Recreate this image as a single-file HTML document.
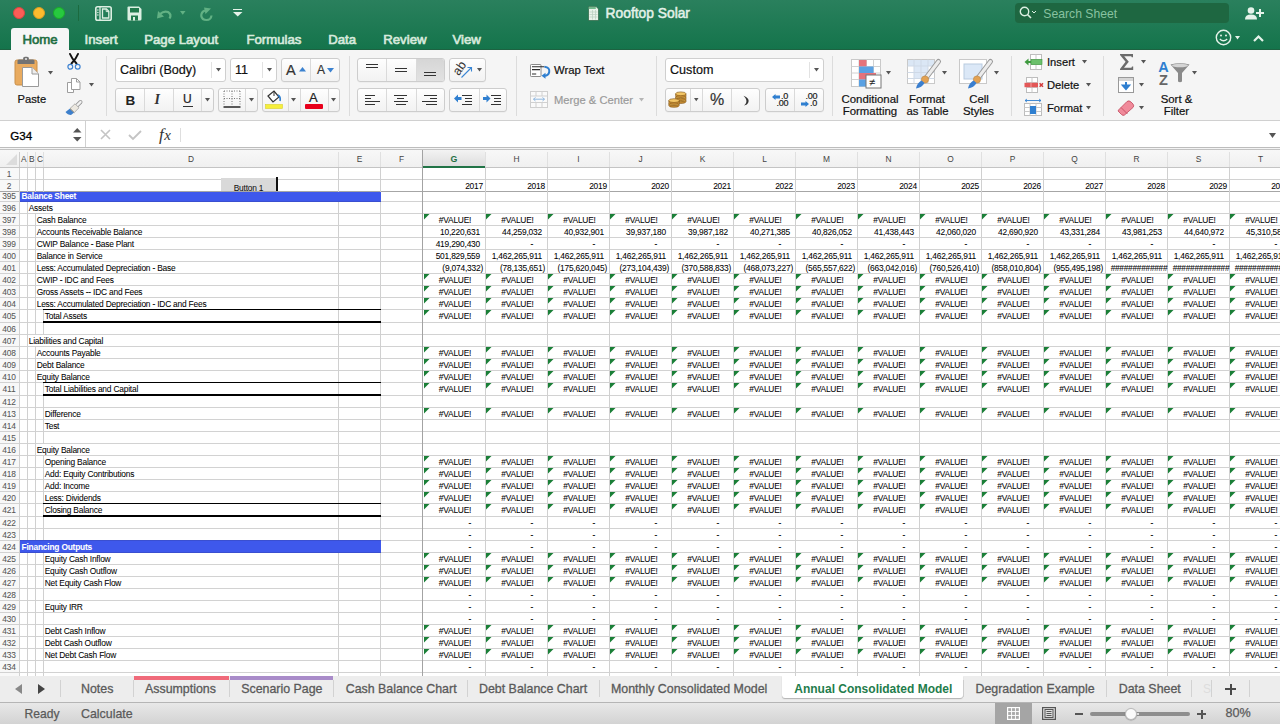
<!DOCTYPE html><html><head><meta charset="utf-8"><style>
html,body{margin:0;padding:0;}
body{width:1280px;height:724px;overflow:hidden;position:relative;font-family:'Liberation Sans', sans-serif;background:#fff;}
div{box-sizing:border-box;}
</style></head><body>
<div style="position:absolute;left:0px;top:0px;width:1280px;height:50px;background:linear-gradient(#2a805d,#14744b);"></div>
<div style="position:absolute;left:0px;top:49px;width:1280px;height:1px;background:#1d6241;"></div>
<div style="position:absolute;left:12.7px;top:6.7px;width:12px;height:12px;background:#fc5d57;border-radius:50%;border:0.5px solid #de4540;"></div>
<div style="position:absolute;left:32.8px;top:6.7px;width:12px;height:12px;background:#fdbb2e;border-radius:50%;border:0.5px solid #dd9d22;"></div>
<div style="position:absolute;left:52.8px;top:6.7px;width:12px;height:12px;background:#27c93f;border-radius:50%;border:0.5px solid #1aab29;"></div>
<div style="position:absolute;left:78px;top:5px;width:1px;height:16px;background:#1b6a3f;"></div>
<div style="position:absolute;left:605.6px;top:7.32px;font-size:13.8px;line-height:1;white-space:pre;color:#e3f1e8;font-weight:normal;-webkit-text-stroke:0.5px #e3f1e8;">Rooftop Solar</div>
<svg style="position:absolute;left:94.5px;top:5.5px;overflow:visible" width="17" height="15" viewBox="0 0 17 15"><rect x="0.8" y="0.8" width="15.4" height="13.4" rx="1.8" fill="none" stroke="#dcefe2" stroke-width="1.6"/><path d="M5 1 V14" stroke="#dcefe2" stroke-width="1.3"/><circle cx="2.9" cy="4" r="0.75" fill="#dcefe2"/><circle cx="2.9" cy="6.5" r="0.75" fill="#dcefe2"/><circle cx="2.9" cy="9" r="0.75" fill="#dcefe2"/><path d="M7.5 3 H11.5 L13.8 5.3 V12 H7.5 Z" fill="none" stroke="#dcefe2" stroke-width="1.3"/><path d="M11.2 3 V5.6 H13.8" fill="none" stroke="#dcefe2" stroke-width="1"/></svg>
<svg style="position:absolute;left:126.5px;top:5.5px;overflow:visible" width="15" height="15" viewBox="0 0 15 15"><path d="M1.5 0.5 H12 L14.5 3 V13 Q14.5 14.5 13 14.5 H1.5 Q0.5 14.5 0.5 13.5 V1.5 Q0.5 0.5 1.5 0.5 Z" fill="#dcefe2"/><rect x="3" y="2" width="9" height="4.5" fill="#227a4d"/><rect x="4" y="9.5" width="7" height="5" fill="#227a4d"/><rect x="6" y="11" width="2" height="3.5" fill="#dcefe2"/></svg>
<svg style="position:absolute;left:156.5px;top:8.5px;overflow:visible" width="16" height="11" viewBox="0 0 16 11"><path d="M3 5 Q7 1.5 11 3 Q15 5.5 12.5 9.5" fill="none" stroke="#62b184" stroke-width="2.2"/><path d="M0 9.5 L1 2 L7 7.5 Z" fill="#62b184"/></svg>
<svg style="position:absolute;left:179.95px;top:10.7px;overflow:visible" width="5.5" height="3.8" viewBox="0 0 5.5 3.8"><path d="M0 0 L5.5 0 L2.75 3.8 Z" fill="#62b184"/></svg>
<svg style="position:absolute;left:199.5px;top:6.5px;overflow:visible" width="14" height="14" viewBox="0 0 14 14"><path d="M5 3.5 Q1 5 1.3 9 Q2 13 6.5 13 Q11 13 11.5 8.5" fill="none" stroke="#62b184" stroke-width="2.2"/><path d="M4 0.5 L11 1.5 L5.5 7 Z" fill="#62b184"/></svg>
<div style="position:absolute;left:233px;top:9px;width:8.5px;height:1.4px;background:#e6f3ea;"></div>
<svg style="position:absolute;left:232.5px;top:11.5px;overflow:visible" width="9.5" height="5" viewBox="0 0 9.5 5"><path d="M0 0 H9.5 L4.75 4.6 Z" fill="#e6f3ea"/></svg>
<svg style="position:absolute;left:587.5px;top:5.5px;overflow:visible" width="11" height="15" viewBox="0 0 11 15"><path d="M0.5 0.5 H8 L10.5 3 V14.5 H0.5 Z" fill="#e9f3ea" stroke="#1a5533" stroke-width="0.6"/><rect x="0.8" y="0.8" width="7" height="2.2" fill="#74b98d"/><path d="M1.5 6 H9.5 M1.5 8.5 H9.5 M1.5 11 H9.5 M4.5 4 V13.5 M7.5 4 V13.5" stroke="#b9cfbf" stroke-width="0.7"/></svg>
<div style="position:absolute;left:1015px;top:3px;width:214px;height:20px;background:#1e6741;border-radius:4px;"></div>
<svg style="position:absolute;left:1019px;top:6px;overflow:visible" width="16" height="13" viewBox="0 0 16 13"><circle cx="5.5" cy="5.5" r="4.2" fill="none" stroke="#dcefe2" stroke-width="1.4"/><path d="M8.5 8.5 L12 12" stroke="#dcefe2" stroke-width="1.6"/><path d="M13 5 L15 7 L17 5" fill="none" stroke="#dcefe2" stroke-width="1"/></svg>
<div style="position:absolute;left:1043.3px;top:8.17px;font-size:12.2px;line-height:1;white-space:pre;color:#88c2a0;font-weight:normal;">Search Sheet</div>
<svg style="position:absolute;left:1244.5px;top:6.5px;overflow:visible" width="19" height="13" viewBox="0 0 19 13"><circle cx="6" cy="3.5" r="3.3" fill="#e6f3ea"/><path d="M0 12.5 Q0 7.5 6 7.5 Q12 7.5 12 12.5 Z" fill="#e6f3ea"/><path d="M15 2 V10 M11 6 H19" stroke="#e6f3ea" stroke-width="2"/></svg>
<svg style="position:absolute;left:1214.5px;top:29px;overflow:visible" width="17" height="17" viewBox="0 0 17 17"><circle cx="8.5" cy="8.5" r="7.2" fill="none" stroke="#e6f3ea" stroke-width="1.4"/><circle cx="6" cy="6.5" r="1" fill="#e6f3ea"/><circle cx="11" cy="6.5" r="1" fill="#e6f3ea"/><path d="M4.8 10 Q8.5 13.5 12.2 10" fill="none" stroke="#e6f3ea" stroke-width="1.3"/></svg>
<svg style="position:absolute;left:1235.0px;top:35.75px;overflow:visible" width="5" height="3.5" viewBox="0 0 5 3.5"><path d="M0 0 L5 0 L2.5 3.5 Z" fill="#e6f3ea"/></svg>
<svg style="position:absolute;left:1252.5px;top:34.5px;overflow:visible" width="11" height="7" viewBox="0 0 11 7"><path d="M1 6 L5.5 1.5 L10 6" fill="none" stroke="#e6f3ea" stroke-width="2.2"/></svg>
<div style="position:absolute;left:11px;top:28px;width:58px;height:22px;background:#f6f6f6;border-radius:3px 3px 0 0;"></div>
<div style="position:absolute;left:22.5px;top:32.83px;font-size:13.2px;line-height:1;white-space:pre;color:#1e6e42;font-weight:normal;-webkit-text-stroke:0.65px #1e6e42;">Home</div>
<div style="position:absolute;left:84.6px;top:32.83px;font-size:13.2px;line-height:1;white-space:pre;color:#d7eadd;font-weight:normal;-webkit-text-stroke:0.65px #d7eadd;">Insert</div>
<div style="position:absolute;left:144.2px;top:32.83px;font-size:13.2px;line-height:1;white-space:pre;color:#d7eadd;font-weight:normal;-webkit-text-stroke:0.65px #d7eadd;">Page Layout</div>
<div style="position:absolute;left:246.4px;top:32.83px;font-size:13.2px;line-height:1;white-space:pre;color:#d7eadd;font-weight:normal;-webkit-text-stroke:0.65px #d7eadd;">Formulas</div>
<div style="position:absolute;left:328.25px;top:32.83px;font-size:13.2px;line-height:1;white-space:pre;color:#d7eadd;font-weight:normal;-webkit-text-stroke:0.65px #d7eadd;">Data</div>
<div style="position:absolute;left:383.25px;top:32.83px;font-size:13.2px;line-height:1;white-space:pre;color:#d7eadd;font-weight:normal;-webkit-text-stroke:0.65px #d7eadd;">Review</div>
<div style="position:absolute;left:452.5px;top:32.83px;font-size:13.2px;line-height:1;white-space:pre;color:#d7eadd;font-weight:normal;-webkit-text-stroke:0.65px #d7eadd;">View</div>
<div style="position:absolute;left:0px;top:50px;width:1280px;height:71px;background:#f5f5f5;border-bottom:1px solid #d0d0d0;"></div>
<svg style="position:absolute;left:14px;top:56px;overflow:visible" width="28" height="32" viewBox="0 0 28 32"><rect x="1" y="4" width="22" height="25" rx="2" fill="#e9ab5f" stroke="#c98f48" stroke-width="1"/><path d="M5 3.5 h14 a1.5 1.5 0 0 1 1.5 1.5 v3 h-17 v-3 a1.5 1.5 0 0 1 1.5 -1.5 z" fill="#737373"/><rect x="9" y="0.8" width="6" height="4" rx="2" fill="#737373"/><circle cx="12" cy="3" r="1" fill="#e9e9e9"/><path d="M8.5 11.5 h9.5 l6.5 6.5 v12.5 h-16 z" fill="#fff" stroke="#9a9a9a" stroke-width="1"/><path d="M18 11.5 v6.5 h6.5" fill="#eee" stroke="#9a9a9a" stroke-width="1"/></svg><div style="position:absolute;left:17.5px;top:93.52px;font-size:11.2px;line-height:1;white-space:pre;color:#111;font-weight:normal;-webkit-text-stroke:0.2px #111;">Paste</div><svg style="position:absolute;left:48.0px;top:71.05px;overflow:visible" width="5" height="3.5" viewBox="0 0 5 3.5"><path d="M0 0 L5 0 L2.5 3.5 Z" fill="#555"/></svg><svg style="position:absolute;left:66px;top:53px;overflow:visible" width="16" height="18" viewBox="0 0 16 18"><path d="M4 1 Q6 6 10.5 10.5 M12 1 Q10 6 5.5 10.5" stroke="#111" stroke-width="2" fill="none" stroke-linecap="round"/><circle cx="4.3" cy="13.8" r="2.4" fill="none" stroke="#3d82d1" stroke-width="1.2"/><circle cx="11.7" cy="13.8" r="2.4" fill="none" stroke="#3d82d1" stroke-width="1.2"/></svg><svg style="position:absolute;left:66px;top:77px;overflow:visible" width="16" height="17" viewBox="0 0 16 17"><path d="M1.5 5.5 h6 l0 0 v10 h-6 z" fill="#fff" stroke="#9d9d9d"/><path d="M5.5 1.5 h5 l3.5 3.5 v7.5 h-8.5 z" fill="#fff" stroke="#9d9d9d"/><path d="M10.5 1.5 v3.5 h3.5" fill="none" stroke="#9d9d9d"/></svg><svg style="position:absolute;left:89.0px;top:83.05px;overflow:visible" width="5" height="3.5" viewBox="0 0 5 3.5"><path d="M0 0 L5 0 L2.5 3.5 Z" fill="#555"/></svg><svg style="position:absolute;left:65px;top:100px;overflow:visible" width="18" height="16" viewBox="0 0 18 16"><path d="M15.5 2 L11.5 6" stroke="#9a9a9a" stroke-width="4" stroke-linecap="round"/><path d="M15.5 2 L11.5 6" stroke="#f2f2f2" stroke-width="2.4" stroke-linecap="round"/><path d="M5 8.5 L10 3.8 L14 7.8 L9.2 12.6 Z" fill="#ece8e0" stroke="#9a9a9a" stroke-width="0.7"/><path d="M5 8.5 L7.2 10.6 L9.2 12.6 L6 15 Q2.5 15 0.5 12 Z" fill="#3d7fcb"/><path d="M5 8.5 L9.2 12.6" stroke="#b59e7a" stroke-width="1"/></svg><div style="position:absolute;left:106px;top:56px;width:1px;height:60px;background:#dcdcdc;"></div><div style="position:absolute;left:115px;top:58px;width:111px;height:24px;border:1px solid #cfcfcf;border-radius:3px;background:#fff;"></div><div style="position:absolute;left:211px;top:62px;width:1px;height:16px;background:#e2e2e2;"></div><div style="position:absolute;left:120px;top:64.33px;font-size:12.6px;line-height:1;white-space:pre;color:#111;font-weight:normal;-webkit-text-stroke:0.2px #111;">Calibri (Body)</div><svg style="position:absolute;left:216.0px;top:68.25px;overflow:visible" width="5" height="3.5" viewBox="0 0 5 3.5"><path d="M0 0 L5 0 L2.5 3.5 Z" fill="#555"/></svg><div style="position:absolute;left:230px;top:58px;width:47px;height:24px;border:1px solid #cfcfcf;border-radius:3px;background:#fff;"></div><div style="position:absolute;left:262px;top:62px;width:1px;height:16px;background:#e2e2e2;"></div><div style="position:absolute;left:235px;top:64.33px;font-size:12.6px;line-height:1;white-space:pre;color:#111;font-weight:normal;-webkit-text-stroke:0.2px #111;">11</div><svg style="position:absolute;left:267.0px;top:68.25px;overflow:visible" width="5" height="3.5" viewBox="0 0 5 3.5"><path d="M0 0 L5 0 L2.5 3.5 Z" fill="#555"/></svg><div style="position:absolute;left:281px;top:58px;width:59px;height:24px;border:1px solid #cdcdcd;border-radius:3px;background:linear-gradient(#fefefe,#f2f2f2);box-shadow:0 0.5px 0 rgba(0,0,0,0.06);"></div><div style="position:absolute;left:310px;top:59px;width:1px;height:22px;background:#dadada;"></div><div style="position:absolute;left:286px;top:62.53px;font-size:14.5px;line-height:1;white-space:pre;color:#333;font-weight:normal;-webkit-text-stroke:0.2px #333;">A</div><svg style="position:absolute;left:299px;top:67px;overflow:visible" width="8" height="5" viewBox="0 0 8 5"><path d="M0 4.5 L7 4.5 L3.5 0 Z" fill="#3b82d0"/></svg><div style="position:absolute;left:317px;top:63.84px;font-size:12px;line-height:1;white-space:pre;color:#333;font-weight:normal;-webkit-text-stroke:0.2px #333;">A</div><svg style="position:absolute;left:327px;top:68px;overflow:visible" width="8" height="5" viewBox="0 0 8 5"><path d="M0 0 L7 0 L3.5 4.5 Z" fill="#3b82d0"/></svg><div style="position:absolute;left:115px;top:88px;width:99px;height:24px;border:1px solid #cdcdcd;border-radius:3px;background:linear-gradient(#fefefe,#f2f2f2);box-shadow:0 0.5px 0 rgba(0,0,0,0.06);"></div><div style="position:absolute;left:144px;top:89px;width:1px;height:22px;background:#dadada;"></div><div style="position:absolute;left:173px;top:89px;width:1px;height:22px;background:#dadada;"></div><div style="position:absolute;left:201px;top:89px;width:1px;height:22px;background:#dadada;"></div><div style="position:absolute;left:125.5px;top:93.57px;font-size:13.5px;line-height:1;white-space:pre;color:#222;font-weight:bold;">B</div><div style="position:absolute;left:154.5px;top:92.5px;font-family:'Liberation Serif',serif;font-style:italic;font-weight:bold;font-size:14px;line-height:1;color:#333;">I</div><div style="position:absolute;left:183px;top:93.34px;font-size:12px;line-height:1;white-space:pre;color:#222;font-weight:normal;-webkit-text-stroke:0.2px #222;">U</div><div style="position:absolute;left:183px;top:106px;width:10px;height:1px;background:#333;"></div><svg style="position:absolute;left:205.0px;top:98.25px;overflow:visible" width="5" height="3.5" viewBox="0 0 5 3.5"><path d="M0 0 L5 0 L2.5 3.5 Z" fill="#555"/></svg><div style="position:absolute;left:218px;top:88px;width:40px;height:24px;border:1px solid #cdcdcd;border-radius:3px;background:linear-gradient(#fefefe,#f2f2f2);box-shadow:0 0.5px 0 rgba(0,0,0,0.06);"></div><div style="position:absolute;left:245px;top:89px;width:1px;height:22px;background:#dadada;"></div><svg style="position:absolute;left:223px;top:90px;overflow:visible" width="18" height="18" viewBox="0 0 18 18"><path d="M1 1 H17 M1 1 V16 M17 1 V16 M9 1 V16 M1 8.5 H17" stroke="#777" stroke-width="1" stroke-dasharray="1 1.5" fill="none"/><path d="M0.5 17 H17.5" stroke="#333" stroke-width="1.6"/></svg><svg style="position:absolute;left:249.0px;top:98.25px;overflow:visible" width="5" height="3.5" viewBox="0 0 5 3.5"><path d="M0 0 L5 0 L2.5 3.5 Z" fill="#555"/></svg><div style="position:absolute;left:262px;top:88px;width:78px;height:24px;border:1px solid #cdcdcd;border-radius:3px;background:linear-gradient(#fefefe,#f2f2f2);box-shadow:0 0.5px 0 rgba(0,0,0,0.06);"></div><div style="position:absolute;left:288px;top:89px;width:1px;height:22px;background:#dadada;"></div><div style="position:absolute;left:300px;top:89px;width:1px;height:22px;background:#dadada;"></div><div style="position:absolute;left:328px;top:89px;width:1px;height:22px;background:#dadada;"></div><svg style="position:absolute;left:265px;top:89px;overflow:visible" width="18" height="20" viewBox="0 0 18 20"><path d="M3 7 L9 2 L14 8 L8 13 Z" fill="#fff" stroke="#333" stroke-width="1.2"/><path d="M9 2 V7" stroke="#333" stroke-width="1"/><path d="M13 6 Q16 8 15 12" stroke="#2f7fd0" stroke-width="1.6" fill="none"/><rect x="0.5" y="15.5" width="17" height="4" fill="#f6ef3c" stroke="#d9d12a" stroke-width="0.6"/></svg><svg style="position:absolute;left:291.3px;top:98.25px;overflow:visible" width="5" height="3.5" viewBox="0 0 5 3.5"><path d="M0 0 L5 0 L2.5 3.5 Z" fill="#555"/></svg><div style="position:absolute;left:309px;top:90.80px;font-size:13px;line-height:1;white-space:pre;color:#222;font-weight:normal;-webkit-text-stroke:0.2px #222;">A</div><div style="position:absolute;left:305px;top:104px;width:18px;height:4.5px;background:#e8001c;border-radius:1px;"></div><svg style="position:absolute;left:331.0px;top:98.25px;overflow:visible" width="5" height="3.5" viewBox="0 0 5 3.5"><path d="M0 0 L5 0 L2.5 3.5 Z" fill="#555"/></svg><div style="position:absolute;left:349px;top:56px;width:1px;height:60px;background:#dcdcdc;"></div><div style="position:absolute;left:357px;top:58px;width:88px;height:24px;border:1px solid #cdcdcd;border-radius:3px;background:linear-gradient(#fefefe,#f2f2f2);box-shadow:0 0.5px 0 rgba(0,0,0,0.06);"></div><div style="position:absolute;left:416px;top:59px;width:28px;height:22px;background:linear-gradient(#d6d6d6,#e2e2e2);border-radius:0 2px 2px 0;"></div><div style="position:absolute;left:386px;top:59px;width:1px;height:22px;background:#dadada;"></div><div style="position:absolute;left:416px;top:59px;width:1px;height:22px;background:#dadada;"></div><div style="position:absolute;left:366px;top:64px;width:12px;height:1px;background:#333;"></div><div style="position:absolute;left:366px;top:67px;width:12px;height:1px;background:#333;"></div><div style="position:absolute;left:395px;top:68px;width:12px;height:1px;background:#333;"></div><div style="position:absolute;left:395px;top:71px;width:12px;height:1px;background:#333;"></div><div style="position:absolute;left:424px;top:72px;width:12px;height:1px;background:#333;"></div><div style="position:absolute;left:424px;top:75px;width:12px;height:1px;background:#333;"></div><div style="position:absolute;left:449px;top:58px;width:37px;height:24px;border:1px solid #cdcdcd;border-radius:3px;background:linear-gradient(#fefefe,#f2f2f2);box-shadow:0 0.5px 0 rgba(0,0,0,0.06);"></div><div style="position:absolute;left:453px;top:60.5px;width:16px;height:14px;font-size:12.5px;line-height:1;color:#333;transform:rotate(-55deg);transform-origin:50% 50%;">ab</div><svg style="position:absolute;left:459px;top:63px;overflow:visible" width="16" height="16" viewBox="0 0 16 16"><path d="M2.5 14.5 L12.5 4.5 M8.5 4.5 H12.5 V8.5" stroke="#3a86d4" stroke-width="1.1" fill="none"/></svg><svg style="position:absolute;left:477.0px;top:67.75px;overflow:visible" width="5" height="3.5" viewBox="0 0 5 3.5"><path d="M0 0 L5 0 L2.5 3.5 Z" fill="#555"/></svg><div style="position:absolute;left:357px;top:88px;width:88px;height:24px;border:1px solid #cdcdcd;border-radius:3px;background:linear-gradient(#fefefe,#f2f2f2);box-shadow:0 0.5px 0 rgba(0,0,0,0.06);"></div><div style="position:absolute;left:386px;top:89px;width:1px;height:22px;background:#dadada;"></div><div style="position:absolute;left:416px;top:89px;width:1px;height:22px;background:#dadada;"></div><div style="position:absolute;left:365px;top:95px;width:10px;height:1px;background:#333;"></div><div style="position:absolute;left:365px;top:98px;width:6px;height:1px;background:#333;"></div><div style="position:absolute;left:365px;top:101px;width:15px;height:1px;background:#333;"></div><div style="position:absolute;left:365px;top:104px;width:10px;height:1px;background:#333;"></div><div style="position:absolute;left:394px;top:95px;width:13px;height:1px;background:#333;"></div><div style="position:absolute;left:397px;top:98px;width:7px;height:1px;background:#333;"></div><div style="position:absolute;left:394px;top:101px;width:14px;height:1px;background:#333;"></div><div style="position:absolute;left:396px;top:104px;width:10px;height:1px;background:#333;"></div><div style="position:absolute;left:424px;top:95px;width:13px;height:1px;background:#333;"></div><div style="position:absolute;left:430px;top:98px;width:7px;height:1px;background:#333;"></div><div style="position:absolute;left:422px;top:101px;width:15px;height:1px;background:#333;"></div><div style="position:absolute;left:426px;top:104px;width:11px;height:1px;background:#333;"></div><div style="position:absolute;left:449px;top:88px;width:58px;height:24px;border:1px solid #cdcdcd;border-radius:3px;background:linear-gradient(#fefefe,#f2f2f2);box-shadow:0 0.5px 0 rgba(0,0,0,0.06);"></div><div style="position:absolute;left:479px;top:89px;width:1px;height:22px;background:#dadada;"></div><div style="position:absolute;left:462px;top:95px;width:10px;height:1px;background:#333;"></div><div style="position:absolute;left:465px;top:98px;width:7px;height:1px;background:#333;"></div><div style="position:absolute;left:465px;top:101px;width:7px;height:1px;background:#333;"></div><div style="position:absolute;left:462px;top:104px;width:10px;height:1px;background:#333;"></div><svg style="position:absolute;left:454px;top:94px;overflow:visible" width="8" height="9" viewBox="0 0 8 9"><path d="M0 4.5 L4 0.5 V3 H7.5 V6 H4 V8.5 Z" fill="#2f7fd0"/></svg><div style="position:absolute;left:491px;top:95px;width:10px;height:1px;background:#333;"></div><div style="position:absolute;left:494px;top:98px;width:7px;height:1px;background:#333;"></div><div style="position:absolute;left:494px;top:101px;width:7px;height:1px;background:#333;"></div><div style="position:absolute;left:491px;top:104px;width:10px;height:1px;background:#333;"></div><svg style="position:absolute;left:483px;top:94px;overflow:visible" width="8" height="9" viewBox="0 0 8 9"><path d="M7.5 4.5 L3.5 0.5 V3 H0 V6 H3.5 V8.5 Z" fill="#2f7fd0"/></svg><div style="position:absolute;left:516px;top:56px;width:1px;height:60px;background:#dcdcdc;"></div><svg style="position:absolute;left:529px;top:62px;overflow:visible" width="23" height="17" viewBox="0 0 23 17"><rect x="1.5" y="2.5" width="10.5" height="12" rx="0.8" fill="#fff" stroke="#8a8a8a" stroke-width="1"/><path d="M3 4.8 H15.5 M3 7.6 H11 M3 12 H7.2" stroke="#2b2b2b" stroke-width="1.1"/><path d="M15.5 4.8 Q21 5.5 20.2 10 Q19.5 13.6 15.5 13.8" stroke="#2f7fd0" stroke-width="2" fill="none"/><path d="M12.5 13.8 L16.5 10.8 V16.8 Z" fill="#2f7fd0"/></svg><div style="position:absolute;left:554px;top:64.93px;font-size:11.3px;line-height:1;white-space:pre;color:#111;font-weight:normal;-webkit-text-stroke:0.2px #111;">Wrap Text</div><svg style="position:absolute;left:530px;top:91px;overflow:visible" width="18" height="17" viewBox="0 0 18 17"><rect x="0.5" y="0.5" width="17" height="16" fill="#fafafa" stroke="#cfcfcf"/><path d="M0.5 5 H17.5 M0.5 11.5 H17.5 M6 0.5 V5 M12 0.5 V5 M6 11.5 V16.5 M12 11.5 V16.5" stroke="#d0d0d0"/><path d="M3.5 8.2 H14.5 M3.5 8.2 L5.5 6.5 M3.5 8.2 L5.5 10 M14.5 8.2 L12.5 6.5 M14.5 8.2 L12.5 10" stroke="#8fb7e0" stroke-width="1"/></svg><div style="position:absolute;left:554px;top:94.52px;font-size:11.2px;line-height:1;white-space:pre;color:#9a9a9a;font-weight:normal;-webkit-text-stroke:0.2px #9a9a9a;">Merge &amp; Center</div><svg style="position:absolute;left:639.0px;top:98.05px;overflow:visible" width="5" height="3.5" viewBox="0 0 5 3.5"><path d="M0 0 L5 0 L2.5 3.5 Z" fill="#b5b5b5"/></svg><div style="position:absolute;left:656px;top:56px;width:1px;height:60px;background:#dcdcdc;"></div><div style="position:absolute;left:665px;top:58px;width:159px;height:24px;border:1px solid #cfcfcf;border-radius:3px;background:#fff;"></div><div style="position:absolute;left:809px;top:62px;width:1px;height:16px;background:#e2e2e2;"></div><div style="position:absolute;left:670px;top:64.33px;font-size:12.6px;line-height:1;white-space:pre;color:#111;font-weight:normal;-webkit-text-stroke:0.2px #111;">Custom</div><svg style="position:absolute;left:814.0px;top:68.25px;overflow:visible" width="5" height="3.5" viewBox="0 0 5 3.5"><path d="M0 0 L5 0 L2.5 3.5 Z" fill="#555"/></svg><div style="position:absolute;left:665px;top:88px;width:95px;height:24px;border:1px solid #cdcdcd;border-radius:3px;background:linear-gradient(#fefefe,#f2f2f2);box-shadow:0 0.5px 0 rgba(0,0,0,0.06);"></div><div style="position:absolute;left:690px;top:89px;width:1px;height:22px;background:#dadada;"></div><div style="position:absolute;left:702px;top:89px;width:1px;height:22px;background:#dadada;"></div><div style="position:absolute;left:731px;top:89px;width:1px;height:22px;background:#dadada;"></div><svg style="position:absolute;left:668px;top:91px;overflow:visible" width="20" height="17" viewBox="0 0 20 17"><path d="M7.6000000000000005 8.8 v1.8 a5.2 1.9 0 0 0 10.4 0 v-1.8" fill="#c98f35" stroke="#7a4e10" stroke-width="0.6"/><ellipse cx="12.8" cy="8.8" rx="5.2" ry="1.9" fill="#f2c565" stroke="#7a4e10" stroke-width="0.6"/><path d="M7.6000000000000005 5.8 v1.8 a5.2 1.9 0 0 0 10.4 0 v-1.8" fill="#c98f35" stroke="#7a4e10" stroke-width="0.6"/><ellipse cx="12.8" cy="5.8" rx="5.2" ry="1.9" fill="#f2c565" stroke="#7a4e10" stroke-width="0.6"/><path d="M7.6000000000000005 2.8 v1.8 a5.2 1.9 0 0 0 10.4 0 v-1.8" fill="#c98f35" stroke="#7a4e10" stroke-width="0.6"/><ellipse cx="12.8" cy="2.8" rx="5.2" ry="1.9" fill="#f2c565" stroke="#7a4e10" stroke-width="0.6"/><path d="M0.7999999999999998 12.6 v1.8 a5.2 1.9 0 0 0 10.4 0 v-1.8" fill="#c98f35" stroke="#7a4e10" stroke-width="0.6"/><ellipse cx="6.0" cy="12.6" rx="5.2" ry="1.9" fill="#f2c565" stroke="#7a4e10" stroke-width="0.6"/><path d="M0.7999999999999998 9.6 v1.8 a5.2 1.9 0 0 0 10.4 0 v-1.8" fill="#c98f35" stroke="#7a4e10" stroke-width="0.6"/><ellipse cx="6.0" cy="9.6" rx="5.2" ry="1.9" fill="#f2c565" stroke="#7a4e10" stroke-width="0.6"/></svg><svg style="position:absolute;left:693.75px;top:98.4px;overflow:visible" width="4.5" height="3.2" viewBox="0 0 4.5 3.2"><path d="M0 0 L4.5 0 L2.25 3.2 Z" fill="#555"/></svg><div style="position:absolute;left:710px;top:91.96px;font-size:16px;line-height:1;white-space:pre;color:#333;font-weight:normal;-webkit-text-stroke:0.2px #333;font-weight:300;">%</div><svg style="position:absolute;left:742px;top:95px;overflow:visible" width="8" height="11" viewBox="0 0 8 11"><path d="M1.5 0.8 Q7.5 3 6.5 7 Q5.5 10 2 10.5 Q5 8 4.3 5 Q3.8 3 1.5 0.8 Z" fill="#333"/></svg><div style="position:absolute;left:765px;top:88px;width:59px;height:24px;border:1px solid #cdcdcd;border-radius:3px;background:linear-gradient(#fefefe,#f2f2f2);box-shadow:0 0.5px 0 rgba(0,0,0,0.06);"></div><div style="position:absolute;left:794px;top:89px;width:1px;height:22px;background:#dadada;"></div><svg style="position:absolute;left:772px;top:93.5px;overflow:visible" width="9" height="6" viewBox="0 0 9 6"><path d="M0 3 L3.5 0 V1.6 H8 V4.4 H3.5 V6 Z" fill="#2f7fd0"/></svg><div style="position:absolute;left:781px;top:91.98px;font-size:9px;line-height:1;white-space:pre;color:#222;font-weight:normal;-webkit-text-stroke:0.2px #222;letter-spacing:-0.2px;">.0</div><div style="position:absolute;left:776.5px;top:99.38px;font-size:9px;line-height:1;white-space:pre;color:#222;font-weight:normal;-webkit-text-stroke:0.2px #222;letter-spacing:-0.2px;">.00</div><div style="position:absolute;left:805.5px;top:91.98px;font-size:9px;line-height:1;white-space:pre;color:#222;font-weight:normal;-webkit-text-stroke:0.2px #222;letter-spacing:-0.2px;">.00</div><svg style="position:absolute;left:800.5px;top:101px;overflow:visible" width="9" height="6" viewBox="0 0 9 6"><path d="M8 3 L4.5 0 V1.6 H0 V4.4 H4.5 V6 Z" fill="#2f7fd0"/></svg><div style="position:absolute;left:810px;top:99.38px;font-size:9px;line-height:1;white-space:pre;color:#222;font-weight:normal;-webkit-text-stroke:0.2px #222;letter-spacing:-0.2px;">.0</div><div style="position:absolute;left:832px;top:56px;width:1px;height:60px;background:#dcdcdc;"></div><svg style="position:absolute;left:851px;top:59px;overflow:visible" width="32" height="30" viewBox="0 0 32 30"><rect x="0.5" y="0.5" width="29" height="27" fill="#fff" stroke="#c9c9c9"/><path d="M0.5 7.5 H29.5 M0.5 14 H29.5 M0.5 20.5 H29.5 M8 0.5 V27.5 M15.5 0.5 V27.5 M22.5 0.5 V27.5" stroke="#d2d2d2"/><rect x="8" y="1" width="7.5" height="6.5" fill="#e5737b"/><rect x="8" y="7.5" width="14.5" height="6.5" fill="#5aa1e3"/><rect x="8" y="14" width="17" height="6.5" fill="#e5737b"/><rect x="8" y="20.5" width="7.5" height="7" fill="#5aa1e3"/><rect x="15" y="16" width="15" height="13" fill="#fff" stroke="#777" stroke-width="1"/><text x="18" y="27" font-family="Liberation Sans" font-size="11" fill="#222">≠</text></svg><svg style="position:absolute;left:885.5px;top:70.75px;overflow:visible" width="5" height="3.5" viewBox="0 0 5 3.5"><path d="M0 0 L5 0 L2.5 3.5 Z" fill="#555"/></svg><div style="position:absolute;left:770px;width:200px;text-align:center;top:94.35px;font-size:11.4px;line-height:1;white-space:pre;color:#111;font-weight:normal;-webkit-text-stroke:0.2px #111;">Conditional</div><div style="position:absolute;left:770px;width:200px;text-align:center;top:105.65px;font-size:11.4px;line-height:1;white-space:pre;color:#111;font-weight:normal;-webkit-text-stroke:0.2px #111;">Formatting</div><svg style="position:absolute;left:907px;top:59px;overflow:visible" width="34" height="30" viewBox="0 0 34 30"><rect x="0.5" y="0.5" width="27" height="24" fill="#fff" stroke="#c9c9c9"/><rect x="1" y="1" width="26" height="6" fill="#dbe7f5"/><rect x="7" y="7" width="14" height="13" fill="#dde8f6"/><path d="M0.5 7 H27.5 M0.5 13.5 H27.5 M0.5 19.5 H27.5 M7 0.5 V24.5 M14 0.5 V24.5 M21 0.5 V24.5" stroke="#cfd9e6"/><path d="M31.5 2.5 L19 19" stroke="#9a9a9a" stroke-width="5" stroke-linecap="round"/><path d="M31.5 2.5 L19 19" stroke="#ececec" stroke-width="3" stroke-linecap="round"/><circle cx="18" cy="20.5" r="3.6" fill="#e3a253" stroke="#b9833f" stroke-width="0.6"/><path d="M9 29.5 Q10 24 14.5 21.5 L17.5 24 Q15 28.5 9 29.5 Z" fill="#3b7fcf"/></svg><svg style="position:absolute;left:941.5px;top:70.75px;overflow:visible" width="5" height="3.5" viewBox="0 0 5 3.5"><path d="M0 0 L5 0 L2.5 3.5 Z" fill="#555"/></svg><div style="position:absolute;left:827px;width:200px;text-align:center;top:94.35px;font-size:11.4px;line-height:1;white-space:pre;color:#111;font-weight:normal;-webkit-text-stroke:0.2px #111;">Format</div><div style="position:absolute;left:827.5px;width:200px;text-align:center;top:105.65px;font-size:11.4px;line-height:1;white-space:pre;color:#111;font-weight:normal;-webkit-text-stroke:0.2px #111;">as Table</div><svg style="position:absolute;left:959px;top:59px;overflow:visible" width="34" height="30" viewBox="0 0 34 30"><rect x="0.5" y="0.5" width="27" height="24" fill="#fff" stroke="#c9c9c9"/><rect x="5" y="5" width="18" height="15" fill="#dbe8f7" stroke="#b9cbe0"/><path d="M31.5 2.5 L19 19" stroke="#9a9a9a" stroke-width="5" stroke-linecap="round"/><path d="M31.5 2.5 L19 19" stroke="#ececec" stroke-width="3" stroke-linecap="round"/><circle cx="18" cy="20.5" r="3.6" fill="#e3a253" stroke="#b9833f" stroke-width="0.6"/><path d="M9 29.5 Q10 24 14.5 21.5 L17.5 24 Q15 28.5 9 29.5 Z" fill="#3b7fcf"/></svg><svg style="position:absolute;left:993.5px;top:70.75px;overflow:visible" width="5" height="3.5" viewBox="0 0 5 3.5"><path d="M0 0 L5 0 L2.5 3.5 Z" fill="#555"/></svg><div style="position:absolute;left:879px;width:200px;text-align:center;top:94.35px;font-size:11.4px;line-height:1;white-space:pre;color:#111;font-weight:normal;-webkit-text-stroke:0.2px #111;">Cell</div><div style="position:absolute;left:878.5px;width:200px;text-align:center;top:105.65px;font-size:11.4px;line-height:1;white-space:pre;color:#111;font-weight:normal;-webkit-text-stroke:0.2px #111;">Styles</div><div style="position:absolute;left:1011px;top:56px;width:1px;height:60px;background:#dcdcdc;"></div><svg style="position:absolute;left:1024px;top:54px;overflow:visible" width="20" height="17" viewBox="0 0 20 17"><rect x="6.5" y="0.5" width="11" height="15" fill="#fff" stroke="#bdbdbd"/><path d="M6.5 5.5 H17.5 M6.5 10.5 H17.5 M12 0.5 V15.5" stroke="#c9c9c9"/><rect x="7" y="5.5" width="11" height="5" fill="#6cc06c" stroke="#3f9a3f" stroke-width="0.6"/><path d="M0.5 8 L4.5 4.5 V11.5 Z" fill="#3f9a3f"/><path d="M4 8 H7" stroke="#3f9a3f" stroke-width="2"/></svg><div style="position:absolute;left:1047px;top:56.82px;font-size:11.2px;line-height:1;white-space:pre;color:#111;font-weight:normal;-webkit-text-stroke:0.2px #111;">Insert</div><svg style="position:absolute;left:1082.0px;top:60.25px;overflow:visible" width="5" height="3.5" viewBox="0 0 5 3.5"><path d="M0 0 L5 0 L2.5 3.5 Z" fill="#555"/></svg><svg style="position:absolute;left:1024px;top:77px;overflow:visible" width="22" height="17" viewBox="0 0 22 17"><rect x="2.5" y="0.5" width="11" height="15" fill="#fff" stroke="#bdbdbd"/><path d="M2.5 5.5 H13.5 M2.5 10.5 H13.5 M8 0.5 V15.5" stroke="#c9c9c9"/><rect x="0.5" y="5.8" width="13.5" height="4.4" fill="#e35757"/><path d="M7 5.8 V10.2" stroke="#f7b0b0" stroke-width="0.8"/><path d="M15.6 6.2 L19 9.8 M19 6.2 L15.6 9.8" stroke="#d23a3a" stroke-width="1.5"/></svg><div style="position:absolute;left:1047px;top:79.82px;font-size:11.2px;line-height:1;white-space:pre;color:#111;font-weight:normal;-webkit-text-stroke:0.2px #111;">Delete</div><svg style="position:absolute;left:1086.0px;top:83.25px;overflow:visible" width="5" height="3.5" viewBox="0 0 5 3.5"><path d="M0 0 L5 0 L2.5 3.5 Z" fill="#555"/></svg><svg style="position:absolute;left:1024px;top:99px;overflow:visible" width="20" height="17" viewBox="0 0 20 17"><path d="M1 1.5 H17" stroke="#2f7fd0" stroke-width="0.9"/><path d="M1 1.5 L3 0 M1 1.5 L3 3 M17 1.5 L15 0 M17 1.5 L15 3" stroke="#2f7fd0" stroke-width="0.8"/><rect x="0.5" y="4.5" width="17" height="12" fill="#fff" stroke="#bdbdbd"/><path d="M0.5 8.5 H17.5 M0.5 12.5 H17.5 M6 4.5 V16.5 M12 4.5 V16.5" stroke="#c9c9c9"/><rect x="6" y="7" width="6" height="8" fill="#2f7fd0"/></svg><div style="position:absolute;left:1047px;top:102.82px;font-size:11.2px;line-height:1;white-space:pre;color:#111;font-weight:normal;-webkit-text-stroke:0.2px #111;">Format</div><svg style="position:absolute;left:1086.0px;top:106.25px;overflow:visible" width="5" height="3.5" viewBox="0 0 5 3.5"><path d="M0 0 L5 0 L2.5 3.5 Z" fill="#555"/></svg><div style="position:absolute;left:1103px;top:56px;width:1px;height:60px;background:#dcdcdc;"></div><svg style="position:absolute;left:1119px;top:53px;overflow:visible" width="16" height="18" viewBox="0 0 16 18"><path d="M1 1 H14 V4.2 H12.8 L12.2 3.2 H5.2 L9.8 8.8 L5 14.8 H12.4 L13 13.6 H14.2 V17 H1 V16 L6.6 8.8 L1 2 Z" fill="#6b6b6b"/></svg><svg style="position:absolute;left:1141.0px;top:59.75px;overflow:visible" width="5" height="3.5" viewBox="0 0 5 3.5"><path d="M0 0 L5 0 L2.5 3.5 Z" fill="#555"/></svg><svg style="position:absolute;left:1118px;top:77px;overflow:visible" width="16" height="17" viewBox="0 0 16 17"><rect x="0.5" y="0.5" width="15" height="15" fill="#fff" stroke="#999"/><rect x="1" y="1" width="14" height="3" fill="#d6d6d6"/><path d="M8 5 V11 M5 8.5 L8 12 L11 8.5 Z" stroke="#2f7fd0" stroke-width="2" fill="#2f7fd0"/></svg><svg style="position:absolute;left:1138.5px;top:83.45px;overflow:visible" width="5" height="3.5" viewBox="0 0 5 3.5"><path d="M0 0 L5 0 L2.5 3.5 Z" fill="#555"/></svg><svg style="position:absolute;left:1117px;top:99px;overflow:visible" width="18" height="17" viewBox="0 0 18 17"><path d="M1.5 11 L10 2.5 Q12 1 14 3 L16 5 Q17.5 7 16 8.5 L7.5 16 Q6 17 4.5 15.5 L2 13 Q0.5 12 1.5 11 Z" fill="#f08a9a" stroke="#c2485c" stroke-width="0.8"/><path d="M4 8.5 L10.5 15" stroke="#c2485c" stroke-width="0.8"/></svg><svg style="position:absolute;left:1138.5px;top:106.25px;overflow:visible" width="5" height="3.5" viewBox="0 0 5 3.5"><path d="M0 0 L5 0 L2.5 3.5 Z" fill="#555"/></svg><div style="position:absolute;left:1158.3px;top:59.73px;font-size:14.5px;line-height:1;white-space:pre;color:#2f7fd0;font-weight:bold;">A</div><div style="position:absolute;left:1159px;top:72.93px;font-size:14.5px;line-height:1;white-space:pre;color:#666;font-weight:bold;">Z</div><svg style="position:absolute;left:1170px;top:63px;overflow:visible" width="20" height="20" viewBox="0 0 20 20"><path d="M0.5 1.5 Q10 -1 19.5 1.5 L12 10 V18.5 Q10 20 8 18.5 V10 Z" fill="#8a8a8a"/><ellipse cx="10" cy="2.5" rx="8" ry="1.8" fill="#d5d5d5"/></svg><svg style="position:absolute;left:1192.2px;top:71.25px;overflow:visible" width="5" height="3.5" viewBox="0 0 5 3.5"><path d="M0 0 L5 0 L2.5 3.5 Z" fill="#555"/></svg><div style="position:absolute;left:1076.5px;width:200px;text-align:center;top:94.35px;font-size:11.4px;line-height:1;white-space:pre;color:#111;font-weight:normal;-webkit-text-stroke:0.2px #111;">Sort &amp;</div><div style="position:absolute;left:1076.5px;width:200px;text-align:center;top:105.65px;font-size:11.4px;line-height:1;white-space:pre;color:#111;font-weight:normal;-webkit-text-stroke:0.2px #111;">Filter</div>
<div style="position:absolute;left:0px;top:121px;width:1280px;height:26px;background:#fff;"></div>
<div style="position:absolute;left:0px;top:147px;width:1280px;height:1px;background:#bdbdbd;"></div>
<div style="position:absolute;left:0px;top:148px;width:1280px;height:1px;background:#f4f4f4;"></div>
<div style="position:absolute;left:0px;top:149px;width:1280px;height:1px;background:#c2c2c2;"></div>
<div style="position:absolute;left:85px;top:121px;width:1px;height:26px;background:#d0d0d0;"></div>
<div style="position:absolute;left:10.2px;top:129.78px;font-size:11.6px;line-height:1;white-space:pre;color:#000;font-weight:normal;-webkit-text-stroke:0.3px #000;">G34</div>
<svg style="position:absolute;left:72.5px;top:127.5px;overflow:visible" width="9" height="5" viewBox="0 0 9 5"><path d="M0 4.5 H8.5 L4.25 0 Z" fill="#555"/></svg>
<svg style="position:absolute;left:72.5px;top:137px;overflow:visible" width="9" height="5" viewBox="0 0 9 5"><path d="M0 0 H8.5 L4.25 4.5 Z" fill="#555"/></svg>
<svg style="position:absolute;left:100px;top:129px;overflow:visible" width="11" height="11" viewBox="0 0 11 11"><path d="M1 1 L10 10 M10 1 L1 10" stroke="#c4c4c4" stroke-width="1.6"/></svg>
<svg style="position:absolute;left:128px;top:130px;overflow:visible" width="14" height="10" viewBox="0 0 14 10"><path d="M1 5 L5 9 L13 1" fill="none" stroke="#c4c4c4" stroke-width="1.8"/></svg>
<div style="position:absolute;left:159px;top:126px;font-family:'Liberation Serif',serif;font-style:italic;font-size:17px;line-height:1;color:#333;letter-spacing:0.5px;">f<span style="font-size:15px">x</span></div>
<div style="position:absolute;left:180px;top:128px;width:1px;height:14px;background:#dedede;"></div>
<svg style="position:absolute;left:1269.0px;top:132.5px;overflow:visible" width="7" height="5" viewBox="0 0 7 5"><path d="M0 0 L7 0 L3.5 5 Z" fill="#555"/></svg>
<div style="position:absolute;left:0px;top:150px;width:1280px;height:17px;background:linear-gradient(#f8f8f8,#f0f0f0);"></div>
<div style="position:absolute;left:0px;top:168px;width:19px;height:508px;background:#f8f8f8;"></div>
<div style="position:absolute;left:423px;top:150px;width:62px;height:17px;background:linear-gradient(#f3f3f3,#dcdcdc);"></div>
<div style="position:absolute;left:0px;top:167px;width:1280px;height:1px;background:#c4c4c4;"></div>
<div style="position:absolute;left:0px;top:179px;width:1280px;height:1px;background:#d2d2d2;"></div>
<div style="position:absolute;left:0px;top:191px;width:1280px;height:1px;background:#d2d2d2;"></div>
<div style="position:absolute;left:0px;top:201px;width:1280px;height:1px;background:#d2d2d2;"></div>
<div style="position:absolute;left:0px;top:213px;width:1280px;height:1px;background:#d2d2d2;"></div>
<div style="position:absolute;left:0px;top:225px;width:1280px;height:1px;background:#d2d2d2;"></div>
<div style="position:absolute;left:0px;top:237px;width:1280px;height:1px;background:#d2d2d2;"></div>
<div style="position:absolute;left:0px;top:249px;width:1280px;height:1px;background:#d2d2d2;"></div>
<div style="position:absolute;left:0px;top:261px;width:1280px;height:1px;background:#d2d2d2;"></div>
<div style="position:absolute;left:0px;top:273px;width:1280px;height:1px;background:#d2d2d2;"></div>
<div style="position:absolute;left:0px;top:285px;width:1280px;height:1px;background:#d2d2d2;"></div>
<div style="position:absolute;left:0px;top:297px;width:1280px;height:1px;background:#d2d2d2;"></div>
<div style="position:absolute;left:0px;top:309px;width:1280px;height:1px;background:#d2d2d2;"></div>
<div style="position:absolute;left:0px;top:322px;width:1280px;height:1px;background:#d2d2d2;"></div>
<div style="position:absolute;left:0px;top:334px;width:1280px;height:1px;background:#d2d2d2;"></div>
<div style="position:absolute;left:0px;top:346px;width:1280px;height:1px;background:#d2d2d2;"></div>
<div style="position:absolute;left:0px;top:358px;width:1280px;height:1px;background:#d2d2d2;"></div>
<div style="position:absolute;left:0px;top:370px;width:1280px;height:1px;background:#d2d2d2;"></div>
<div style="position:absolute;left:0px;top:382px;width:1280px;height:1px;background:#d2d2d2;"></div>
<div style="position:absolute;left:0px;top:395px;width:1280px;height:1px;background:#d2d2d2;"></div>
<div style="position:absolute;left:0px;top:407px;width:1280px;height:1px;background:#d2d2d2;"></div>
<div style="position:absolute;left:0px;top:419px;width:1280px;height:1px;background:#d2d2d2;"></div>
<div style="position:absolute;left:0px;top:431px;width:1280px;height:1px;background:#d2d2d2;"></div>
<div style="position:absolute;left:0px;top:443px;width:1280px;height:1px;background:#d2d2d2;"></div>
<div style="position:absolute;left:0px;top:455px;width:1280px;height:1px;background:#d2d2d2;"></div>
<div style="position:absolute;left:0px;top:467px;width:1280px;height:1px;background:#d2d2d2;"></div>
<div style="position:absolute;left:0px;top:479px;width:1280px;height:1px;background:#d2d2d2;"></div>
<div style="position:absolute;left:0px;top:491px;width:1280px;height:1px;background:#d2d2d2;"></div>
<div style="position:absolute;left:0px;top:503px;width:1280px;height:1px;background:#d2d2d2;"></div>
<div style="position:absolute;left:0px;top:516px;width:1280px;height:1px;background:#d2d2d2;"></div>
<div style="position:absolute;left:0px;top:528px;width:1280px;height:1px;background:#d2d2d2;"></div>
<div style="position:absolute;left:0px;top:540px;width:1280px;height:1px;background:#d2d2d2;"></div>
<div style="position:absolute;left:0px;top:552px;width:1280px;height:1px;background:#d2d2d2;"></div>
<div style="position:absolute;left:0px;top:564px;width:1280px;height:1px;background:#d2d2d2;"></div>
<div style="position:absolute;left:0px;top:576px;width:1280px;height:1px;background:#d2d2d2;"></div>
<div style="position:absolute;left:0px;top:588px;width:1280px;height:1px;background:#d2d2d2;"></div>
<div style="position:absolute;left:0px;top:600px;width:1280px;height:1px;background:#d2d2d2;"></div>
<div style="position:absolute;left:0px;top:612px;width:1280px;height:1px;background:#d2d2d2;"></div>
<div style="position:absolute;left:0px;top:624px;width:1280px;height:1px;background:#d2d2d2;"></div>
<div style="position:absolute;left:0px;top:636px;width:1280px;height:1px;background:#d2d2d2;"></div>
<div style="position:absolute;left:0px;top:648px;width:1280px;height:1px;background:#d2d2d2;"></div>
<div style="position:absolute;left:0px;top:660px;width:1280px;height:1px;background:#d2d2d2;"></div>
<div style="position:absolute;left:0px;top:672px;width:1280px;height:1px;background:#d2d2d2;"></div>
<div style="position:absolute;left:0px;top:191px;width:1280px;height:1px;background:#a6a6a6;"></div>
<div style="position:absolute;left:19px;top:168px;width:1px;height:508px;background:#d0d0d0;"></div>
<div style="position:absolute;left:19px;top:152px;width:1px;height:15px;background:#cdcdcd;"></div>
<div style="position:absolute;left:27px;top:168px;width:1px;height:508px;background:#d0d0d0;"></div>
<div style="position:absolute;left:27px;top:152px;width:1px;height:15px;background:#e0e0e0;"></div>
<div style="position:absolute;left:35px;top:168px;width:1px;height:508px;background:#d0d0d0;"></div>
<div style="position:absolute;left:35px;top:152px;width:1px;height:15px;background:#e0e0e0;"></div>
<div style="position:absolute;left:43px;top:168px;width:1px;height:508px;background:#d0d0d0;"></div>
<div style="position:absolute;left:43px;top:152px;width:1px;height:15px;background:#e0e0e0;"></div>
<div style="position:absolute;left:338px;top:168px;width:1px;height:508px;background:#d0d0d0;"></div>
<div style="position:absolute;left:338px;top:152px;width:1px;height:15px;background:#e0e0e0;"></div>
<div style="position:absolute;left:380px;top:168px;width:1px;height:508px;background:#d0d0d0;"></div>
<div style="position:absolute;left:380px;top:152px;width:1px;height:15px;background:#e0e0e0;"></div>
<div style="position:absolute;left:422px;top:168px;width:1px;height:508px;background:#d0d0d0;"></div>
<div style="position:absolute;left:422px;top:152px;width:1px;height:15px;background:#e0e0e0;"></div>
<div style="position:absolute;left:485px;top:168px;width:1px;height:508px;background:#d0d0d0;"></div>
<div style="position:absolute;left:485px;top:152px;width:1px;height:15px;background:#e0e0e0;"></div>
<div style="position:absolute;left:547px;top:168px;width:1px;height:508px;background:#d0d0d0;"></div>
<div style="position:absolute;left:547px;top:152px;width:1px;height:15px;background:#e0e0e0;"></div>
<div style="position:absolute;left:609px;top:168px;width:1px;height:508px;background:#d0d0d0;"></div>
<div style="position:absolute;left:609px;top:152px;width:1px;height:15px;background:#e0e0e0;"></div>
<div style="position:absolute;left:671px;top:168px;width:1px;height:508px;background:#d0d0d0;"></div>
<div style="position:absolute;left:671px;top:152px;width:1px;height:15px;background:#e0e0e0;"></div>
<div style="position:absolute;left:733px;top:168px;width:1px;height:508px;background:#d0d0d0;"></div>
<div style="position:absolute;left:733px;top:152px;width:1px;height:15px;background:#e0e0e0;"></div>
<div style="position:absolute;left:795px;top:168px;width:1px;height:508px;background:#d0d0d0;"></div>
<div style="position:absolute;left:795px;top:152px;width:1px;height:15px;background:#e0e0e0;"></div>
<div style="position:absolute;left:857px;top:168px;width:1px;height:508px;background:#d0d0d0;"></div>
<div style="position:absolute;left:857px;top:152px;width:1px;height:15px;background:#e0e0e0;"></div>
<div style="position:absolute;left:919px;top:168px;width:1px;height:508px;background:#d0d0d0;"></div>
<div style="position:absolute;left:919px;top:152px;width:1px;height:15px;background:#e0e0e0;"></div>
<div style="position:absolute;left:981px;top:168px;width:1px;height:508px;background:#d0d0d0;"></div>
<div style="position:absolute;left:981px;top:152px;width:1px;height:15px;background:#e0e0e0;"></div>
<div style="position:absolute;left:1043px;top:168px;width:1px;height:508px;background:#d0d0d0;"></div>
<div style="position:absolute;left:1043px;top:152px;width:1px;height:15px;background:#e0e0e0;"></div>
<div style="position:absolute;left:1105px;top:168px;width:1px;height:508px;background:#d0d0d0;"></div>
<div style="position:absolute;left:1105px;top:152px;width:1px;height:15px;background:#e0e0e0;"></div>
<div style="position:absolute;left:1167px;top:168px;width:1px;height:508px;background:#d0d0d0;"></div>
<div style="position:absolute;left:1167px;top:152px;width:1px;height:15px;background:#e0e0e0;"></div>
<div style="position:absolute;left:1229px;top:168px;width:1px;height:508px;background:#d0d0d0;"></div>
<div style="position:absolute;left:1229px;top:152px;width:1px;height:15px;background:#e0e0e0;"></div>
<div style="position:absolute;left:422px;top:150px;width:1px;height:526px;background:#a3a3a3;"></div>
<div style="position:absolute;left:423px;top:166px;width:62px;height:2px;background:#217346;"></div>
<svg style="position:absolute;left:5px;top:153px" width="13" height="13"><path d="M12 1 L12 12 L1 12 Z" fill="#dcdcdc"/></svg>
<div style="position:absolute;left:21px;top:154.89px;font-size:8.4px;line-height:1;white-space:pre;color:#444;font-weight:normal;letter-spacing:-0.2px;">A</div>
<div style="position:absolute;left:29px;top:154.89px;font-size:8.4px;line-height:1;white-space:pre;color:#444;font-weight:normal;letter-spacing:-0.2px;">B</div>
<div style="position:absolute;left:37px;top:154.89px;font-size:8.4px;line-height:1;white-space:pre;color:#444;font-weight:normal;letter-spacing:-0.2px;">C</div>
<div style="position:absolute;left:-9.0px;width:400px;top:154.89px;font-size:8.4px;line-height:1;white-space:pre;color:#444;font-weight:normal;text-align:center;">D</div>
<div style="position:absolute;left:159.5px;width:400px;top:154.89px;font-size:8.4px;line-height:1;white-space:pre;color:#444;font-weight:normal;text-align:center;">E</div>
<div style="position:absolute;left:201.5px;width:400px;top:154.89px;font-size:8.4px;line-height:1;white-space:pre;color:#444;font-weight:normal;text-align:center;">F</div>
<div style="position:absolute;left:254.0px;width:400px;top:154.55px;font-size:8.8px;line-height:1;white-space:pre;color:#1e6e42;font-weight:bold;text-align:center;">G</div>
<div style="position:absolute;left:316.5px;width:400px;top:154.89px;font-size:8.4px;line-height:1;white-space:pre;color:#444;font-weight:normal;text-align:center;">H</div>
<div style="position:absolute;left:378.5px;width:400px;top:154.89px;font-size:8.4px;line-height:1;white-space:pre;color:#444;font-weight:normal;text-align:center;">I</div>
<div style="position:absolute;left:440.5px;width:400px;top:154.89px;font-size:8.4px;line-height:1;white-space:pre;color:#444;font-weight:normal;text-align:center;">J</div>
<div style="position:absolute;left:502.5px;width:400px;top:154.89px;font-size:8.4px;line-height:1;white-space:pre;color:#444;font-weight:normal;text-align:center;">K</div>
<div style="position:absolute;left:564.5px;width:400px;top:154.89px;font-size:8.4px;line-height:1;white-space:pre;color:#444;font-weight:normal;text-align:center;">L</div>
<div style="position:absolute;left:626.5px;width:400px;top:154.89px;font-size:8.4px;line-height:1;white-space:pre;color:#444;font-weight:normal;text-align:center;">M</div>
<div style="position:absolute;left:688.5px;width:400px;top:154.89px;font-size:8.4px;line-height:1;white-space:pre;color:#444;font-weight:normal;text-align:center;">N</div>
<div style="position:absolute;left:750.5px;width:400px;top:154.89px;font-size:8.4px;line-height:1;white-space:pre;color:#444;font-weight:normal;text-align:center;">O</div>
<div style="position:absolute;left:812.5px;width:400px;top:154.89px;font-size:8.4px;line-height:1;white-space:pre;color:#444;font-weight:normal;text-align:center;">P</div>
<div style="position:absolute;left:874.5px;width:400px;top:154.89px;font-size:8.4px;line-height:1;white-space:pre;color:#444;font-weight:normal;text-align:center;">Q</div>
<div style="position:absolute;left:936.5px;width:400px;top:154.89px;font-size:8.4px;line-height:1;white-space:pre;color:#444;font-weight:normal;text-align:center;">R</div>
<div style="position:absolute;left:998.5px;width:400px;top:154.89px;font-size:8.4px;line-height:1;white-space:pre;color:#444;font-weight:normal;text-align:center;">S</div>
<div style="position:absolute;left:1060.5px;width:400px;top:154.89px;font-size:8.4px;line-height:1;white-space:pre;color:#444;font-weight:normal;text-align:center;">T</div>
<div style="position:absolute;left:-191px;width:400px;top:169.69px;font-size:8.4px;line-height:1;white-space:pre;color:#555;font-weight:normal;text-align:center;letter-spacing:-0.2px;-webkit-text-stroke:0.05px #555;">1</div>
<div style="position:absolute;left:-191px;width:400px;top:181.69px;font-size:8.4px;line-height:1;white-space:pre;color:#555;font-weight:normal;text-align:center;letter-spacing:-0.2px;-webkit-text-stroke:0.05px #555;">2</div>
<div style="position:absolute;left:-191px;width:400px;top:191.69px;font-size:8.4px;line-height:1;white-space:pre;color:#555;font-weight:normal;text-align:center;letter-spacing:-0.2px;-webkit-text-stroke:0.05px #555;">395</div>
<div style="position:absolute;left:-191px;width:400px;top:203.69px;font-size:8.4px;line-height:1;white-space:pre;color:#555;font-weight:normal;text-align:center;letter-spacing:-0.2px;-webkit-text-stroke:0.05px #555;">396</div>
<div style="position:absolute;left:-191px;width:400px;top:215.69px;font-size:8.4px;line-height:1;white-space:pre;color:#555;font-weight:normal;text-align:center;letter-spacing:-0.2px;-webkit-text-stroke:0.05px #555;">397</div>
<div style="position:absolute;left:-191px;width:400px;top:227.69px;font-size:8.4px;line-height:1;white-space:pre;color:#555;font-weight:normal;text-align:center;letter-spacing:-0.2px;-webkit-text-stroke:0.05px #555;">398</div>
<div style="position:absolute;left:-191px;width:400px;top:239.69px;font-size:8.4px;line-height:1;white-space:pre;color:#555;font-weight:normal;text-align:center;letter-spacing:-0.2px;-webkit-text-stroke:0.05px #555;">399</div>
<div style="position:absolute;left:-191px;width:400px;top:251.69px;font-size:8.4px;line-height:1;white-space:pre;color:#555;font-weight:normal;text-align:center;letter-spacing:-0.2px;-webkit-text-stroke:0.05px #555;">400</div>
<div style="position:absolute;left:-191px;width:400px;top:263.69px;font-size:8.4px;line-height:1;white-space:pre;color:#555;font-weight:normal;text-align:center;letter-spacing:-0.2px;-webkit-text-stroke:0.05px #555;">401</div>
<div style="position:absolute;left:-191px;width:400px;top:275.69px;font-size:8.4px;line-height:1;white-space:pre;color:#555;font-weight:normal;text-align:center;letter-spacing:-0.2px;-webkit-text-stroke:0.05px #555;">402</div>
<div style="position:absolute;left:-191px;width:400px;top:287.69px;font-size:8.4px;line-height:1;white-space:pre;color:#555;font-weight:normal;text-align:center;letter-spacing:-0.2px;-webkit-text-stroke:0.05px #555;">403</div>
<div style="position:absolute;left:-191px;width:400px;top:299.69px;font-size:8.4px;line-height:1;white-space:pre;color:#555;font-weight:normal;text-align:center;letter-spacing:-0.2px;-webkit-text-stroke:0.05px #555;">404</div>
<div style="position:absolute;left:-191px;width:400px;top:311.69px;font-size:8.4px;line-height:1;white-space:pre;color:#555;font-weight:normal;text-align:center;letter-spacing:-0.2px;-webkit-text-stroke:0.05px #555;">405</div>
<div style="position:absolute;left:-191px;width:400px;top:324.69px;font-size:8.4px;line-height:1;white-space:pre;color:#555;font-weight:normal;text-align:center;letter-spacing:-0.2px;-webkit-text-stroke:0.05px #555;">406</div>
<div style="position:absolute;left:-191px;width:400px;top:336.69px;font-size:8.4px;line-height:1;white-space:pre;color:#555;font-weight:normal;text-align:center;letter-spacing:-0.2px;-webkit-text-stroke:0.05px #555;">407</div>
<div style="position:absolute;left:-191px;width:400px;top:348.69px;font-size:8.4px;line-height:1;white-space:pre;color:#555;font-weight:normal;text-align:center;letter-spacing:-0.2px;-webkit-text-stroke:0.05px #555;">408</div>
<div style="position:absolute;left:-191px;width:400px;top:360.69px;font-size:8.4px;line-height:1;white-space:pre;color:#555;font-weight:normal;text-align:center;letter-spacing:-0.2px;-webkit-text-stroke:0.05px #555;">409</div>
<div style="position:absolute;left:-191px;width:400px;top:372.69px;font-size:8.4px;line-height:1;white-space:pre;color:#555;font-weight:normal;text-align:center;letter-spacing:-0.2px;-webkit-text-stroke:0.05px #555;">410</div>
<div style="position:absolute;left:-191px;width:400px;top:384.69px;font-size:8.4px;line-height:1;white-space:pre;color:#555;font-weight:normal;text-align:center;letter-spacing:-0.2px;-webkit-text-stroke:0.05px #555;">411</div>
<div style="position:absolute;left:-191px;width:400px;top:397.69px;font-size:8.4px;line-height:1;white-space:pre;color:#555;font-weight:normal;text-align:center;letter-spacing:-0.2px;-webkit-text-stroke:0.05px #555;">412</div>
<div style="position:absolute;left:-191px;width:400px;top:409.69px;font-size:8.4px;line-height:1;white-space:pre;color:#555;font-weight:normal;text-align:center;letter-spacing:-0.2px;-webkit-text-stroke:0.05px #555;">413</div>
<div style="position:absolute;left:-191px;width:400px;top:421.69px;font-size:8.4px;line-height:1;white-space:pre;color:#555;font-weight:normal;text-align:center;letter-spacing:-0.2px;-webkit-text-stroke:0.05px #555;">414</div>
<div style="position:absolute;left:-191px;width:400px;top:433.69px;font-size:8.4px;line-height:1;white-space:pre;color:#555;font-weight:normal;text-align:center;letter-spacing:-0.2px;-webkit-text-stroke:0.05px #555;">415</div>
<div style="position:absolute;left:-191px;width:400px;top:445.69px;font-size:8.4px;line-height:1;white-space:pre;color:#555;font-weight:normal;text-align:center;letter-spacing:-0.2px;-webkit-text-stroke:0.05px #555;">416</div>
<div style="position:absolute;left:-191px;width:400px;top:457.69px;font-size:8.4px;line-height:1;white-space:pre;color:#555;font-weight:normal;text-align:center;letter-spacing:-0.2px;-webkit-text-stroke:0.05px #555;">417</div>
<div style="position:absolute;left:-191px;width:400px;top:469.69px;font-size:8.4px;line-height:1;white-space:pre;color:#555;font-weight:normal;text-align:center;letter-spacing:-0.2px;-webkit-text-stroke:0.05px #555;">418</div>
<div style="position:absolute;left:-191px;width:400px;top:481.69px;font-size:8.4px;line-height:1;white-space:pre;color:#555;font-weight:normal;text-align:center;letter-spacing:-0.2px;-webkit-text-stroke:0.05px #555;">419</div>
<div style="position:absolute;left:-191px;width:400px;top:493.69px;font-size:8.4px;line-height:1;white-space:pre;color:#555;font-weight:normal;text-align:center;letter-spacing:-0.2px;-webkit-text-stroke:0.05px #555;">420</div>
<div style="position:absolute;left:-191px;width:400px;top:505.69px;font-size:8.4px;line-height:1;white-space:pre;color:#555;font-weight:normal;text-align:center;letter-spacing:-0.2px;-webkit-text-stroke:0.05px #555;">421</div>
<div style="position:absolute;left:-191px;width:400px;top:518.69px;font-size:8.4px;line-height:1;white-space:pre;color:#555;font-weight:normal;text-align:center;letter-spacing:-0.2px;-webkit-text-stroke:0.05px #555;">422</div>
<div style="position:absolute;left:-191px;width:400px;top:530.69px;font-size:8.4px;line-height:1;white-space:pre;color:#555;font-weight:normal;text-align:center;letter-spacing:-0.2px;-webkit-text-stroke:0.05px #555;">423</div>
<div style="position:absolute;left:-191px;width:400px;top:542.69px;font-size:8.4px;line-height:1;white-space:pre;color:#555;font-weight:normal;text-align:center;letter-spacing:-0.2px;-webkit-text-stroke:0.05px #555;">424</div>
<div style="position:absolute;left:-191px;width:400px;top:554.69px;font-size:8.4px;line-height:1;white-space:pre;color:#555;font-weight:normal;text-align:center;letter-spacing:-0.2px;-webkit-text-stroke:0.05px #555;">425</div>
<div style="position:absolute;left:-191px;width:400px;top:566.69px;font-size:8.4px;line-height:1;white-space:pre;color:#555;font-weight:normal;text-align:center;letter-spacing:-0.2px;-webkit-text-stroke:0.05px #555;">426</div>
<div style="position:absolute;left:-191px;width:400px;top:578.69px;font-size:8.4px;line-height:1;white-space:pre;color:#555;font-weight:normal;text-align:center;letter-spacing:-0.2px;-webkit-text-stroke:0.05px #555;">427</div>
<div style="position:absolute;left:-191px;width:400px;top:590.69px;font-size:8.4px;line-height:1;white-space:pre;color:#555;font-weight:normal;text-align:center;letter-spacing:-0.2px;-webkit-text-stroke:0.05px #555;">428</div>
<div style="position:absolute;left:-191px;width:400px;top:602.69px;font-size:8.4px;line-height:1;white-space:pre;color:#555;font-weight:normal;text-align:center;letter-spacing:-0.2px;-webkit-text-stroke:0.05px #555;">429</div>
<div style="position:absolute;left:-191px;width:400px;top:614.69px;font-size:8.4px;line-height:1;white-space:pre;color:#555;font-weight:normal;text-align:center;letter-spacing:-0.2px;-webkit-text-stroke:0.05px #555;">430</div>
<div style="position:absolute;left:-191px;width:400px;top:626.69px;font-size:8.4px;line-height:1;white-space:pre;color:#555;font-weight:normal;text-align:center;letter-spacing:-0.2px;-webkit-text-stroke:0.05px #555;">431</div>
<div style="position:absolute;left:-191px;width:400px;top:638.69px;font-size:8.4px;line-height:1;white-space:pre;color:#555;font-weight:normal;text-align:center;letter-spacing:-0.2px;-webkit-text-stroke:0.05px #555;">432</div>
<div style="position:absolute;left:-191px;width:400px;top:650.69px;font-size:8.4px;line-height:1;white-space:pre;color:#555;font-weight:normal;text-align:center;letter-spacing:-0.2px;-webkit-text-stroke:0.05px #555;">433</div>
<div style="position:absolute;left:-191px;width:400px;top:662.69px;font-size:8.4px;line-height:1;white-space:pre;color:#555;font-weight:normal;text-align:center;letter-spacing:-0.2px;-webkit-text-stroke:0.05px #555;">434</div>
<div style="position:absolute;left:20px;top:192px;width:361px;height:10px;background:#3e58ec;"></div>
<div style="position:absolute;left:20px;top:201px;width:361px;height:1px;background:#3a4fd0;"></div>
<div style="position:absolute;left:21.5px;top:191.69px;font-size:8.4px;line-height:1;white-space:pre;color:#fff;font-weight:bold;letter-spacing:-0.2px;-webkit-text-stroke:0.05px #fff;">Balance Sheet</div>
<div style="position:absolute;left:20px;top:540px;width:361px;height:13px;background:#3e58ec;"></div>
<div style="position:absolute;left:20px;top:552px;width:361px;height:1px;background:#3a4fd0;"></div>
<div style="position:absolute;left:20px;top:540px;width:361px;height:1px;background:#3a4fd0;"></div>
<div style="position:absolute;left:21.5px;top:542.69px;font-size:8.4px;line-height:1;white-space:pre;color:#fff;font-weight:bold;letter-spacing:-0.2px;-webkit-text-stroke:0.05px #fff;">Financing Outputs</div>
<div style="position:absolute;left:28px;top:202px;width:310px;height:11px;background:#fff;"></div>
<div style="position:absolute;left:28.7px;top:203.69px;font-size:8.4px;line-height:1;white-space:pre;color:#000;font-weight:normal;letter-spacing:-0.2px;-webkit-text-stroke:0.05px #000;">Assets</div>
<div style="position:absolute;left:36px;top:214px;width:302px;height:11px;background:#fff;"></div>
<div style="position:absolute;left:36.7px;top:215.69px;font-size:8.4px;line-height:1;white-space:pre;color:#000;font-weight:normal;letter-spacing:-0.2px;-webkit-text-stroke:0.05px #000;">Cash Balance</div>
<div style="position:absolute;left:36px;top:226px;width:302px;height:11px;background:#fff;"></div>
<div style="position:absolute;left:36.7px;top:227.69px;font-size:8.4px;line-height:1;white-space:pre;color:#000;font-weight:normal;letter-spacing:-0.2px;-webkit-text-stroke:0.05px #000;">Accounts Receivable Balance</div>
<div style="position:absolute;left:36px;top:238px;width:302px;height:11px;background:#fff;"></div>
<div style="position:absolute;left:36.7px;top:239.69px;font-size:8.4px;line-height:1;white-space:pre;color:#000;font-weight:normal;letter-spacing:-0.2px;-webkit-text-stroke:0.05px #000;">CWIP Balance - Base Plant</div>
<div style="position:absolute;left:36px;top:250px;width:302px;height:11px;background:#fff;"></div>
<div style="position:absolute;left:36.7px;top:251.69px;font-size:8.4px;line-height:1;white-space:pre;color:#000;font-weight:normal;letter-spacing:-0.2px;-webkit-text-stroke:0.05px #000;">Balance in Service</div>
<div style="position:absolute;left:36px;top:262px;width:302px;height:11px;background:#fff;"></div>
<div style="position:absolute;left:36.7px;top:263.69px;font-size:8.4px;line-height:1;white-space:pre;color:#000;font-weight:normal;letter-spacing:-0.2px;-webkit-text-stroke:0.05px #000;">Less: Accumulated Depreciation - Base</div>
<div style="position:absolute;left:36px;top:274px;width:302px;height:11px;background:#fff;"></div>
<div style="position:absolute;left:36.7px;top:275.69px;font-size:8.4px;line-height:1;white-space:pre;color:#000;font-weight:normal;letter-spacing:-0.2px;-webkit-text-stroke:0.05px #000;">CWIP - IDC and Fees</div>
<div style="position:absolute;left:36px;top:286px;width:302px;height:11px;background:#fff;"></div>
<div style="position:absolute;left:36.7px;top:287.69px;font-size:8.4px;line-height:1;white-space:pre;color:#000;font-weight:normal;letter-spacing:-0.2px;-webkit-text-stroke:0.05px #000;">Gross Assets -- IDC and Fees</div>
<div style="position:absolute;left:36px;top:298px;width:302px;height:11px;background:#fff;"></div>
<div style="position:absolute;left:36.7px;top:299.69px;font-size:8.4px;line-height:1;white-space:pre;color:#000;font-weight:normal;letter-spacing:-0.2px;-webkit-text-stroke:0.05px #000;">Less: Accumulated Depreciation - IDC and Fees</div>
<div style="position:absolute;left:44px;top:310px;width:294px;height:12px;background:#fff;"></div>
<div style="position:absolute;left:44.7px;top:311.69px;font-size:8.4px;line-height:1;white-space:pre;color:#000;font-weight:normal;letter-spacing:-0.2px;-webkit-text-stroke:0.05px #000;">Total Assets</div>
<div style="position:absolute;left:28px;top:335px;width:310px;height:11px;background:#fff;"></div>
<div style="position:absolute;left:28.7px;top:336.69px;font-size:8.4px;line-height:1;white-space:pre;color:#000;font-weight:normal;letter-spacing:-0.2px;-webkit-text-stroke:0.05px #000;">Liabilities and Capital</div>
<div style="position:absolute;left:36px;top:347px;width:302px;height:11px;background:#fff;"></div>
<div style="position:absolute;left:36.7px;top:348.69px;font-size:8.4px;line-height:1;white-space:pre;color:#000;font-weight:normal;letter-spacing:-0.2px;-webkit-text-stroke:0.05px #000;">Accounts Payable</div>
<div style="position:absolute;left:36px;top:359px;width:302px;height:11px;background:#fff;"></div>
<div style="position:absolute;left:36.7px;top:360.69px;font-size:8.4px;line-height:1;white-space:pre;color:#000;font-weight:normal;letter-spacing:-0.2px;-webkit-text-stroke:0.05px #000;">Debt Balance</div>
<div style="position:absolute;left:36px;top:371px;width:302px;height:11px;background:#fff;"></div>
<div style="position:absolute;left:36.7px;top:372.69px;font-size:8.4px;line-height:1;white-space:pre;color:#000;font-weight:normal;letter-spacing:-0.2px;-webkit-text-stroke:0.05px #000;">Equity Balance</div>
<div style="position:absolute;left:44px;top:383px;width:294px;height:12px;background:#fff;"></div>
<div style="position:absolute;left:44.7px;top:384.69px;font-size:8.4px;line-height:1;white-space:pre;color:#000;font-weight:normal;letter-spacing:-0.2px;-webkit-text-stroke:0.05px #000;">Total Liabilities and Capital</div>
<div style="position:absolute;left:44px;top:408px;width:294px;height:11px;background:#fff;"></div>
<div style="position:absolute;left:44.7px;top:409.69px;font-size:8.4px;line-height:1;white-space:pre;color:#000;font-weight:normal;letter-spacing:-0.2px;-webkit-text-stroke:0.05px #000;">Difference</div>
<div style="position:absolute;left:44px;top:420px;width:294px;height:11px;background:#fff;"></div>
<div style="position:absolute;left:44.7px;top:421.69px;font-size:8.4px;line-height:1;white-space:pre;color:#000;font-weight:normal;letter-spacing:-0.2px;-webkit-text-stroke:0.05px #000;">Test</div>
<div style="position:absolute;left:36px;top:444px;width:302px;height:11px;background:#fff;"></div>
<div style="position:absolute;left:36.7px;top:445.69px;font-size:8.4px;line-height:1;white-space:pre;color:#000;font-weight:normal;letter-spacing:-0.2px;-webkit-text-stroke:0.05px #000;">Equity Balance</div>
<div style="position:absolute;left:44px;top:456px;width:294px;height:11px;background:#fff;"></div>
<div style="position:absolute;left:44.7px;top:457.69px;font-size:8.4px;line-height:1;white-space:pre;color:#000;font-weight:normal;letter-spacing:-0.2px;-webkit-text-stroke:0.05px #000;">Opening Balance</div>
<div style="position:absolute;left:44px;top:468px;width:294px;height:11px;background:#fff;"></div>
<div style="position:absolute;left:44.7px;top:469.69px;font-size:8.4px;line-height:1;white-space:pre;color:#000;font-weight:normal;letter-spacing:-0.2px;-webkit-text-stroke:0.05px #000;">Add: Equity Contributions</div>
<div style="position:absolute;left:44px;top:480px;width:294px;height:11px;background:#fff;"></div>
<div style="position:absolute;left:44.7px;top:481.69px;font-size:8.4px;line-height:1;white-space:pre;color:#000;font-weight:normal;letter-spacing:-0.2px;-webkit-text-stroke:0.05px #000;">Add: Income</div>
<div style="position:absolute;left:44px;top:492px;width:294px;height:11px;background:#fff;"></div>
<div style="position:absolute;left:44.7px;top:493.69px;font-size:8.4px;line-height:1;white-space:pre;color:#000;font-weight:normal;letter-spacing:-0.2px;-webkit-text-stroke:0.05px #000;">Less: Dividends</div>
<div style="position:absolute;left:44px;top:504px;width:294px;height:12px;background:#fff;"></div>
<div style="position:absolute;left:44.7px;top:505.69px;font-size:8.4px;line-height:1;white-space:pre;color:#000;font-weight:normal;letter-spacing:-0.2px;-webkit-text-stroke:0.05px #000;">Closing Balance</div>
<div style="position:absolute;left:44px;top:553px;width:294px;height:11px;background:#fff;"></div>
<div style="position:absolute;left:44.7px;top:554.69px;font-size:8.4px;line-height:1;white-space:pre;color:#000;font-weight:normal;letter-spacing:-0.2px;-webkit-text-stroke:0.05px #000;">Equity Cash Inflow</div>
<div style="position:absolute;left:44px;top:565px;width:294px;height:11px;background:#fff;"></div>
<div style="position:absolute;left:44.7px;top:566.69px;font-size:8.4px;line-height:1;white-space:pre;color:#000;font-weight:normal;letter-spacing:-0.2px;-webkit-text-stroke:0.05px #000;">Equity Cash Outflow</div>
<div style="position:absolute;left:44px;top:577px;width:294px;height:11px;background:#fff;"></div>
<div style="position:absolute;left:44.7px;top:578.69px;font-size:8.4px;line-height:1;white-space:pre;color:#000;font-weight:normal;letter-spacing:-0.2px;-webkit-text-stroke:0.05px #000;">Net Equity Cash Flow</div>
<div style="position:absolute;left:44px;top:601px;width:294px;height:11px;background:#fff;"></div>
<div style="position:absolute;left:44.7px;top:602.69px;font-size:8.4px;line-height:1;white-space:pre;color:#000;font-weight:normal;letter-spacing:-0.2px;-webkit-text-stroke:0.05px #000;">Equity IRR</div>
<div style="position:absolute;left:44px;top:625px;width:294px;height:11px;background:#fff;"></div>
<div style="position:absolute;left:44.7px;top:626.69px;font-size:8.4px;line-height:1;white-space:pre;color:#000;font-weight:normal;letter-spacing:-0.2px;-webkit-text-stroke:0.05px #000;">Debt Cash Inflow</div>
<div style="position:absolute;left:44px;top:637px;width:294px;height:11px;background:#fff;"></div>
<div style="position:absolute;left:44.7px;top:638.69px;font-size:8.4px;line-height:1;white-space:pre;color:#000;font-weight:normal;letter-spacing:-0.2px;-webkit-text-stroke:0.05px #000;">Debt Cash Outflow</div>
<div style="position:absolute;left:44px;top:649px;width:294px;height:11px;background:#fff;"></div>
<div style="position:absolute;left:44.7px;top:650.69px;font-size:8.4px;line-height:1;white-space:pre;color:#000;font-weight:normal;letter-spacing:-0.2px;-webkit-text-stroke:0.05px #000;">Net Debt Cash Flow</div>
<div style="position:absolute;left:43px;top:309px;width:338px;height:1px;background:#000;"></div>
<div style="position:absolute;left:43px;top:321px;width:338px;height:2px;background:#000;"></div>
<div style="position:absolute;left:43px;top:382px;width:338px;height:1px;background:#000;"></div>
<div style="position:absolute;left:43px;top:394px;width:338px;height:2px;background:#000;"></div>
<div style="position:absolute;left:43px;top:503px;width:338px;height:1px;background:#000;"></div>
<div style="position:absolute;left:43px;top:515px;width:338px;height:2px;background:#000;"></div>
<div style="position:absolute;left:221px;top:178px;width:55px;height:13px;background:#d9d9d9;"></div>
<div style="position:absolute;left:48.5px;width:400px;top:184.19px;font-size:8.4px;line-height:1;white-space:pre;color:#111;font-weight:normal;text-align:center;letter-spacing:-0.2px;-webkit-text-stroke:0.05px #111;">Button 1</div>
<div style="position:absolute;left:276px;top:177px;width:2px;height:14px;background:#111;"></div>
<div style="position:absolute;right:797px;top:181.89px;font-size:8.4px;line-height:1;white-space:pre;color:#000;font-weight:normal;text-align:right;letter-spacing:-0.2px;-webkit-text-stroke:0.05px #000;">2017</div>
<div style="position:absolute;right:735px;top:181.89px;font-size:8.4px;line-height:1;white-space:pre;color:#000;font-weight:normal;text-align:right;letter-spacing:-0.2px;-webkit-text-stroke:0.05px #000;">2018</div>
<div style="position:absolute;right:673px;top:181.89px;font-size:8.4px;line-height:1;white-space:pre;color:#000;font-weight:normal;text-align:right;letter-spacing:-0.2px;-webkit-text-stroke:0.05px #000;">2019</div>
<div style="position:absolute;right:611px;top:181.89px;font-size:8.4px;line-height:1;white-space:pre;color:#000;font-weight:normal;text-align:right;letter-spacing:-0.2px;-webkit-text-stroke:0.05px #000;">2020</div>
<div style="position:absolute;right:549px;top:181.89px;font-size:8.4px;line-height:1;white-space:pre;color:#000;font-weight:normal;text-align:right;letter-spacing:-0.2px;-webkit-text-stroke:0.05px #000;">2021</div>
<div style="position:absolute;right:487px;top:181.89px;font-size:8.4px;line-height:1;white-space:pre;color:#000;font-weight:normal;text-align:right;letter-spacing:-0.2px;-webkit-text-stroke:0.05px #000;">2022</div>
<div style="position:absolute;right:425px;top:181.89px;font-size:8.4px;line-height:1;white-space:pre;color:#000;font-weight:normal;text-align:right;letter-spacing:-0.2px;-webkit-text-stroke:0.05px #000;">2023</div>
<div style="position:absolute;right:363px;top:181.89px;font-size:8.4px;line-height:1;white-space:pre;color:#000;font-weight:normal;text-align:right;letter-spacing:-0.2px;-webkit-text-stroke:0.05px #000;">2024</div>
<div style="position:absolute;right:301px;top:181.89px;font-size:8.4px;line-height:1;white-space:pre;color:#000;font-weight:normal;text-align:right;letter-spacing:-0.2px;-webkit-text-stroke:0.05px #000;">2025</div>
<div style="position:absolute;right:239px;top:181.89px;font-size:8.4px;line-height:1;white-space:pre;color:#000;font-weight:normal;text-align:right;letter-spacing:-0.2px;-webkit-text-stroke:0.05px #000;">2026</div>
<div style="position:absolute;right:177px;top:181.89px;font-size:8.4px;line-height:1;white-space:pre;color:#000;font-weight:normal;text-align:right;letter-spacing:-0.2px;-webkit-text-stroke:0.05px #000;">2027</div>
<div style="position:absolute;right:115px;top:181.89px;font-size:8.4px;line-height:1;white-space:pre;color:#000;font-weight:normal;text-align:right;letter-spacing:-0.2px;-webkit-text-stroke:0.05px #000;">2028</div>
<div style="position:absolute;right:53px;top:181.89px;font-size:8.4px;line-height:1;white-space:pre;color:#000;font-weight:normal;text-align:right;letter-spacing:-0.2px;-webkit-text-stroke:0.05px #000;">2029</div>
<div style="position:absolute;right:-9px;top:181.89px;font-size:8.4px;line-height:1;white-space:pre;color:#000;font-weight:normal;text-align:right;letter-spacing:-0.2px;-webkit-text-stroke:0.05px #000;">2030</div>
<svg style="position:absolute;left:424px;top:214px" width="6" height="6"><path d="M0 0 L5.5 0 L0 5.5 Z" fill="#1a7f37"/></svg>
<div style="position:absolute;left:255.0px;width:400px;top:215.69px;font-size:8.4px;line-height:1;white-space:pre;color:#000;font-weight:normal;text-align:center;letter-spacing:-0.2px;-webkit-text-stroke:0.05px #000;">#VALUE!</div>
<div style="position:absolute;right:800px;top:227.69px;font-size:8.4px;line-height:1;white-space:pre;color:#000;font-weight:normal;text-align:right;letter-spacing:-0.2px;-webkit-text-stroke:0.05px #000;">10,220,631</div>
<div style="position:absolute;right:800px;top:239.69px;font-size:8.4px;line-height:1;white-space:pre;color:#000;font-weight:normal;text-align:right;letter-spacing:-0.2px;-webkit-text-stroke:0.05px #000;">419,290,430</div>
<div style="position:absolute;right:800px;top:251.69px;font-size:8.4px;line-height:1;white-space:pre;color:#000;font-weight:normal;text-align:right;letter-spacing:-0.2px;-webkit-text-stroke:0.05px #000;">501,829,559</div>
<div style="position:absolute;right:797px;top:263.69px;font-size:8.4px;line-height:1;white-space:pre;color:#000;font-weight:normal;text-align:right;letter-spacing:-0.2px;-webkit-text-stroke:0.05px #000;">(9,074,332)</div>
<svg style="position:absolute;left:424px;top:274px" width="6" height="6"><path d="M0 0 L5.5 0 L0 5.5 Z" fill="#1a7f37"/></svg>
<div style="position:absolute;left:255.0px;width:400px;top:275.69px;font-size:8.4px;line-height:1;white-space:pre;color:#000;font-weight:normal;text-align:center;letter-spacing:-0.2px;-webkit-text-stroke:0.05px #000;">#VALUE!</div>
<svg style="position:absolute;left:424px;top:286px" width="6" height="6"><path d="M0 0 L5.5 0 L0 5.5 Z" fill="#1a7f37"/></svg>
<div style="position:absolute;left:255.0px;width:400px;top:287.69px;font-size:8.4px;line-height:1;white-space:pre;color:#000;font-weight:normal;text-align:center;letter-spacing:-0.2px;-webkit-text-stroke:0.05px #000;">#VALUE!</div>
<svg style="position:absolute;left:424px;top:298px" width="6" height="6"><path d="M0 0 L5.5 0 L0 5.5 Z" fill="#1a7f37"/></svg>
<div style="position:absolute;left:255.0px;width:400px;top:299.69px;font-size:8.4px;line-height:1;white-space:pre;color:#000;font-weight:normal;text-align:center;letter-spacing:-0.2px;-webkit-text-stroke:0.05px #000;">#VALUE!</div>
<svg style="position:absolute;left:424px;top:310px" width="6" height="6"><path d="M0 0 L5.5 0 L0 5.5 Z" fill="#1a7f37"/></svg>
<div style="position:absolute;left:255.0px;width:400px;top:311.69px;font-size:8.4px;line-height:1;white-space:pre;color:#000;font-weight:normal;text-align:center;letter-spacing:-0.2px;-webkit-text-stroke:0.05px #000;">#VALUE!</div>
<svg style="position:absolute;left:424px;top:347px" width="6" height="6"><path d="M0 0 L5.5 0 L0 5.5 Z" fill="#1a7f37"/></svg>
<div style="position:absolute;left:255.0px;width:400px;top:348.69px;font-size:8.4px;line-height:1;white-space:pre;color:#000;font-weight:normal;text-align:center;letter-spacing:-0.2px;-webkit-text-stroke:0.05px #000;">#VALUE!</div>
<svg style="position:absolute;left:424px;top:359px" width="6" height="6"><path d="M0 0 L5.5 0 L0 5.5 Z" fill="#1a7f37"/></svg>
<div style="position:absolute;left:255.0px;width:400px;top:360.69px;font-size:8.4px;line-height:1;white-space:pre;color:#000;font-weight:normal;text-align:center;letter-spacing:-0.2px;-webkit-text-stroke:0.05px #000;">#VALUE!</div>
<svg style="position:absolute;left:424px;top:371px" width="6" height="6"><path d="M0 0 L5.5 0 L0 5.5 Z" fill="#1a7f37"/></svg>
<div style="position:absolute;left:255.0px;width:400px;top:372.69px;font-size:8.4px;line-height:1;white-space:pre;color:#000;font-weight:normal;text-align:center;letter-spacing:-0.2px;-webkit-text-stroke:0.05px #000;">#VALUE!</div>
<svg style="position:absolute;left:424px;top:383px" width="6" height="6"><path d="M0 0 L5.5 0 L0 5.5 Z" fill="#1a7f37"/></svg>
<div style="position:absolute;left:255.0px;width:400px;top:384.69px;font-size:8.4px;line-height:1;white-space:pre;color:#000;font-weight:normal;text-align:center;letter-spacing:-0.2px;-webkit-text-stroke:0.05px #000;">#VALUE!</div>
<svg style="position:absolute;left:424px;top:408px" width="6" height="6"><path d="M0 0 L5.5 0 L0 5.5 Z" fill="#1a7f37"/></svg>
<div style="position:absolute;left:255.0px;width:400px;top:409.69px;font-size:8.4px;line-height:1;white-space:pre;color:#000;font-weight:normal;text-align:center;letter-spacing:-0.2px;-webkit-text-stroke:0.05px #000;">#VALUE!</div>
<svg style="position:absolute;left:424px;top:456px" width="6" height="6"><path d="M0 0 L5.5 0 L0 5.5 Z" fill="#1a7f37"/></svg>
<div style="position:absolute;left:255.0px;width:400px;top:457.69px;font-size:8.4px;line-height:1;white-space:pre;color:#000;font-weight:normal;text-align:center;letter-spacing:-0.2px;-webkit-text-stroke:0.05px #000;">#VALUE!</div>
<svg style="position:absolute;left:424px;top:468px" width="6" height="6"><path d="M0 0 L5.5 0 L0 5.5 Z" fill="#1a7f37"/></svg>
<div style="position:absolute;left:255.0px;width:400px;top:469.69px;font-size:8.4px;line-height:1;white-space:pre;color:#000;font-weight:normal;text-align:center;letter-spacing:-0.2px;-webkit-text-stroke:0.05px #000;">#VALUE!</div>
<svg style="position:absolute;left:424px;top:480px" width="6" height="6"><path d="M0 0 L5.5 0 L0 5.5 Z" fill="#1a7f37"/></svg>
<div style="position:absolute;left:255.0px;width:400px;top:481.69px;font-size:8.4px;line-height:1;white-space:pre;color:#000;font-weight:normal;text-align:center;letter-spacing:-0.2px;-webkit-text-stroke:0.05px #000;">#VALUE!</div>
<svg style="position:absolute;left:424px;top:492px" width="6" height="6"><path d="M0 0 L5.5 0 L0 5.5 Z" fill="#1a7f37"/></svg>
<div style="position:absolute;left:255.0px;width:400px;top:493.69px;font-size:8.4px;line-height:1;white-space:pre;color:#000;font-weight:normal;text-align:center;letter-spacing:-0.2px;-webkit-text-stroke:0.05px #000;">#VALUE!</div>
<svg style="position:absolute;left:424px;top:504px" width="6" height="6"><path d="M0 0 L5.5 0 L0 5.5 Z" fill="#1a7f37"/></svg>
<div style="position:absolute;left:255.0px;width:400px;top:505.69px;font-size:8.4px;line-height:1;white-space:pre;color:#000;font-weight:normal;text-align:center;letter-spacing:-0.2px;-webkit-text-stroke:0.05px #000;">#VALUE!</div>
<div style="position:absolute;right:809px;top:518.69px;font-size:8.4px;line-height:1;white-space:pre;color:#000;font-weight:normal;text-align:right;letter-spacing:-0.2px;-webkit-text-stroke:0.05px #000;">-</div>
<div style="position:absolute;right:809px;top:530.69px;font-size:8.4px;line-height:1;white-space:pre;color:#000;font-weight:normal;text-align:right;letter-spacing:-0.2px;-webkit-text-stroke:0.05px #000;">-</div>
<div style="position:absolute;right:809px;top:542.69px;font-size:8.4px;line-height:1;white-space:pre;color:#000;font-weight:normal;text-align:right;letter-spacing:-0.2px;-webkit-text-stroke:0.05px #000;">-</div>
<svg style="position:absolute;left:424px;top:553px" width="6" height="6"><path d="M0 0 L5.5 0 L0 5.5 Z" fill="#1a7f37"/></svg>
<div style="position:absolute;left:255.0px;width:400px;top:554.69px;font-size:8.4px;line-height:1;white-space:pre;color:#000;font-weight:normal;text-align:center;letter-spacing:-0.2px;-webkit-text-stroke:0.05px #000;">#VALUE!</div>
<svg style="position:absolute;left:424px;top:565px" width="6" height="6"><path d="M0 0 L5.5 0 L0 5.5 Z" fill="#1a7f37"/></svg>
<div style="position:absolute;left:255.0px;width:400px;top:566.69px;font-size:8.4px;line-height:1;white-space:pre;color:#000;font-weight:normal;text-align:center;letter-spacing:-0.2px;-webkit-text-stroke:0.05px #000;">#VALUE!</div>
<svg style="position:absolute;left:424px;top:577px" width="6" height="6"><path d="M0 0 L5.5 0 L0 5.5 Z" fill="#1a7f37"/></svg>
<div style="position:absolute;left:255.0px;width:400px;top:578.69px;font-size:8.4px;line-height:1;white-space:pre;color:#000;font-weight:normal;text-align:center;letter-spacing:-0.2px;-webkit-text-stroke:0.05px #000;">#VALUE!</div>
<div style="position:absolute;right:809px;top:590.69px;font-size:8.4px;line-height:1;white-space:pre;color:#000;font-weight:normal;text-align:right;letter-spacing:-0.2px;-webkit-text-stroke:0.05px #000;">-</div>
<div style="position:absolute;right:809px;top:602.69px;font-size:8.4px;line-height:1;white-space:pre;color:#000;font-weight:normal;text-align:right;letter-spacing:-0.2px;-webkit-text-stroke:0.05px #000;">-</div>
<div style="position:absolute;right:809px;top:614.69px;font-size:8.4px;line-height:1;white-space:pre;color:#000;font-weight:normal;text-align:right;letter-spacing:-0.2px;-webkit-text-stroke:0.05px #000;">-</div>
<svg style="position:absolute;left:424px;top:625px" width="6" height="6"><path d="M0 0 L5.5 0 L0 5.5 Z" fill="#1a7f37"/></svg>
<div style="position:absolute;left:255.0px;width:400px;top:626.69px;font-size:8.4px;line-height:1;white-space:pre;color:#000;font-weight:normal;text-align:center;letter-spacing:-0.2px;-webkit-text-stroke:0.05px #000;">#VALUE!</div>
<svg style="position:absolute;left:424px;top:637px" width="6" height="6"><path d="M0 0 L5.5 0 L0 5.5 Z" fill="#1a7f37"/></svg>
<div style="position:absolute;left:255.0px;width:400px;top:638.69px;font-size:8.4px;line-height:1;white-space:pre;color:#000;font-weight:normal;text-align:center;letter-spacing:-0.2px;-webkit-text-stroke:0.05px #000;">#VALUE!</div>
<svg style="position:absolute;left:424px;top:649px" width="6" height="6"><path d="M0 0 L5.5 0 L0 5.5 Z" fill="#1a7f37"/></svg>
<div style="position:absolute;left:255.0px;width:400px;top:650.69px;font-size:8.4px;line-height:1;white-space:pre;color:#000;font-weight:normal;text-align:center;letter-spacing:-0.2px;-webkit-text-stroke:0.05px #000;">#VALUE!</div>
<div style="position:absolute;right:809px;top:662.69px;font-size:8.4px;line-height:1;white-space:pre;color:#000;font-weight:normal;text-align:right;letter-spacing:-0.2px;-webkit-text-stroke:0.05px #000;">-</div>
<svg style="position:absolute;left:486px;top:214px" width="6" height="6"><path d="M0 0 L5.5 0 L0 5.5 Z" fill="#1a7f37"/></svg>
<div style="position:absolute;left:317.5px;width:400px;top:215.69px;font-size:8.4px;line-height:1;white-space:pre;color:#000;font-weight:normal;text-align:center;letter-spacing:-0.2px;-webkit-text-stroke:0.05px #000;">#VALUE!</div>
<div style="position:absolute;right:738px;top:227.69px;font-size:8.4px;line-height:1;white-space:pre;color:#000;font-weight:normal;text-align:right;letter-spacing:-0.2px;-webkit-text-stroke:0.05px #000;">44,259,032</div>
<div style="position:absolute;right:747px;top:239.69px;font-size:8.4px;line-height:1;white-space:pre;color:#000;font-weight:normal;text-align:right;letter-spacing:-0.2px;-webkit-text-stroke:0.05px #000;">-</div>
<div style="position:absolute;right:738px;top:251.69px;font-size:8.4px;line-height:1;white-space:pre;color:#000;font-weight:normal;text-align:right;letter-spacing:-0.2px;-webkit-text-stroke:0.05px #000;">1,462,265,911</div>
<div style="position:absolute;right:735px;top:263.69px;font-size:8.4px;line-height:1;white-space:pre;color:#000;font-weight:normal;text-align:right;letter-spacing:-0.2px;-webkit-text-stroke:0.05px #000;">(78,135,651)</div>
<svg style="position:absolute;left:486px;top:274px" width="6" height="6"><path d="M0 0 L5.5 0 L0 5.5 Z" fill="#1a7f37"/></svg>
<div style="position:absolute;left:317.5px;width:400px;top:275.69px;font-size:8.4px;line-height:1;white-space:pre;color:#000;font-weight:normal;text-align:center;letter-spacing:-0.2px;-webkit-text-stroke:0.05px #000;">#VALUE!</div>
<svg style="position:absolute;left:486px;top:286px" width="6" height="6"><path d="M0 0 L5.5 0 L0 5.5 Z" fill="#1a7f37"/></svg>
<div style="position:absolute;left:317.5px;width:400px;top:287.69px;font-size:8.4px;line-height:1;white-space:pre;color:#000;font-weight:normal;text-align:center;letter-spacing:-0.2px;-webkit-text-stroke:0.05px #000;">#VALUE!</div>
<svg style="position:absolute;left:486px;top:298px" width="6" height="6"><path d="M0 0 L5.5 0 L0 5.5 Z" fill="#1a7f37"/></svg>
<div style="position:absolute;left:317.5px;width:400px;top:299.69px;font-size:8.4px;line-height:1;white-space:pre;color:#000;font-weight:normal;text-align:center;letter-spacing:-0.2px;-webkit-text-stroke:0.05px #000;">#VALUE!</div>
<svg style="position:absolute;left:486px;top:310px" width="6" height="6"><path d="M0 0 L5.5 0 L0 5.5 Z" fill="#1a7f37"/></svg>
<div style="position:absolute;left:317.5px;width:400px;top:311.69px;font-size:8.4px;line-height:1;white-space:pre;color:#000;font-weight:normal;text-align:center;letter-spacing:-0.2px;-webkit-text-stroke:0.05px #000;">#VALUE!</div>
<svg style="position:absolute;left:486px;top:347px" width="6" height="6"><path d="M0 0 L5.5 0 L0 5.5 Z" fill="#1a7f37"/></svg>
<div style="position:absolute;left:317.5px;width:400px;top:348.69px;font-size:8.4px;line-height:1;white-space:pre;color:#000;font-weight:normal;text-align:center;letter-spacing:-0.2px;-webkit-text-stroke:0.05px #000;">#VALUE!</div>
<svg style="position:absolute;left:486px;top:359px" width="6" height="6"><path d="M0 0 L5.5 0 L0 5.5 Z" fill="#1a7f37"/></svg>
<div style="position:absolute;left:317.5px;width:400px;top:360.69px;font-size:8.4px;line-height:1;white-space:pre;color:#000;font-weight:normal;text-align:center;letter-spacing:-0.2px;-webkit-text-stroke:0.05px #000;">#VALUE!</div>
<svg style="position:absolute;left:486px;top:371px" width="6" height="6"><path d="M0 0 L5.5 0 L0 5.5 Z" fill="#1a7f37"/></svg>
<div style="position:absolute;left:317.5px;width:400px;top:372.69px;font-size:8.4px;line-height:1;white-space:pre;color:#000;font-weight:normal;text-align:center;letter-spacing:-0.2px;-webkit-text-stroke:0.05px #000;">#VALUE!</div>
<svg style="position:absolute;left:486px;top:383px" width="6" height="6"><path d="M0 0 L5.5 0 L0 5.5 Z" fill="#1a7f37"/></svg>
<div style="position:absolute;left:317.5px;width:400px;top:384.69px;font-size:8.4px;line-height:1;white-space:pre;color:#000;font-weight:normal;text-align:center;letter-spacing:-0.2px;-webkit-text-stroke:0.05px #000;">#VALUE!</div>
<svg style="position:absolute;left:486px;top:408px" width="6" height="6"><path d="M0 0 L5.5 0 L0 5.5 Z" fill="#1a7f37"/></svg>
<div style="position:absolute;left:317.5px;width:400px;top:409.69px;font-size:8.4px;line-height:1;white-space:pre;color:#000;font-weight:normal;text-align:center;letter-spacing:-0.2px;-webkit-text-stroke:0.05px #000;">#VALUE!</div>
<svg style="position:absolute;left:486px;top:456px" width="6" height="6"><path d="M0 0 L5.5 0 L0 5.5 Z" fill="#1a7f37"/></svg>
<div style="position:absolute;left:317.5px;width:400px;top:457.69px;font-size:8.4px;line-height:1;white-space:pre;color:#000;font-weight:normal;text-align:center;letter-spacing:-0.2px;-webkit-text-stroke:0.05px #000;">#VALUE!</div>
<svg style="position:absolute;left:486px;top:468px" width="6" height="6"><path d="M0 0 L5.5 0 L0 5.5 Z" fill="#1a7f37"/></svg>
<div style="position:absolute;left:317.5px;width:400px;top:469.69px;font-size:8.4px;line-height:1;white-space:pre;color:#000;font-weight:normal;text-align:center;letter-spacing:-0.2px;-webkit-text-stroke:0.05px #000;">#VALUE!</div>
<svg style="position:absolute;left:486px;top:480px" width="6" height="6"><path d="M0 0 L5.5 0 L0 5.5 Z" fill="#1a7f37"/></svg>
<div style="position:absolute;left:317.5px;width:400px;top:481.69px;font-size:8.4px;line-height:1;white-space:pre;color:#000;font-weight:normal;text-align:center;letter-spacing:-0.2px;-webkit-text-stroke:0.05px #000;">#VALUE!</div>
<svg style="position:absolute;left:486px;top:492px" width="6" height="6"><path d="M0 0 L5.5 0 L0 5.5 Z" fill="#1a7f37"/></svg>
<div style="position:absolute;left:317.5px;width:400px;top:493.69px;font-size:8.4px;line-height:1;white-space:pre;color:#000;font-weight:normal;text-align:center;letter-spacing:-0.2px;-webkit-text-stroke:0.05px #000;">#VALUE!</div>
<svg style="position:absolute;left:486px;top:504px" width="6" height="6"><path d="M0 0 L5.5 0 L0 5.5 Z" fill="#1a7f37"/></svg>
<div style="position:absolute;left:317.5px;width:400px;top:505.69px;font-size:8.4px;line-height:1;white-space:pre;color:#000;font-weight:normal;text-align:center;letter-spacing:-0.2px;-webkit-text-stroke:0.05px #000;">#VALUE!</div>
<div style="position:absolute;right:747px;top:518.69px;font-size:8.4px;line-height:1;white-space:pre;color:#000;font-weight:normal;text-align:right;letter-spacing:-0.2px;-webkit-text-stroke:0.05px #000;">-</div>
<div style="position:absolute;right:747px;top:530.69px;font-size:8.4px;line-height:1;white-space:pre;color:#000;font-weight:normal;text-align:right;letter-spacing:-0.2px;-webkit-text-stroke:0.05px #000;">-</div>
<div style="position:absolute;right:747px;top:542.69px;font-size:8.4px;line-height:1;white-space:pre;color:#000;font-weight:normal;text-align:right;letter-spacing:-0.2px;-webkit-text-stroke:0.05px #000;">-</div>
<svg style="position:absolute;left:486px;top:553px" width="6" height="6"><path d="M0 0 L5.5 0 L0 5.5 Z" fill="#1a7f37"/></svg>
<div style="position:absolute;left:317.5px;width:400px;top:554.69px;font-size:8.4px;line-height:1;white-space:pre;color:#000;font-weight:normal;text-align:center;letter-spacing:-0.2px;-webkit-text-stroke:0.05px #000;">#VALUE!</div>
<svg style="position:absolute;left:486px;top:565px" width="6" height="6"><path d="M0 0 L5.5 0 L0 5.5 Z" fill="#1a7f37"/></svg>
<div style="position:absolute;left:317.5px;width:400px;top:566.69px;font-size:8.4px;line-height:1;white-space:pre;color:#000;font-weight:normal;text-align:center;letter-spacing:-0.2px;-webkit-text-stroke:0.05px #000;">#VALUE!</div>
<svg style="position:absolute;left:486px;top:577px" width="6" height="6"><path d="M0 0 L5.5 0 L0 5.5 Z" fill="#1a7f37"/></svg>
<div style="position:absolute;left:317.5px;width:400px;top:578.69px;font-size:8.4px;line-height:1;white-space:pre;color:#000;font-weight:normal;text-align:center;letter-spacing:-0.2px;-webkit-text-stroke:0.05px #000;">#VALUE!</div>
<div style="position:absolute;right:747px;top:590.69px;font-size:8.4px;line-height:1;white-space:pre;color:#000;font-weight:normal;text-align:right;letter-spacing:-0.2px;-webkit-text-stroke:0.05px #000;">-</div>
<div style="position:absolute;right:747px;top:602.69px;font-size:8.4px;line-height:1;white-space:pre;color:#000;font-weight:normal;text-align:right;letter-spacing:-0.2px;-webkit-text-stroke:0.05px #000;">-</div>
<div style="position:absolute;right:747px;top:614.69px;font-size:8.4px;line-height:1;white-space:pre;color:#000;font-weight:normal;text-align:right;letter-spacing:-0.2px;-webkit-text-stroke:0.05px #000;">-</div>
<svg style="position:absolute;left:486px;top:625px" width="6" height="6"><path d="M0 0 L5.5 0 L0 5.5 Z" fill="#1a7f37"/></svg>
<div style="position:absolute;left:317.5px;width:400px;top:626.69px;font-size:8.4px;line-height:1;white-space:pre;color:#000;font-weight:normal;text-align:center;letter-spacing:-0.2px;-webkit-text-stroke:0.05px #000;">#VALUE!</div>
<svg style="position:absolute;left:486px;top:637px" width="6" height="6"><path d="M0 0 L5.5 0 L0 5.5 Z" fill="#1a7f37"/></svg>
<div style="position:absolute;left:317.5px;width:400px;top:638.69px;font-size:8.4px;line-height:1;white-space:pre;color:#000;font-weight:normal;text-align:center;letter-spacing:-0.2px;-webkit-text-stroke:0.05px #000;">#VALUE!</div>
<svg style="position:absolute;left:486px;top:649px" width="6" height="6"><path d="M0 0 L5.5 0 L0 5.5 Z" fill="#1a7f37"/></svg>
<div style="position:absolute;left:317.5px;width:400px;top:650.69px;font-size:8.4px;line-height:1;white-space:pre;color:#000;font-weight:normal;text-align:center;letter-spacing:-0.2px;-webkit-text-stroke:0.05px #000;">#VALUE!</div>
<div style="position:absolute;right:747px;top:662.69px;font-size:8.4px;line-height:1;white-space:pre;color:#000;font-weight:normal;text-align:right;letter-spacing:-0.2px;-webkit-text-stroke:0.05px #000;">-</div>
<svg style="position:absolute;left:548px;top:214px" width="6" height="6"><path d="M0 0 L5.5 0 L0 5.5 Z" fill="#1a7f37"/></svg>
<div style="position:absolute;left:379.5px;width:400px;top:215.69px;font-size:8.4px;line-height:1;white-space:pre;color:#000;font-weight:normal;text-align:center;letter-spacing:-0.2px;-webkit-text-stroke:0.05px #000;">#VALUE!</div>
<div style="position:absolute;right:676px;top:227.69px;font-size:8.4px;line-height:1;white-space:pre;color:#000;font-weight:normal;text-align:right;letter-spacing:-0.2px;-webkit-text-stroke:0.05px #000;">40,932,901</div>
<div style="position:absolute;right:685px;top:239.69px;font-size:8.4px;line-height:1;white-space:pre;color:#000;font-weight:normal;text-align:right;letter-spacing:-0.2px;-webkit-text-stroke:0.05px #000;">-</div>
<div style="position:absolute;right:676px;top:251.69px;font-size:8.4px;line-height:1;white-space:pre;color:#000;font-weight:normal;text-align:right;letter-spacing:-0.2px;-webkit-text-stroke:0.05px #000;">1,462,265,911</div>
<div style="position:absolute;right:673px;top:263.69px;font-size:8.4px;line-height:1;white-space:pre;color:#000;font-weight:normal;text-align:right;letter-spacing:-0.2px;-webkit-text-stroke:0.05px #000;">(175,620,045)</div>
<svg style="position:absolute;left:548px;top:274px" width="6" height="6"><path d="M0 0 L5.5 0 L0 5.5 Z" fill="#1a7f37"/></svg>
<div style="position:absolute;left:379.5px;width:400px;top:275.69px;font-size:8.4px;line-height:1;white-space:pre;color:#000;font-weight:normal;text-align:center;letter-spacing:-0.2px;-webkit-text-stroke:0.05px #000;">#VALUE!</div>
<svg style="position:absolute;left:548px;top:286px" width="6" height="6"><path d="M0 0 L5.5 0 L0 5.5 Z" fill="#1a7f37"/></svg>
<div style="position:absolute;left:379.5px;width:400px;top:287.69px;font-size:8.4px;line-height:1;white-space:pre;color:#000;font-weight:normal;text-align:center;letter-spacing:-0.2px;-webkit-text-stroke:0.05px #000;">#VALUE!</div>
<svg style="position:absolute;left:548px;top:298px" width="6" height="6"><path d="M0 0 L5.5 0 L0 5.5 Z" fill="#1a7f37"/></svg>
<div style="position:absolute;left:379.5px;width:400px;top:299.69px;font-size:8.4px;line-height:1;white-space:pre;color:#000;font-weight:normal;text-align:center;letter-spacing:-0.2px;-webkit-text-stroke:0.05px #000;">#VALUE!</div>
<svg style="position:absolute;left:548px;top:310px" width="6" height="6"><path d="M0 0 L5.5 0 L0 5.5 Z" fill="#1a7f37"/></svg>
<div style="position:absolute;left:379.5px;width:400px;top:311.69px;font-size:8.4px;line-height:1;white-space:pre;color:#000;font-weight:normal;text-align:center;letter-spacing:-0.2px;-webkit-text-stroke:0.05px #000;">#VALUE!</div>
<svg style="position:absolute;left:548px;top:347px" width="6" height="6"><path d="M0 0 L5.5 0 L0 5.5 Z" fill="#1a7f37"/></svg>
<div style="position:absolute;left:379.5px;width:400px;top:348.69px;font-size:8.4px;line-height:1;white-space:pre;color:#000;font-weight:normal;text-align:center;letter-spacing:-0.2px;-webkit-text-stroke:0.05px #000;">#VALUE!</div>
<svg style="position:absolute;left:548px;top:359px" width="6" height="6"><path d="M0 0 L5.5 0 L0 5.5 Z" fill="#1a7f37"/></svg>
<div style="position:absolute;left:379.5px;width:400px;top:360.69px;font-size:8.4px;line-height:1;white-space:pre;color:#000;font-weight:normal;text-align:center;letter-spacing:-0.2px;-webkit-text-stroke:0.05px #000;">#VALUE!</div>
<svg style="position:absolute;left:548px;top:371px" width="6" height="6"><path d="M0 0 L5.5 0 L0 5.5 Z" fill="#1a7f37"/></svg>
<div style="position:absolute;left:379.5px;width:400px;top:372.69px;font-size:8.4px;line-height:1;white-space:pre;color:#000;font-weight:normal;text-align:center;letter-spacing:-0.2px;-webkit-text-stroke:0.05px #000;">#VALUE!</div>
<svg style="position:absolute;left:548px;top:383px" width="6" height="6"><path d="M0 0 L5.5 0 L0 5.5 Z" fill="#1a7f37"/></svg>
<div style="position:absolute;left:379.5px;width:400px;top:384.69px;font-size:8.4px;line-height:1;white-space:pre;color:#000;font-weight:normal;text-align:center;letter-spacing:-0.2px;-webkit-text-stroke:0.05px #000;">#VALUE!</div>
<svg style="position:absolute;left:548px;top:408px" width="6" height="6"><path d="M0 0 L5.5 0 L0 5.5 Z" fill="#1a7f37"/></svg>
<div style="position:absolute;left:379.5px;width:400px;top:409.69px;font-size:8.4px;line-height:1;white-space:pre;color:#000;font-weight:normal;text-align:center;letter-spacing:-0.2px;-webkit-text-stroke:0.05px #000;">#VALUE!</div>
<svg style="position:absolute;left:548px;top:456px" width="6" height="6"><path d="M0 0 L5.5 0 L0 5.5 Z" fill="#1a7f37"/></svg>
<div style="position:absolute;left:379.5px;width:400px;top:457.69px;font-size:8.4px;line-height:1;white-space:pre;color:#000;font-weight:normal;text-align:center;letter-spacing:-0.2px;-webkit-text-stroke:0.05px #000;">#VALUE!</div>
<svg style="position:absolute;left:548px;top:468px" width="6" height="6"><path d="M0 0 L5.5 0 L0 5.5 Z" fill="#1a7f37"/></svg>
<div style="position:absolute;left:379.5px;width:400px;top:469.69px;font-size:8.4px;line-height:1;white-space:pre;color:#000;font-weight:normal;text-align:center;letter-spacing:-0.2px;-webkit-text-stroke:0.05px #000;">#VALUE!</div>
<svg style="position:absolute;left:548px;top:480px" width="6" height="6"><path d="M0 0 L5.5 0 L0 5.5 Z" fill="#1a7f37"/></svg>
<div style="position:absolute;left:379.5px;width:400px;top:481.69px;font-size:8.4px;line-height:1;white-space:pre;color:#000;font-weight:normal;text-align:center;letter-spacing:-0.2px;-webkit-text-stroke:0.05px #000;">#VALUE!</div>
<svg style="position:absolute;left:548px;top:492px" width="6" height="6"><path d="M0 0 L5.5 0 L0 5.5 Z" fill="#1a7f37"/></svg>
<div style="position:absolute;left:379.5px;width:400px;top:493.69px;font-size:8.4px;line-height:1;white-space:pre;color:#000;font-weight:normal;text-align:center;letter-spacing:-0.2px;-webkit-text-stroke:0.05px #000;">#VALUE!</div>
<svg style="position:absolute;left:548px;top:504px" width="6" height="6"><path d="M0 0 L5.5 0 L0 5.5 Z" fill="#1a7f37"/></svg>
<div style="position:absolute;left:379.5px;width:400px;top:505.69px;font-size:8.4px;line-height:1;white-space:pre;color:#000;font-weight:normal;text-align:center;letter-spacing:-0.2px;-webkit-text-stroke:0.05px #000;">#VALUE!</div>
<div style="position:absolute;right:685px;top:518.69px;font-size:8.4px;line-height:1;white-space:pre;color:#000;font-weight:normal;text-align:right;letter-spacing:-0.2px;-webkit-text-stroke:0.05px #000;">-</div>
<div style="position:absolute;right:685px;top:530.69px;font-size:8.4px;line-height:1;white-space:pre;color:#000;font-weight:normal;text-align:right;letter-spacing:-0.2px;-webkit-text-stroke:0.05px #000;">-</div>
<div style="position:absolute;right:685px;top:542.69px;font-size:8.4px;line-height:1;white-space:pre;color:#000;font-weight:normal;text-align:right;letter-spacing:-0.2px;-webkit-text-stroke:0.05px #000;">-</div>
<svg style="position:absolute;left:548px;top:553px" width="6" height="6"><path d="M0 0 L5.5 0 L0 5.5 Z" fill="#1a7f37"/></svg>
<div style="position:absolute;left:379.5px;width:400px;top:554.69px;font-size:8.4px;line-height:1;white-space:pre;color:#000;font-weight:normal;text-align:center;letter-spacing:-0.2px;-webkit-text-stroke:0.05px #000;">#VALUE!</div>
<svg style="position:absolute;left:548px;top:565px" width="6" height="6"><path d="M0 0 L5.5 0 L0 5.5 Z" fill="#1a7f37"/></svg>
<div style="position:absolute;left:379.5px;width:400px;top:566.69px;font-size:8.4px;line-height:1;white-space:pre;color:#000;font-weight:normal;text-align:center;letter-spacing:-0.2px;-webkit-text-stroke:0.05px #000;">#VALUE!</div>
<svg style="position:absolute;left:548px;top:577px" width="6" height="6"><path d="M0 0 L5.5 0 L0 5.5 Z" fill="#1a7f37"/></svg>
<div style="position:absolute;left:379.5px;width:400px;top:578.69px;font-size:8.4px;line-height:1;white-space:pre;color:#000;font-weight:normal;text-align:center;letter-spacing:-0.2px;-webkit-text-stroke:0.05px #000;">#VALUE!</div>
<div style="position:absolute;right:685px;top:590.69px;font-size:8.4px;line-height:1;white-space:pre;color:#000;font-weight:normal;text-align:right;letter-spacing:-0.2px;-webkit-text-stroke:0.05px #000;">-</div>
<div style="position:absolute;right:685px;top:602.69px;font-size:8.4px;line-height:1;white-space:pre;color:#000;font-weight:normal;text-align:right;letter-spacing:-0.2px;-webkit-text-stroke:0.05px #000;">-</div>
<div style="position:absolute;right:685px;top:614.69px;font-size:8.4px;line-height:1;white-space:pre;color:#000;font-weight:normal;text-align:right;letter-spacing:-0.2px;-webkit-text-stroke:0.05px #000;">-</div>
<svg style="position:absolute;left:548px;top:625px" width="6" height="6"><path d="M0 0 L5.5 0 L0 5.5 Z" fill="#1a7f37"/></svg>
<div style="position:absolute;left:379.5px;width:400px;top:626.69px;font-size:8.4px;line-height:1;white-space:pre;color:#000;font-weight:normal;text-align:center;letter-spacing:-0.2px;-webkit-text-stroke:0.05px #000;">#VALUE!</div>
<svg style="position:absolute;left:548px;top:637px" width="6" height="6"><path d="M0 0 L5.5 0 L0 5.5 Z" fill="#1a7f37"/></svg>
<div style="position:absolute;left:379.5px;width:400px;top:638.69px;font-size:8.4px;line-height:1;white-space:pre;color:#000;font-weight:normal;text-align:center;letter-spacing:-0.2px;-webkit-text-stroke:0.05px #000;">#VALUE!</div>
<svg style="position:absolute;left:548px;top:649px" width="6" height="6"><path d="M0 0 L5.5 0 L0 5.5 Z" fill="#1a7f37"/></svg>
<div style="position:absolute;left:379.5px;width:400px;top:650.69px;font-size:8.4px;line-height:1;white-space:pre;color:#000;font-weight:normal;text-align:center;letter-spacing:-0.2px;-webkit-text-stroke:0.05px #000;">#VALUE!</div>
<div style="position:absolute;right:685px;top:662.69px;font-size:8.4px;line-height:1;white-space:pre;color:#000;font-weight:normal;text-align:right;letter-spacing:-0.2px;-webkit-text-stroke:0.05px #000;">-</div>
<svg style="position:absolute;left:610px;top:214px" width="6" height="6"><path d="M0 0 L5.5 0 L0 5.5 Z" fill="#1a7f37"/></svg>
<div style="position:absolute;left:441.5px;width:400px;top:215.69px;font-size:8.4px;line-height:1;white-space:pre;color:#000;font-weight:normal;text-align:center;letter-spacing:-0.2px;-webkit-text-stroke:0.05px #000;">#VALUE!</div>
<div style="position:absolute;right:614px;top:227.69px;font-size:8.4px;line-height:1;white-space:pre;color:#000;font-weight:normal;text-align:right;letter-spacing:-0.2px;-webkit-text-stroke:0.05px #000;">39,937,180</div>
<div style="position:absolute;right:623px;top:239.69px;font-size:8.4px;line-height:1;white-space:pre;color:#000;font-weight:normal;text-align:right;letter-spacing:-0.2px;-webkit-text-stroke:0.05px #000;">-</div>
<div style="position:absolute;right:614px;top:251.69px;font-size:8.4px;line-height:1;white-space:pre;color:#000;font-weight:normal;text-align:right;letter-spacing:-0.2px;-webkit-text-stroke:0.05px #000;">1,462,265,911</div>
<div style="position:absolute;right:611px;top:263.69px;font-size:8.4px;line-height:1;white-space:pre;color:#000;font-weight:normal;text-align:right;letter-spacing:-0.2px;-webkit-text-stroke:0.05px #000;">(273,104,439)</div>
<svg style="position:absolute;left:610px;top:274px" width="6" height="6"><path d="M0 0 L5.5 0 L0 5.5 Z" fill="#1a7f37"/></svg>
<div style="position:absolute;left:441.5px;width:400px;top:275.69px;font-size:8.4px;line-height:1;white-space:pre;color:#000;font-weight:normal;text-align:center;letter-spacing:-0.2px;-webkit-text-stroke:0.05px #000;">#VALUE!</div>
<svg style="position:absolute;left:610px;top:286px" width="6" height="6"><path d="M0 0 L5.5 0 L0 5.5 Z" fill="#1a7f37"/></svg>
<div style="position:absolute;left:441.5px;width:400px;top:287.69px;font-size:8.4px;line-height:1;white-space:pre;color:#000;font-weight:normal;text-align:center;letter-spacing:-0.2px;-webkit-text-stroke:0.05px #000;">#VALUE!</div>
<svg style="position:absolute;left:610px;top:298px" width="6" height="6"><path d="M0 0 L5.5 0 L0 5.5 Z" fill="#1a7f37"/></svg>
<div style="position:absolute;left:441.5px;width:400px;top:299.69px;font-size:8.4px;line-height:1;white-space:pre;color:#000;font-weight:normal;text-align:center;letter-spacing:-0.2px;-webkit-text-stroke:0.05px #000;">#VALUE!</div>
<svg style="position:absolute;left:610px;top:310px" width="6" height="6"><path d="M0 0 L5.5 0 L0 5.5 Z" fill="#1a7f37"/></svg>
<div style="position:absolute;left:441.5px;width:400px;top:311.69px;font-size:8.4px;line-height:1;white-space:pre;color:#000;font-weight:normal;text-align:center;letter-spacing:-0.2px;-webkit-text-stroke:0.05px #000;">#VALUE!</div>
<svg style="position:absolute;left:610px;top:347px" width="6" height="6"><path d="M0 0 L5.5 0 L0 5.5 Z" fill="#1a7f37"/></svg>
<div style="position:absolute;left:441.5px;width:400px;top:348.69px;font-size:8.4px;line-height:1;white-space:pre;color:#000;font-weight:normal;text-align:center;letter-spacing:-0.2px;-webkit-text-stroke:0.05px #000;">#VALUE!</div>
<svg style="position:absolute;left:610px;top:359px" width="6" height="6"><path d="M0 0 L5.5 0 L0 5.5 Z" fill="#1a7f37"/></svg>
<div style="position:absolute;left:441.5px;width:400px;top:360.69px;font-size:8.4px;line-height:1;white-space:pre;color:#000;font-weight:normal;text-align:center;letter-spacing:-0.2px;-webkit-text-stroke:0.05px #000;">#VALUE!</div>
<svg style="position:absolute;left:610px;top:371px" width="6" height="6"><path d="M0 0 L5.5 0 L0 5.5 Z" fill="#1a7f37"/></svg>
<div style="position:absolute;left:441.5px;width:400px;top:372.69px;font-size:8.4px;line-height:1;white-space:pre;color:#000;font-weight:normal;text-align:center;letter-spacing:-0.2px;-webkit-text-stroke:0.05px #000;">#VALUE!</div>
<svg style="position:absolute;left:610px;top:383px" width="6" height="6"><path d="M0 0 L5.5 0 L0 5.5 Z" fill="#1a7f37"/></svg>
<div style="position:absolute;left:441.5px;width:400px;top:384.69px;font-size:8.4px;line-height:1;white-space:pre;color:#000;font-weight:normal;text-align:center;letter-spacing:-0.2px;-webkit-text-stroke:0.05px #000;">#VALUE!</div>
<svg style="position:absolute;left:610px;top:408px" width="6" height="6"><path d="M0 0 L5.5 0 L0 5.5 Z" fill="#1a7f37"/></svg>
<div style="position:absolute;left:441.5px;width:400px;top:409.69px;font-size:8.4px;line-height:1;white-space:pre;color:#000;font-weight:normal;text-align:center;letter-spacing:-0.2px;-webkit-text-stroke:0.05px #000;">#VALUE!</div>
<svg style="position:absolute;left:610px;top:456px" width="6" height="6"><path d="M0 0 L5.5 0 L0 5.5 Z" fill="#1a7f37"/></svg>
<div style="position:absolute;left:441.5px;width:400px;top:457.69px;font-size:8.4px;line-height:1;white-space:pre;color:#000;font-weight:normal;text-align:center;letter-spacing:-0.2px;-webkit-text-stroke:0.05px #000;">#VALUE!</div>
<svg style="position:absolute;left:610px;top:468px" width="6" height="6"><path d="M0 0 L5.5 0 L0 5.5 Z" fill="#1a7f37"/></svg>
<div style="position:absolute;left:441.5px;width:400px;top:469.69px;font-size:8.4px;line-height:1;white-space:pre;color:#000;font-weight:normal;text-align:center;letter-spacing:-0.2px;-webkit-text-stroke:0.05px #000;">#VALUE!</div>
<svg style="position:absolute;left:610px;top:480px" width="6" height="6"><path d="M0 0 L5.5 0 L0 5.5 Z" fill="#1a7f37"/></svg>
<div style="position:absolute;left:441.5px;width:400px;top:481.69px;font-size:8.4px;line-height:1;white-space:pre;color:#000;font-weight:normal;text-align:center;letter-spacing:-0.2px;-webkit-text-stroke:0.05px #000;">#VALUE!</div>
<svg style="position:absolute;left:610px;top:492px" width="6" height="6"><path d="M0 0 L5.5 0 L0 5.5 Z" fill="#1a7f37"/></svg>
<div style="position:absolute;left:441.5px;width:400px;top:493.69px;font-size:8.4px;line-height:1;white-space:pre;color:#000;font-weight:normal;text-align:center;letter-spacing:-0.2px;-webkit-text-stroke:0.05px #000;">#VALUE!</div>
<svg style="position:absolute;left:610px;top:504px" width="6" height="6"><path d="M0 0 L5.5 0 L0 5.5 Z" fill="#1a7f37"/></svg>
<div style="position:absolute;left:441.5px;width:400px;top:505.69px;font-size:8.4px;line-height:1;white-space:pre;color:#000;font-weight:normal;text-align:center;letter-spacing:-0.2px;-webkit-text-stroke:0.05px #000;">#VALUE!</div>
<div style="position:absolute;right:623px;top:518.69px;font-size:8.4px;line-height:1;white-space:pre;color:#000;font-weight:normal;text-align:right;letter-spacing:-0.2px;-webkit-text-stroke:0.05px #000;">-</div>
<div style="position:absolute;right:623px;top:530.69px;font-size:8.4px;line-height:1;white-space:pre;color:#000;font-weight:normal;text-align:right;letter-spacing:-0.2px;-webkit-text-stroke:0.05px #000;">-</div>
<div style="position:absolute;right:623px;top:542.69px;font-size:8.4px;line-height:1;white-space:pre;color:#000;font-weight:normal;text-align:right;letter-spacing:-0.2px;-webkit-text-stroke:0.05px #000;">-</div>
<svg style="position:absolute;left:610px;top:553px" width="6" height="6"><path d="M0 0 L5.5 0 L0 5.5 Z" fill="#1a7f37"/></svg>
<div style="position:absolute;left:441.5px;width:400px;top:554.69px;font-size:8.4px;line-height:1;white-space:pre;color:#000;font-weight:normal;text-align:center;letter-spacing:-0.2px;-webkit-text-stroke:0.05px #000;">#VALUE!</div>
<svg style="position:absolute;left:610px;top:565px" width="6" height="6"><path d="M0 0 L5.5 0 L0 5.5 Z" fill="#1a7f37"/></svg>
<div style="position:absolute;left:441.5px;width:400px;top:566.69px;font-size:8.4px;line-height:1;white-space:pre;color:#000;font-weight:normal;text-align:center;letter-spacing:-0.2px;-webkit-text-stroke:0.05px #000;">#VALUE!</div>
<svg style="position:absolute;left:610px;top:577px" width="6" height="6"><path d="M0 0 L5.5 0 L0 5.5 Z" fill="#1a7f37"/></svg>
<div style="position:absolute;left:441.5px;width:400px;top:578.69px;font-size:8.4px;line-height:1;white-space:pre;color:#000;font-weight:normal;text-align:center;letter-spacing:-0.2px;-webkit-text-stroke:0.05px #000;">#VALUE!</div>
<div style="position:absolute;right:623px;top:590.69px;font-size:8.4px;line-height:1;white-space:pre;color:#000;font-weight:normal;text-align:right;letter-spacing:-0.2px;-webkit-text-stroke:0.05px #000;">-</div>
<div style="position:absolute;right:623px;top:602.69px;font-size:8.4px;line-height:1;white-space:pre;color:#000;font-weight:normal;text-align:right;letter-spacing:-0.2px;-webkit-text-stroke:0.05px #000;">-</div>
<div style="position:absolute;right:623px;top:614.69px;font-size:8.4px;line-height:1;white-space:pre;color:#000;font-weight:normal;text-align:right;letter-spacing:-0.2px;-webkit-text-stroke:0.05px #000;">-</div>
<svg style="position:absolute;left:610px;top:625px" width="6" height="6"><path d="M0 0 L5.5 0 L0 5.5 Z" fill="#1a7f37"/></svg>
<div style="position:absolute;left:441.5px;width:400px;top:626.69px;font-size:8.4px;line-height:1;white-space:pre;color:#000;font-weight:normal;text-align:center;letter-spacing:-0.2px;-webkit-text-stroke:0.05px #000;">#VALUE!</div>
<svg style="position:absolute;left:610px;top:637px" width="6" height="6"><path d="M0 0 L5.5 0 L0 5.5 Z" fill="#1a7f37"/></svg>
<div style="position:absolute;left:441.5px;width:400px;top:638.69px;font-size:8.4px;line-height:1;white-space:pre;color:#000;font-weight:normal;text-align:center;letter-spacing:-0.2px;-webkit-text-stroke:0.05px #000;">#VALUE!</div>
<svg style="position:absolute;left:610px;top:649px" width="6" height="6"><path d="M0 0 L5.5 0 L0 5.5 Z" fill="#1a7f37"/></svg>
<div style="position:absolute;left:441.5px;width:400px;top:650.69px;font-size:8.4px;line-height:1;white-space:pre;color:#000;font-weight:normal;text-align:center;letter-spacing:-0.2px;-webkit-text-stroke:0.05px #000;">#VALUE!</div>
<div style="position:absolute;right:623px;top:662.69px;font-size:8.4px;line-height:1;white-space:pre;color:#000;font-weight:normal;text-align:right;letter-spacing:-0.2px;-webkit-text-stroke:0.05px #000;">-</div>
<svg style="position:absolute;left:672px;top:214px" width="6" height="6"><path d="M0 0 L5.5 0 L0 5.5 Z" fill="#1a7f37"/></svg>
<div style="position:absolute;left:503.5px;width:400px;top:215.69px;font-size:8.4px;line-height:1;white-space:pre;color:#000;font-weight:normal;text-align:center;letter-spacing:-0.2px;-webkit-text-stroke:0.05px #000;">#VALUE!</div>
<div style="position:absolute;right:552px;top:227.69px;font-size:8.4px;line-height:1;white-space:pre;color:#000;font-weight:normal;text-align:right;letter-spacing:-0.2px;-webkit-text-stroke:0.05px #000;">39,987,182</div>
<div style="position:absolute;right:561px;top:239.69px;font-size:8.4px;line-height:1;white-space:pre;color:#000;font-weight:normal;text-align:right;letter-spacing:-0.2px;-webkit-text-stroke:0.05px #000;">-</div>
<div style="position:absolute;right:552px;top:251.69px;font-size:8.4px;line-height:1;white-space:pre;color:#000;font-weight:normal;text-align:right;letter-spacing:-0.2px;-webkit-text-stroke:0.05px #000;">1,462,265,911</div>
<div style="position:absolute;right:549px;top:263.69px;font-size:8.4px;line-height:1;white-space:pre;color:#000;font-weight:normal;text-align:right;letter-spacing:-0.2px;-webkit-text-stroke:0.05px #000;">(370,588,833)</div>
<svg style="position:absolute;left:672px;top:274px" width="6" height="6"><path d="M0 0 L5.5 0 L0 5.5 Z" fill="#1a7f37"/></svg>
<div style="position:absolute;left:503.5px;width:400px;top:275.69px;font-size:8.4px;line-height:1;white-space:pre;color:#000;font-weight:normal;text-align:center;letter-spacing:-0.2px;-webkit-text-stroke:0.05px #000;">#VALUE!</div>
<svg style="position:absolute;left:672px;top:286px" width="6" height="6"><path d="M0 0 L5.5 0 L0 5.5 Z" fill="#1a7f37"/></svg>
<div style="position:absolute;left:503.5px;width:400px;top:287.69px;font-size:8.4px;line-height:1;white-space:pre;color:#000;font-weight:normal;text-align:center;letter-spacing:-0.2px;-webkit-text-stroke:0.05px #000;">#VALUE!</div>
<svg style="position:absolute;left:672px;top:298px" width="6" height="6"><path d="M0 0 L5.5 0 L0 5.5 Z" fill="#1a7f37"/></svg>
<div style="position:absolute;left:503.5px;width:400px;top:299.69px;font-size:8.4px;line-height:1;white-space:pre;color:#000;font-weight:normal;text-align:center;letter-spacing:-0.2px;-webkit-text-stroke:0.05px #000;">#VALUE!</div>
<svg style="position:absolute;left:672px;top:310px" width="6" height="6"><path d="M0 0 L5.5 0 L0 5.5 Z" fill="#1a7f37"/></svg>
<div style="position:absolute;left:503.5px;width:400px;top:311.69px;font-size:8.4px;line-height:1;white-space:pre;color:#000;font-weight:normal;text-align:center;letter-spacing:-0.2px;-webkit-text-stroke:0.05px #000;">#VALUE!</div>
<svg style="position:absolute;left:672px;top:347px" width="6" height="6"><path d="M0 0 L5.5 0 L0 5.5 Z" fill="#1a7f37"/></svg>
<div style="position:absolute;left:503.5px;width:400px;top:348.69px;font-size:8.4px;line-height:1;white-space:pre;color:#000;font-weight:normal;text-align:center;letter-spacing:-0.2px;-webkit-text-stroke:0.05px #000;">#VALUE!</div>
<svg style="position:absolute;left:672px;top:359px" width="6" height="6"><path d="M0 0 L5.5 0 L0 5.5 Z" fill="#1a7f37"/></svg>
<div style="position:absolute;left:503.5px;width:400px;top:360.69px;font-size:8.4px;line-height:1;white-space:pre;color:#000;font-weight:normal;text-align:center;letter-spacing:-0.2px;-webkit-text-stroke:0.05px #000;">#VALUE!</div>
<svg style="position:absolute;left:672px;top:371px" width="6" height="6"><path d="M0 0 L5.5 0 L0 5.5 Z" fill="#1a7f37"/></svg>
<div style="position:absolute;left:503.5px;width:400px;top:372.69px;font-size:8.4px;line-height:1;white-space:pre;color:#000;font-weight:normal;text-align:center;letter-spacing:-0.2px;-webkit-text-stroke:0.05px #000;">#VALUE!</div>
<svg style="position:absolute;left:672px;top:383px" width="6" height="6"><path d="M0 0 L5.5 0 L0 5.5 Z" fill="#1a7f37"/></svg>
<div style="position:absolute;left:503.5px;width:400px;top:384.69px;font-size:8.4px;line-height:1;white-space:pre;color:#000;font-weight:normal;text-align:center;letter-spacing:-0.2px;-webkit-text-stroke:0.05px #000;">#VALUE!</div>
<svg style="position:absolute;left:672px;top:408px" width="6" height="6"><path d="M0 0 L5.5 0 L0 5.5 Z" fill="#1a7f37"/></svg>
<div style="position:absolute;left:503.5px;width:400px;top:409.69px;font-size:8.4px;line-height:1;white-space:pre;color:#000;font-weight:normal;text-align:center;letter-spacing:-0.2px;-webkit-text-stroke:0.05px #000;">#VALUE!</div>
<svg style="position:absolute;left:672px;top:456px" width="6" height="6"><path d="M0 0 L5.5 0 L0 5.5 Z" fill="#1a7f37"/></svg>
<div style="position:absolute;left:503.5px;width:400px;top:457.69px;font-size:8.4px;line-height:1;white-space:pre;color:#000;font-weight:normal;text-align:center;letter-spacing:-0.2px;-webkit-text-stroke:0.05px #000;">#VALUE!</div>
<svg style="position:absolute;left:672px;top:468px" width="6" height="6"><path d="M0 0 L5.5 0 L0 5.5 Z" fill="#1a7f37"/></svg>
<div style="position:absolute;left:503.5px;width:400px;top:469.69px;font-size:8.4px;line-height:1;white-space:pre;color:#000;font-weight:normal;text-align:center;letter-spacing:-0.2px;-webkit-text-stroke:0.05px #000;">#VALUE!</div>
<svg style="position:absolute;left:672px;top:480px" width="6" height="6"><path d="M0 0 L5.5 0 L0 5.5 Z" fill="#1a7f37"/></svg>
<div style="position:absolute;left:503.5px;width:400px;top:481.69px;font-size:8.4px;line-height:1;white-space:pre;color:#000;font-weight:normal;text-align:center;letter-spacing:-0.2px;-webkit-text-stroke:0.05px #000;">#VALUE!</div>
<svg style="position:absolute;left:672px;top:492px" width="6" height="6"><path d="M0 0 L5.5 0 L0 5.5 Z" fill="#1a7f37"/></svg>
<div style="position:absolute;left:503.5px;width:400px;top:493.69px;font-size:8.4px;line-height:1;white-space:pre;color:#000;font-weight:normal;text-align:center;letter-spacing:-0.2px;-webkit-text-stroke:0.05px #000;">#VALUE!</div>
<svg style="position:absolute;left:672px;top:504px" width="6" height="6"><path d="M0 0 L5.5 0 L0 5.5 Z" fill="#1a7f37"/></svg>
<div style="position:absolute;left:503.5px;width:400px;top:505.69px;font-size:8.4px;line-height:1;white-space:pre;color:#000;font-weight:normal;text-align:center;letter-spacing:-0.2px;-webkit-text-stroke:0.05px #000;">#VALUE!</div>
<div style="position:absolute;right:561px;top:518.69px;font-size:8.4px;line-height:1;white-space:pre;color:#000;font-weight:normal;text-align:right;letter-spacing:-0.2px;-webkit-text-stroke:0.05px #000;">-</div>
<div style="position:absolute;right:561px;top:530.69px;font-size:8.4px;line-height:1;white-space:pre;color:#000;font-weight:normal;text-align:right;letter-spacing:-0.2px;-webkit-text-stroke:0.05px #000;">-</div>
<div style="position:absolute;right:561px;top:542.69px;font-size:8.4px;line-height:1;white-space:pre;color:#000;font-weight:normal;text-align:right;letter-spacing:-0.2px;-webkit-text-stroke:0.05px #000;">-</div>
<svg style="position:absolute;left:672px;top:553px" width="6" height="6"><path d="M0 0 L5.5 0 L0 5.5 Z" fill="#1a7f37"/></svg>
<div style="position:absolute;left:503.5px;width:400px;top:554.69px;font-size:8.4px;line-height:1;white-space:pre;color:#000;font-weight:normal;text-align:center;letter-spacing:-0.2px;-webkit-text-stroke:0.05px #000;">#VALUE!</div>
<svg style="position:absolute;left:672px;top:565px" width="6" height="6"><path d="M0 0 L5.5 0 L0 5.5 Z" fill="#1a7f37"/></svg>
<div style="position:absolute;left:503.5px;width:400px;top:566.69px;font-size:8.4px;line-height:1;white-space:pre;color:#000;font-weight:normal;text-align:center;letter-spacing:-0.2px;-webkit-text-stroke:0.05px #000;">#VALUE!</div>
<svg style="position:absolute;left:672px;top:577px" width="6" height="6"><path d="M0 0 L5.5 0 L0 5.5 Z" fill="#1a7f37"/></svg>
<div style="position:absolute;left:503.5px;width:400px;top:578.69px;font-size:8.4px;line-height:1;white-space:pre;color:#000;font-weight:normal;text-align:center;letter-spacing:-0.2px;-webkit-text-stroke:0.05px #000;">#VALUE!</div>
<div style="position:absolute;right:561px;top:590.69px;font-size:8.4px;line-height:1;white-space:pre;color:#000;font-weight:normal;text-align:right;letter-spacing:-0.2px;-webkit-text-stroke:0.05px #000;">-</div>
<div style="position:absolute;right:561px;top:602.69px;font-size:8.4px;line-height:1;white-space:pre;color:#000;font-weight:normal;text-align:right;letter-spacing:-0.2px;-webkit-text-stroke:0.05px #000;">-</div>
<div style="position:absolute;right:561px;top:614.69px;font-size:8.4px;line-height:1;white-space:pre;color:#000;font-weight:normal;text-align:right;letter-spacing:-0.2px;-webkit-text-stroke:0.05px #000;">-</div>
<svg style="position:absolute;left:672px;top:625px" width="6" height="6"><path d="M0 0 L5.5 0 L0 5.5 Z" fill="#1a7f37"/></svg>
<div style="position:absolute;left:503.5px;width:400px;top:626.69px;font-size:8.4px;line-height:1;white-space:pre;color:#000;font-weight:normal;text-align:center;letter-spacing:-0.2px;-webkit-text-stroke:0.05px #000;">#VALUE!</div>
<svg style="position:absolute;left:672px;top:637px" width="6" height="6"><path d="M0 0 L5.5 0 L0 5.5 Z" fill="#1a7f37"/></svg>
<div style="position:absolute;left:503.5px;width:400px;top:638.69px;font-size:8.4px;line-height:1;white-space:pre;color:#000;font-weight:normal;text-align:center;letter-spacing:-0.2px;-webkit-text-stroke:0.05px #000;">#VALUE!</div>
<svg style="position:absolute;left:672px;top:649px" width="6" height="6"><path d="M0 0 L5.5 0 L0 5.5 Z" fill="#1a7f37"/></svg>
<div style="position:absolute;left:503.5px;width:400px;top:650.69px;font-size:8.4px;line-height:1;white-space:pre;color:#000;font-weight:normal;text-align:center;letter-spacing:-0.2px;-webkit-text-stroke:0.05px #000;">#VALUE!</div>
<div style="position:absolute;right:561px;top:662.69px;font-size:8.4px;line-height:1;white-space:pre;color:#000;font-weight:normal;text-align:right;letter-spacing:-0.2px;-webkit-text-stroke:0.05px #000;">-</div>
<svg style="position:absolute;left:734px;top:214px" width="6" height="6"><path d="M0 0 L5.5 0 L0 5.5 Z" fill="#1a7f37"/></svg>
<div style="position:absolute;left:565.5px;width:400px;top:215.69px;font-size:8.4px;line-height:1;white-space:pre;color:#000;font-weight:normal;text-align:center;letter-spacing:-0.2px;-webkit-text-stroke:0.05px #000;">#VALUE!</div>
<div style="position:absolute;right:490px;top:227.69px;font-size:8.4px;line-height:1;white-space:pre;color:#000;font-weight:normal;text-align:right;letter-spacing:-0.2px;-webkit-text-stroke:0.05px #000;">40,271,385</div>
<div style="position:absolute;right:499px;top:239.69px;font-size:8.4px;line-height:1;white-space:pre;color:#000;font-weight:normal;text-align:right;letter-spacing:-0.2px;-webkit-text-stroke:0.05px #000;">-</div>
<div style="position:absolute;right:490px;top:251.69px;font-size:8.4px;line-height:1;white-space:pre;color:#000;font-weight:normal;text-align:right;letter-spacing:-0.2px;-webkit-text-stroke:0.05px #000;">1,462,265,911</div>
<div style="position:absolute;right:487px;top:263.69px;font-size:8.4px;line-height:1;white-space:pre;color:#000;font-weight:normal;text-align:right;letter-spacing:-0.2px;-webkit-text-stroke:0.05px #000;">(468,073,227)</div>
<svg style="position:absolute;left:734px;top:274px" width="6" height="6"><path d="M0 0 L5.5 0 L0 5.5 Z" fill="#1a7f37"/></svg>
<div style="position:absolute;left:565.5px;width:400px;top:275.69px;font-size:8.4px;line-height:1;white-space:pre;color:#000;font-weight:normal;text-align:center;letter-spacing:-0.2px;-webkit-text-stroke:0.05px #000;">#VALUE!</div>
<svg style="position:absolute;left:734px;top:286px" width="6" height="6"><path d="M0 0 L5.5 0 L0 5.5 Z" fill="#1a7f37"/></svg>
<div style="position:absolute;left:565.5px;width:400px;top:287.69px;font-size:8.4px;line-height:1;white-space:pre;color:#000;font-weight:normal;text-align:center;letter-spacing:-0.2px;-webkit-text-stroke:0.05px #000;">#VALUE!</div>
<svg style="position:absolute;left:734px;top:298px" width="6" height="6"><path d="M0 0 L5.5 0 L0 5.5 Z" fill="#1a7f37"/></svg>
<div style="position:absolute;left:565.5px;width:400px;top:299.69px;font-size:8.4px;line-height:1;white-space:pre;color:#000;font-weight:normal;text-align:center;letter-spacing:-0.2px;-webkit-text-stroke:0.05px #000;">#VALUE!</div>
<svg style="position:absolute;left:734px;top:310px" width="6" height="6"><path d="M0 0 L5.5 0 L0 5.5 Z" fill="#1a7f37"/></svg>
<div style="position:absolute;left:565.5px;width:400px;top:311.69px;font-size:8.4px;line-height:1;white-space:pre;color:#000;font-weight:normal;text-align:center;letter-spacing:-0.2px;-webkit-text-stroke:0.05px #000;">#VALUE!</div>
<svg style="position:absolute;left:734px;top:347px" width="6" height="6"><path d="M0 0 L5.5 0 L0 5.5 Z" fill="#1a7f37"/></svg>
<div style="position:absolute;left:565.5px;width:400px;top:348.69px;font-size:8.4px;line-height:1;white-space:pre;color:#000;font-weight:normal;text-align:center;letter-spacing:-0.2px;-webkit-text-stroke:0.05px #000;">#VALUE!</div>
<svg style="position:absolute;left:734px;top:359px" width="6" height="6"><path d="M0 0 L5.5 0 L0 5.5 Z" fill="#1a7f37"/></svg>
<div style="position:absolute;left:565.5px;width:400px;top:360.69px;font-size:8.4px;line-height:1;white-space:pre;color:#000;font-weight:normal;text-align:center;letter-spacing:-0.2px;-webkit-text-stroke:0.05px #000;">#VALUE!</div>
<svg style="position:absolute;left:734px;top:371px" width="6" height="6"><path d="M0 0 L5.5 0 L0 5.5 Z" fill="#1a7f37"/></svg>
<div style="position:absolute;left:565.5px;width:400px;top:372.69px;font-size:8.4px;line-height:1;white-space:pre;color:#000;font-weight:normal;text-align:center;letter-spacing:-0.2px;-webkit-text-stroke:0.05px #000;">#VALUE!</div>
<svg style="position:absolute;left:734px;top:383px" width="6" height="6"><path d="M0 0 L5.5 0 L0 5.5 Z" fill="#1a7f37"/></svg>
<div style="position:absolute;left:565.5px;width:400px;top:384.69px;font-size:8.4px;line-height:1;white-space:pre;color:#000;font-weight:normal;text-align:center;letter-spacing:-0.2px;-webkit-text-stroke:0.05px #000;">#VALUE!</div>
<svg style="position:absolute;left:734px;top:408px" width="6" height="6"><path d="M0 0 L5.5 0 L0 5.5 Z" fill="#1a7f37"/></svg>
<div style="position:absolute;left:565.5px;width:400px;top:409.69px;font-size:8.4px;line-height:1;white-space:pre;color:#000;font-weight:normal;text-align:center;letter-spacing:-0.2px;-webkit-text-stroke:0.05px #000;">#VALUE!</div>
<svg style="position:absolute;left:734px;top:456px" width="6" height="6"><path d="M0 0 L5.5 0 L0 5.5 Z" fill="#1a7f37"/></svg>
<div style="position:absolute;left:565.5px;width:400px;top:457.69px;font-size:8.4px;line-height:1;white-space:pre;color:#000;font-weight:normal;text-align:center;letter-spacing:-0.2px;-webkit-text-stroke:0.05px #000;">#VALUE!</div>
<svg style="position:absolute;left:734px;top:468px" width="6" height="6"><path d="M0 0 L5.5 0 L0 5.5 Z" fill="#1a7f37"/></svg>
<div style="position:absolute;left:565.5px;width:400px;top:469.69px;font-size:8.4px;line-height:1;white-space:pre;color:#000;font-weight:normal;text-align:center;letter-spacing:-0.2px;-webkit-text-stroke:0.05px #000;">#VALUE!</div>
<svg style="position:absolute;left:734px;top:480px" width="6" height="6"><path d="M0 0 L5.5 0 L0 5.5 Z" fill="#1a7f37"/></svg>
<div style="position:absolute;left:565.5px;width:400px;top:481.69px;font-size:8.4px;line-height:1;white-space:pre;color:#000;font-weight:normal;text-align:center;letter-spacing:-0.2px;-webkit-text-stroke:0.05px #000;">#VALUE!</div>
<svg style="position:absolute;left:734px;top:492px" width="6" height="6"><path d="M0 0 L5.5 0 L0 5.5 Z" fill="#1a7f37"/></svg>
<div style="position:absolute;left:565.5px;width:400px;top:493.69px;font-size:8.4px;line-height:1;white-space:pre;color:#000;font-weight:normal;text-align:center;letter-spacing:-0.2px;-webkit-text-stroke:0.05px #000;">#VALUE!</div>
<svg style="position:absolute;left:734px;top:504px" width="6" height="6"><path d="M0 0 L5.5 0 L0 5.5 Z" fill="#1a7f37"/></svg>
<div style="position:absolute;left:565.5px;width:400px;top:505.69px;font-size:8.4px;line-height:1;white-space:pre;color:#000;font-weight:normal;text-align:center;letter-spacing:-0.2px;-webkit-text-stroke:0.05px #000;">#VALUE!</div>
<div style="position:absolute;right:499px;top:518.69px;font-size:8.4px;line-height:1;white-space:pre;color:#000;font-weight:normal;text-align:right;letter-spacing:-0.2px;-webkit-text-stroke:0.05px #000;">-</div>
<div style="position:absolute;right:499px;top:530.69px;font-size:8.4px;line-height:1;white-space:pre;color:#000;font-weight:normal;text-align:right;letter-spacing:-0.2px;-webkit-text-stroke:0.05px #000;">-</div>
<div style="position:absolute;right:499px;top:542.69px;font-size:8.4px;line-height:1;white-space:pre;color:#000;font-weight:normal;text-align:right;letter-spacing:-0.2px;-webkit-text-stroke:0.05px #000;">-</div>
<svg style="position:absolute;left:734px;top:553px" width="6" height="6"><path d="M0 0 L5.5 0 L0 5.5 Z" fill="#1a7f37"/></svg>
<div style="position:absolute;left:565.5px;width:400px;top:554.69px;font-size:8.4px;line-height:1;white-space:pre;color:#000;font-weight:normal;text-align:center;letter-spacing:-0.2px;-webkit-text-stroke:0.05px #000;">#VALUE!</div>
<svg style="position:absolute;left:734px;top:565px" width="6" height="6"><path d="M0 0 L5.5 0 L0 5.5 Z" fill="#1a7f37"/></svg>
<div style="position:absolute;left:565.5px;width:400px;top:566.69px;font-size:8.4px;line-height:1;white-space:pre;color:#000;font-weight:normal;text-align:center;letter-spacing:-0.2px;-webkit-text-stroke:0.05px #000;">#VALUE!</div>
<svg style="position:absolute;left:734px;top:577px" width="6" height="6"><path d="M0 0 L5.5 0 L0 5.5 Z" fill="#1a7f37"/></svg>
<div style="position:absolute;left:565.5px;width:400px;top:578.69px;font-size:8.4px;line-height:1;white-space:pre;color:#000;font-weight:normal;text-align:center;letter-spacing:-0.2px;-webkit-text-stroke:0.05px #000;">#VALUE!</div>
<div style="position:absolute;right:499px;top:590.69px;font-size:8.4px;line-height:1;white-space:pre;color:#000;font-weight:normal;text-align:right;letter-spacing:-0.2px;-webkit-text-stroke:0.05px #000;">-</div>
<div style="position:absolute;right:499px;top:602.69px;font-size:8.4px;line-height:1;white-space:pre;color:#000;font-weight:normal;text-align:right;letter-spacing:-0.2px;-webkit-text-stroke:0.05px #000;">-</div>
<div style="position:absolute;right:499px;top:614.69px;font-size:8.4px;line-height:1;white-space:pre;color:#000;font-weight:normal;text-align:right;letter-spacing:-0.2px;-webkit-text-stroke:0.05px #000;">-</div>
<svg style="position:absolute;left:734px;top:625px" width="6" height="6"><path d="M0 0 L5.5 0 L0 5.5 Z" fill="#1a7f37"/></svg>
<div style="position:absolute;left:565.5px;width:400px;top:626.69px;font-size:8.4px;line-height:1;white-space:pre;color:#000;font-weight:normal;text-align:center;letter-spacing:-0.2px;-webkit-text-stroke:0.05px #000;">#VALUE!</div>
<svg style="position:absolute;left:734px;top:637px" width="6" height="6"><path d="M0 0 L5.5 0 L0 5.5 Z" fill="#1a7f37"/></svg>
<div style="position:absolute;left:565.5px;width:400px;top:638.69px;font-size:8.4px;line-height:1;white-space:pre;color:#000;font-weight:normal;text-align:center;letter-spacing:-0.2px;-webkit-text-stroke:0.05px #000;">#VALUE!</div>
<svg style="position:absolute;left:734px;top:649px" width="6" height="6"><path d="M0 0 L5.5 0 L0 5.5 Z" fill="#1a7f37"/></svg>
<div style="position:absolute;left:565.5px;width:400px;top:650.69px;font-size:8.4px;line-height:1;white-space:pre;color:#000;font-weight:normal;text-align:center;letter-spacing:-0.2px;-webkit-text-stroke:0.05px #000;">#VALUE!</div>
<div style="position:absolute;right:499px;top:662.69px;font-size:8.4px;line-height:1;white-space:pre;color:#000;font-weight:normal;text-align:right;letter-spacing:-0.2px;-webkit-text-stroke:0.05px #000;">-</div>
<svg style="position:absolute;left:796px;top:214px" width="6" height="6"><path d="M0 0 L5.5 0 L0 5.5 Z" fill="#1a7f37"/></svg>
<div style="position:absolute;left:627.5px;width:400px;top:215.69px;font-size:8.4px;line-height:1;white-space:pre;color:#000;font-weight:normal;text-align:center;letter-spacing:-0.2px;-webkit-text-stroke:0.05px #000;">#VALUE!</div>
<div style="position:absolute;right:428px;top:227.69px;font-size:8.4px;line-height:1;white-space:pre;color:#000;font-weight:normal;text-align:right;letter-spacing:-0.2px;-webkit-text-stroke:0.05px #000;">40,826,052</div>
<div style="position:absolute;right:437px;top:239.69px;font-size:8.4px;line-height:1;white-space:pre;color:#000;font-weight:normal;text-align:right;letter-spacing:-0.2px;-webkit-text-stroke:0.05px #000;">-</div>
<div style="position:absolute;right:428px;top:251.69px;font-size:8.4px;line-height:1;white-space:pre;color:#000;font-weight:normal;text-align:right;letter-spacing:-0.2px;-webkit-text-stroke:0.05px #000;">1,462,265,911</div>
<div style="position:absolute;right:425px;top:263.69px;font-size:8.4px;line-height:1;white-space:pre;color:#000;font-weight:normal;text-align:right;letter-spacing:-0.2px;-webkit-text-stroke:0.05px #000;">(565,557,622)</div>
<svg style="position:absolute;left:796px;top:274px" width="6" height="6"><path d="M0 0 L5.5 0 L0 5.5 Z" fill="#1a7f37"/></svg>
<div style="position:absolute;left:627.5px;width:400px;top:275.69px;font-size:8.4px;line-height:1;white-space:pre;color:#000;font-weight:normal;text-align:center;letter-spacing:-0.2px;-webkit-text-stroke:0.05px #000;">#VALUE!</div>
<svg style="position:absolute;left:796px;top:286px" width="6" height="6"><path d="M0 0 L5.5 0 L0 5.5 Z" fill="#1a7f37"/></svg>
<div style="position:absolute;left:627.5px;width:400px;top:287.69px;font-size:8.4px;line-height:1;white-space:pre;color:#000;font-weight:normal;text-align:center;letter-spacing:-0.2px;-webkit-text-stroke:0.05px #000;">#VALUE!</div>
<svg style="position:absolute;left:796px;top:298px" width="6" height="6"><path d="M0 0 L5.5 0 L0 5.5 Z" fill="#1a7f37"/></svg>
<div style="position:absolute;left:627.5px;width:400px;top:299.69px;font-size:8.4px;line-height:1;white-space:pre;color:#000;font-weight:normal;text-align:center;letter-spacing:-0.2px;-webkit-text-stroke:0.05px #000;">#VALUE!</div>
<svg style="position:absolute;left:796px;top:310px" width="6" height="6"><path d="M0 0 L5.5 0 L0 5.5 Z" fill="#1a7f37"/></svg>
<div style="position:absolute;left:627.5px;width:400px;top:311.69px;font-size:8.4px;line-height:1;white-space:pre;color:#000;font-weight:normal;text-align:center;letter-spacing:-0.2px;-webkit-text-stroke:0.05px #000;">#VALUE!</div>
<svg style="position:absolute;left:796px;top:347px" width="6" height="6"><path d="M0 0 L5.5 0 L0 5.5 Z" fill="#1a7f37"/></svg>
<div style="position:absolute;left:627.5px;width:400px;top:348.69px;font-size:8.4px;line-height:1;white-space:pre;color:#000;font-weight:normal;text-align:center;letter-spacing:-0.2px;-webkit-text-stroke:0.05px #000;">#VALUE!</div>
<svg style="position:absolute;left:796px;top:359px" width="6" height="6"><path d="M0 0 L5.5 0 L0 5.5 Z" fill="#1a7f37"/></svg>
<div style="position:absolute;left:627.5px;width:400px;top:360.69px;font-size:8.4px;line-height:1;white-space:pre;color:#000;font-weight:normal;text-align:center;letter-spacing:-0.2px;-webkit-text-stroke:0.05px #000;">#VALUE!</div>
<svg style="position:absolute;left:796px;top:371px" width="6" height="6"><path d="M0 0 L5.5 0 L0 5.5 Z" fill="#1a7f37"/></svg>
<div style="position:absolute;left:627.5px;width:400px;top:372.69px;font-size:8.4px;line-height:1;white-space:pre;color:#000;font-weight:normal;text-align:center;letter-spacing:-0.2px;-webkit-text-stroke:0.05px #000;">#VALUE!</div>
<svg style="position:absolute;left:796px;top:383px" width="6" height="6"><path d="M0 0 L5.5 0 L0 5.5 Z" fill="#1a7f37"/></svg>
<div style="position:absolute;left:627.5px;width:400px;top:384.69px;font-size:8.4px;line-height:1;white-space:pre;color:#000;font-weight:normal;text-align:center;letter-spacing:-0.2px;-webkit-text-stroke:0.05px #000;">#VALUE!</div>
<svg style="position:absolute;left:796px;top:408px" width="6" height="6"><path d="M0 0 L5.5 0 L0 5.5 Z" fill="#1a7f37"/></svg>
<div style="position:absolute;left:627.5px;width:400px;top:409.69px;font-size:8.4px;line-height:1;white-space:pre;color:#000;font-weight:normal;text-align:center;letter-spacing:-0.2px;-webkit-text-stroke:0.05px #000;">#VALUE!</div>
<svg style="position:absolute;left:796px;top:456px" width="6" height="6"><path d="M0 0 L5.5 0 L0 5.5 Z" fill="#1a7f37"/></svg>
<div style="position:absolute;left:627.5px;width:400px;top:457.69px;font-size:8.4px;line-height:1;white-space:pre;color:#000;font-weight:normal;text-align:center;letter-spacing:-0.2px;-webkit-text-stroke:0.05px #000;">#VALUE!</div>
<svg style="position:absolute;left:796px;top:468px" width="6" height="6"><path d="M0 0 L5.5 0 L0 5.5 Z" fill="#1a7f37"/></svg>
<div style="position:absolute;left:627.5px;width:400px;top:469.69px;font-size:8.4px;line-height:1;white-space:pre;color:#000;font-weight:normal;text-align:center;letter-spacing:-0.2px;-webkit-text-stroke:0.05px #000;">#VALUE!</div>
<svg style="position:absolute;left:796px;top:480px" width="6" height="6"><path d="M0 0 L5.5 0 L0 5.5 Z" fill="#1a7f37"/></svg>
<div style="position:absolute;left:627.5px;width:400px;top:481.69px;font-size:8.4px;line-height:1;white-space:pre;color:#000;font-weight:normal;text-align:center;letter-spacing:-0.2px;-webkit-text-stroke:0.05px #000;">#VALUE!</div>
<svg style="position:absolute;left:796px;top:492px" width="6" height="6"><path d="M0 0 L5.5 0 L0 5.5 Z" fill="#1a7f37"/></svg>
<div style="position:absolute;left:627.5px;width:400px;top:493.69px;font-size:8.4px;line-height:1;white-space:pre;color:#000;font-weight:normal;text-align:center;letter-spacing:-0.2px;-webkit-text-stroke:0.05px #000;">#VALUE!</div>
<svg style="position:absolute;left:796px;top:504px" width="6" height="6"><path d="M0 0 L5.5 0 L0 5.5 Z" fill="#1a7f37"/></svg>
<div style="position:absolute;left:627.5px;width:400px;top:505.69px;font-size:8.4px;line-height:1;white-space:pre;color:#000;font-weight:normal;text-align:center;letter-spacing:-0.2px;-webkit-text-stroke:0.05px #000;">#VALUE!</div>
<div style="position:absolute;right:437px;top:518.69px;font-size:8.4px;line-height:1;white-space:pre;color:#000;font-weight:normal;text-align:right;letter-spacing:-0.2px;-webkit-text-stroke:0.05px #000;">-</div>
<div style="position:absolute;right:437px;top:530.69px;font-size:8.4px;line-height:1;white-space:pre;color:#000;font-weight:normal;text-align:right;letter-spacing:-0.2px;-webkit-text-stroke:0.05px #000;">-</div>
<div style="position:absolute;right:437px;top:542.69px;font-size:8.4px;line-height:1;white-space:pre;color:#000;font-weight:normal;text-align:right;letter-spacing:-0.2px;-webkit-text-stroke:0.05px #000;">-</div>
<svg style="position:absolute;left:796px;top:553px" width="6" height="6"><path d="M0 0 L5.5 0 L0 5.5 Z" fill="#1a7f37"/></svg>
<div style="position:absolute;left:627.5px;width:400px;top:554.69px;font-size:8.4px;line-height:1;white-space:pre;color:#000;font-weight:normal;text-align:center;letter-spacing:-0.2px;-webkit-text-stroke:0.05px #000;">#VALUE!</div>
<svg style="position:absolute;left:796px;top:565px" width="6" height="6"><path d="M0 0 L5.5 0 L0 5.5 Z" fill="#1a7f37"/></svg>
<div style="position:absolute;left:627.5px;width:400px;top:566.69px;font-size:8.4px;line-height:1;white-space:pre;color:#000;font-weight:normal;text-align:center;letter-spacing:-0.2px;-webkit-text-stroke:0.05px #000;">#VALUE!</div>
<svg style="position:absolute;left:796px;top:577px" width="6" height="6"><path d="M0 0 L5.5 0 L0 5.5 Z" fill="#1a7f37"/></svg>
<div style="position:absolute;left:627.5px;width:400px;top:578.69px;font-size:8.4px;line-height:1;white-space:pre;color:#000;font-weight:normal;text-align:center;letter-spacing:-0.2px;-webkit-text-stroke:0.05px #000;">#VALUE!</div>
<div style="position:absolute;right:437px;top:590.69px;font-size:8.4px;line-height:1;white-space:pre;color:#000;font-weight:normal;text-align:right;letter-spacing:-0.2px;-webkit-text-stroke:0.05px #000;">-</div>
<div style="position:absolute;right:437px;top:602.69px;font-size:8.4px;line-height:1;white-space:pre;color:#000;font-weight:normal;text-align:right;letter-spacing:-0.2px;-webkit-text-stroke:0.05px #000;">-</div>
<div style="position:absolute;right:437px;top:614.69px;font-size:8.4px;line-height:1;white-space:pre;color:#000;font-weight:normal;text-align:right;letter-spacing:-0.2px;-webkit-text-stroke:0.05px #000;">-</div>
<svg style="position:absolute;left:796px;top:625px" width="6" height="6"><path d="M0 0 L5.5 0 L0 5.5 Z" fill="#1a7f37"/></svg>
<div style="position:absolute;left:627.5px;width:400px;top:626.69px;font-size:8.4px;line-height:1;white-space:pre;color:#000;font-weight:normal;text-align:center;letter-spacing:-0.2px;-webkit-text-stroke:0.05px #000;">#VALUE!</div>
<svg style="position:absolute;left:796px;top:637px" width="6" height="6"><path d="M0 0 L5.5 0 L0 5.5 Z" fill="#1a7f37"/></svg>
<div style="position:absolute;left:627.5px;width:400px;top:638.69px;font-size:8.4px;line-height:1;white-space:pre;color:#000;font-weight:normal;text-align:center;letter-spacing:-0.2px;-webkit-text-stroke:0.05px #000;">#VALUE!</div>
<svg style="position:absolute;left:796px;top:649px" width="6" height="6"><path d="M0 0 L5.5 0 L0 5.5 Z" fill="#1a7f37"/></svg>
<div style="position:absolute;left:627.5px;width:400px;top:650.69px;font-size:8.4px;line-height:1;white-space:pre;color:#000;font-weight:normal;text-align:center;letter-spacing:-0.2px;-webkit-text-stroke:0.05px #000;">#VALUE!</div>
<div style="position:absolute;right:437px;top:662.69px;font-size:8.4px;line-height:1;white-space:pre;color:#000;font-weight:normal;text-align:right;letter-spacing:-0.2px;-webkit-text-stroke:0.05px #000;">-</div>
<svg style="position:absolute;left:858px;top:214px" width="6" height="6"><path d="M0 0 L5.5 0 L0 5.5 Z" fill="#1a7f37"/></svg>
<div style="position:absolute;left:689.5px;width:400px;top:215.69px;font-size:8.4px;line-height:1;white-space:pre;color:#000;font-weight:normal;text-align:center;letter-spacing:-0.2px;-webkit-text-stroke:0.05px #000;">#VALUE!</div>
<div style="position:absolute;right:366px;top:227.69px;font-size:8.4px;line-height:1;white-space:pre;color:#000;font-weight:normal;text-align:right;letter-spacing:-0.2px;-webkit-text-stroke:0.05px #000;">41,438,443</div>
<div style="position:absolute;right:375px;top:239.69px;font-size:8.4px;line-height:1;white-space:pre;color:#000;font-weight:normal;text-align:right;letter-spacing:-0.2px;-webkit-text-stroke:0.05px #000;">-</div>
<div style="position:absolute;right:366px;top:251.69px;font-size:8.4px;line-height:1;white-space:pre;color:#000;font-weight:normal;text-align:right;letter-spacing:-0.2px;-webkit-text-stroke:0.05px #000;">1,462,265,911</div>
<div style="position:absolute;right:363px;top:263.69px;font-size:8.4px;line-height:1;white-space:pre;color:#000;font-weight:normal;text-align:right;letter-spacing:-0.2px;-webkit-text-stroke:0.05px #000;">(663,042,016)</div>
<svg style="position:absolute;left:858px;top:274px" width="6" height="6"><path d="M0 0 L5.5 0 L0 5.5 Z" fill="#1a7f37"/></svg>
<div style="position:absolute;left:689.5px;width:400px;top:275.69px;font-size:8.4px;line-height:1;white-space:pre;color:#000;font-weight:normal;text-align:center;letter-spacing:-0.2px;-webkit-text-stroke:0.05px #000;">#VALUE!</div>
<svg style="position:absolute;left:858px;top:286px" width="6" height="6"><path d="M0 0 L5.5 0 L0 5.5 Z" fill="#1a7f37"/></svg>
<div style="position:absolute;left:689.5px;width:400px;top:287.69px;font-size:8.4px;line-height:1;white-space:pre;color:#000;font-weight:normal;text-align:center;letter-spacing:-0.2px;-webkit-text-stroke:0.05px #000;">#VALUE!</div>
<svg style="position:absolute;left:858px;top:298px" width="6" height="6"><path d="M0 0 L5.5 0 L0 5.5 Z" fill="#1a7f37"/></svg>
<div style="position:absolute;left:689.5px;width:400px;top:299.69px;font-size:8.4px;line-height:1;white-space:pre;color:#000;font-weight:normal;text-align:center;letter-spacing:-0.2px;-webkit-text-stroke:0.05px #000;">#VALUE!</div>
<svg style="position:absolute;left:858px;top:310px" width="6" height="6"><path d="M0 0 L5.5 0 L0 5.5 Z" fill="#1a7f37"/></svg>
<div style="position:absolute;left:689.5px;width:400px;top:311.69px;font-size:8.4px;line-height:1;white-space:pre;color:#000;font-weight:normal;text-align:center;letter-spacing:-0.2px;-webkit-text-stroke:0.05px #000;">#VALUE!</div>
<svg style="position:absolute;left:858px;top:347px" width="6" height="6"><path d="M0 0 L5.5 0 L0 5.5 Z" fill="#1a7f37"/></svg>
<div style="position:absolute;left:689.5px;width:400px;top:348.69px;font-size:8.4px;line-height:1;white-space:pre;color:#000;font-weight:normal;text-align:center;letter-spacing:-0.2px;-webkit-text-stroke:0.05px #000;">#VALUE!</div>
<svg style="position:absolute;left:858px;top:359px" width="6" height="6"><path d="M0 0 L5.5 0 L0 5.5 Z" fill="#1a7f37"/></svg>
<div style="position:absolute;left:689.5px;width:400px;top:360.69px;font-size:8.4px;line-height:1;white-space:pre;color:#000;font-weight:normal;text-align:center;letter-spacing:-0.2px;-webkit-text-stroke:0.05px #000;">#VALUE!</div>
<svg style="position:absolute;left:858px;top:371px" width="6" height="6"><path d="M0 0 L5.5 0 L0 5.5 Z" fill="#1a7f37"/></svg>
<div style="position:absolute;left:689.5px;width:400px;top:372.69px;font-size:8.4px;line-height:1;white-space:pre;color:#000;font-weight:normal;text-align:center;letter-spacing:-0.2px;-webkit-text-stroke:0.05px #000;">#VALUE!</div>
<svg style="position:absolute;left:858px;top:383px" width="6" height="6"><path d="M0 0 L5.5 0 L0 5.5 Z" fill="#1a7f37"/></svg>
<div style="position:absolute;left:689.5px;width:400px;top:384.69px;font-size:8.4px;line-height:1;white-space:pre;color:#000;font-weight:normal;text-align:center;letter-spacing:-0.2px;-webkit-text-stroke:0.05px #000;">#VALUE!</div>
<svg style="position:absolute;left:858px;top:408px" width="6" height="6"><path d="M0 0 L5.5 0 L0 5.5 Z" fill="#1a7f37"/></svg>
<div style="position:absolute;left:689.5px;width:400px;top:409.69px;font-size:8.4px;line-height:1;white-space:pre;color:#000;font-weight:normal;text-align:center;letter-spacing:-0.2px;-webkit-text-stroke:0.05px #000;">#VALUE!</div>
<svg style="position:absolute;left:858px;top:456px" width="6" height="6"><path d="M0 0 L5.5 0 L0 5.5 Z" fill="#1a7f37"/></svg>
<div style="position:absolute;left:689.5px;width:400px;top:457.69px;font-size:8.4px;line-height:1;white-space:pre;color:#000;font-weight:normal;text-align:center;letter-spacing:-0.2px;-webkit-text-stroke:0.05px #000;">#VALUE!</div>
<svg style="position:absolute;left:858px;top:468px" width="6" height="6"><path d="M0 0 L5.5 0 L0 5.5 Z" fill="#1a7f37"/></svg>
<div style="position:absolute;left:689.5px;width:400px;top:469.69px;font-size:8.4px;line-height:1;white-space:pre;color:#000;font-weight:normal;text-align:center;letter-spacing:-0.2px;-webkit-text-stroke:0.05px #000;">#VALUE!</div>
<svg style="position:absolute;left:858px;top:480px" width="6" height="6"><path d="M0 0 L5.5 0 L0 5.5 Z" fill="#1a7f37"/></svg>
<div style="position:absolute;left:689.5px;width:400px;top:481.69px;font-size:8.4px;line-height:1;white-space:pre;color:#000;font-weight:normal;text-align:center;letter-spacing:-0.2px;-webkit-text-stroke:0.05px #000;">#VALUE!</div>
<svg style="position:absolute;left:858px;top:492px" width="6" height="6"><path d="M0 0 L5.5 0 L0 5.5 Z" fill="#1a7f37"/></svg>
<div style="position:absolute;left:689.5px;width:400px;top:493.69px;font-size:8.4px;line-height:1;white-space:pre;color:#000;font-weight:normal;text-align:center;letter-spacing:-0.2px;-webkit-text-stroke:0.05px #000;">#VALUE!</div>
<svg style="position:absolute;left:858px;top:504px" width="6" height="6"><path d="M0 0 L5.5 0 L0 5.5 Z" fill="#1a7f37"/></svg>
<div style="position:absolute;left:689.5px;width:400px;top:505.69px;font-size:8.4px;line-height:1;white-space:pre;color:#000;font-weight:normal;text-align:center;letter-spacing:-0.2px;-webkit-text-stroke:0.05px #000;">#VALUE!</div>
<div style="position:absolute;right:375px;top:518.69px;font-size:8.4px;line-height:1;white-space:pre;color:#000;font-weight:normal;text-align:right;letter-spacing:-0.2px;-webkit-text-stroke:0.05px #000;">-</div>
<div style="position:absolute;right:375px;top:530.69px;font-size:8.4px;line-height:1;white-space:pre;color:#000;font-weight:normal;text-align:right;letter-spacing:-0.2px;-webkit-text-stroke:0.05px #000;">-</div>
<div style="position:absolute;right:375px;top:542.69px;font-size:8.4px;line-height:1;white-space:pre;color:#000;font-weight:normal;text-align:right;letter-spacing:-0.2px;-webkit-text-stroke:0.05px #000;">-</div>
<svg style="position:absolute;left:858px;top:553px" width="6" height="6"><path d="M0 0 L5.5 0 L0 5.5 Z" fill="#1a7f37"/></svg>
<div style="position:absolute;left:689.5px;width:400px;top:554.69px;font-size:8.4px;line-height:1;white-space:pre;color:#000;font-weight:normal;text-align:center;letter-spacing:-0.2px;-webkit-text-stroke:0.05px #000;">#VALUE!</div>
<svg style="position:absolute;left:858px;top:565px" width="6" height="6"><path d="M0 0 L5.5 0 L0 5.5 Z" fill="#1a7f37"/></svg>
<div style="position:absolute;left:689.5px;width:400px;top:566.69px;font-size:8.4px;line-height:1;white-space:pre;color:#000;font-weight:normal;text-align:center;letter-spacing:-0.2px;-webkit-text-stroke:0.05px #000;">#VALUE!</div>
<svg style="position:absolute;left:858px;top:577px" width="6" height="6"><path d="M0 0 L5.5 0 L0 5.5 Z" fill="#1a7f37"/></svg>
<div style="position:absolute;left:689.5px;width:400px;top:578.69px;font-size:8.4px;line-height:1;white-space:pre;color:#000;font-weight:normal;text-align:center;letter-spacing:-0.2px;-webkit-text-stroke:0.05px #000;">#VALUE!</div>
<div style="position:absolute;right:375px;top:590.69px;font-size:8.4px;line-height:1;white-space:pre;color:#000;font-weight:normal;text-align:right;letter-spacing:-0.2px;-webkit-text-stroke:0.05px #000;">-</div>
<div style="position:absolute;right:375px;top:602.69px;font-size:8.4px;line-height:1;white-space:pre;color:#000;font-weight:normal;text-align:right;letter-spacing:-0.2px;-webkit-text-stroke:0.05px #000;">-</div>
<div style="position:absolute;right:375px;top:614.69px;font-size:8.4px;line-height:1;white-space:pre;color:#000;font-weight:normal;text-align:right;letter-spacing:-0.2px;-webkit-text-stroke:0.05px #000;">-</div>
<svg style="position:absolute;left:858px;top:625px" width="6" height="6"><path d="M0 0 L5.5 0 L0 5.5 Z" fill="#1a7f37"/></svg>
<div style="position:absolute;left:689.5px;width:400px;top:626.69px;font-size:8.4px;line-height:1;white-space:pre;color:#000;font-weight:normal;text-align:center;letter-spacing:-0.2px;-webkit-text-stroke:0.05px #000;">#VALUE!</div>
<svg style="position:absolute;left:858px;top:637px" width="6" height="6"><path d="M0 0 L5.5 0 L0 5.5 Z" fill="#1a7f37"/></svg>
<div style="position:absolute;left:689.5px;width:400px;top:638.69px;font-size:8.4px;line-height:1;white-space:pre;color:#000;font-weight:normal;text-align:center;letter-spacing:-0.2px;-webkit-text-stroke:0.05px #000;">#VALUE!</div>
<svg style="position:absolute;left:858px;top:649px" width="6" height="6"><path d="M0 0 L5.5 0 L0 5.5 Z" fill="#1a7f37"/></svg>
<div style="position:absolute;left:689.5px;width:400px;top:650.69px;font-size:8.4px;line-height:1;white-space:pre;color:#000;font-weight:normal;text-align:center;letter-spacing:-0.2px;-webkit-text-stroke:0.05px #000;">#VALUE!</div>
<div style="position:absolute;right:375px;top:662.69px;font-size:8.4px;line-height:1;white-space:pre;color:#000;font-weight:normal;text-align:right;letter-spacing:-0.2px;-webkit-text-stroke:0.05px #000;">-</div>
<svg style="position:absolute;left:920px;top:214px" width="6" height="6"><path d="M0 0 L5.5 0 L0 5.5 Z" fill="#1a7f37"/></svg>
<div style="position:absolute;left:751.5px;width:400px;top:215.69px;font-size:8.4px;line-height:1;white-space:pre;color:#000;font-weight:normal;text-align:center;letter-spacing:-0.2px;-webkit-text-stroke:0.05px #000;">#VALUE!</div>
<div style="position:absolute;right:304px;top:227.69px;font-size:8.4px;line-height:1;white-space:pre;color:#000;font-weight:normal;text-align:right;letter-spacing:-0.2px;-webkit-text-stroke:0.05px #000;">42,060,020</div>
<div style="position:absolute;right:313px;top:239.69px;font-size:8.4px;line-height:1;white-space:pre;color:#000;font-weight:normal;text-align:right;letter-spacing:-0.2px;-webkit-text-stroke:0.05px #000;">-</div>
<div style="position:absolute;right:304px;top:251.69px;font-size:8.4px;line-height:1;white-space:pre;color:#000;font-weight:normal;text-align:right;letter-spacing:-0.2px;-webkit-text-stroke:0.05px #000;">1,462,265,911</div>
<div style="position:absolute;right:301px;top:263.69px;font-size:8.4px;line-height:1;white-space:pre;color:#000;font-weight:normal;text-align:right;letter-spacing:-0.2px;-webkit-text-stroke:0.05px #000;">(760,526,410)</div>
<svg style="position:absolute;left:920px;top:274px" width="6" height="6"><path d="M0 0 L5.5 0 L0 5.5 Z" fill="#1a7f37"/></svg>
<div style="position:absolute;left:751.5px;width:400px;top:275.69px;font-size:8.4px;line-height:1;white-space:pre;color:#000;font-weight:normal;text-align:center;letter-spacing:-0.2px;-webkit-text-stroke:0.05px #000;">#VALUE!</div>
<svg style="position:absolute;left:920px;top:286px" width="6" height="6"><path d="M0 0 L5.5 0 L0 5.5 Z" fill="#1a7f37"/></svg>
<div style="position:absolute;left:751.5px;width:400px;top:287.69px;font-size:8.4px;line-height:1;white-space:pre;color:#000;font-weight:normal;text-align:center;letter-spacing:-0.2px;-webkit-text-stroke:0.05px #000;">#VALUE!</div>
<svg style="position:absolute;left:920px;top:298px" width="6" height="6"><path d="M0 0 L5.5 0 L0 5.5 Z" fill="#1a7f37"/></svg>
<div style="position:absolute;left:751.5px;width:400px;top:299.69px;font-size:8.4px;line-height:1;white-space:pre;color:#000;font-weight:normal;text-align:center;letter-spacing:-0.2px;-webkit-text-stroke:0.05px #000;">#VALUE!</div>
<svg style="position:absolute;left:920px;top:310px" width="6" height="6"><path d="M0 0 L5.5 0 L0 5.5 Z" fill="#1a7f37"/></svg>
<div style="position:absolute;left:751.5px;width:400px;top:311.69px;font-size:8.4px;line-height:1;white-space:pre;color:#000;font-weight:normal;text-align:center;letter-spacing:-0.2px;-webkit-text-stroke:0.05px #000;">#VALUE!</div>
<svg style="position:absolute;left:920px;top:347px" width="6" height="6"><path d="M0 0 L5.5 0 L0 5.5 Z" fill="#1a7f37"/></svg>
<div style="position:absolute;left:751.5px;width:400px;top:348.69px;font-size:8.4px;line-height:1;white-space:pre;color:#000;font-weight:normal;text-align:center;letter-spacing:-0.2px;-webkit-text-stroke:0.05px #000;">#VALUE!</div>
<svg style="position:absolute;left:920px;top:359px" width="6" height="6"><path d="M0 0 L5.5 0 L0 5.5 Z" fill="#1a7f37"/></svg>
<div style="position:absolute;left:751.5px;width:400px;top:360.69px;font-size:8.4px;line-height:1;white-space:pre;color:#000;font-weight:normal;text-align:center;letter-spacing:-0.2px;-webkit-text-stroke:0.05px #000;">#VALUE!</div>
<svg style="position:absolute;left:920px;top:371px" width="6" height="6"><path d="M0 0 L5.5 0 L0 5.5 Z" fill="#1a7f37"/></svg>
<div style="position:absolute;left:751.5px;width:400px;top:372.69px;font-size:8.4px;line-height:1;white-space:pre;color:#000;font-weight:normal;text-align:center;letter-spacing:-0.2px;-webkit-text-stroke:0.05px #000;">#VALUE!</div>
<svg style="position:absolute;left:920px;top:383px" width="6" height="6"><path d="M0 0 L5.5 0 L0 5.5 Z" fill="#1a7f37"/></svg>
<div style="position:absolute;left:751.5px;width:400px;top:384.69px;font-size:8.4px;line-height:1;white-space:pre;color:#000;font-weight:normal;text-align:center;letter-spacing:-0.2px;-webkit-text-stroke:0.05px #000;">#VALUE!</div>
<svg style="position:absolute;left:920px;top:408px" width="6" height="6"><path d="M0 0 L5.5 0 L0 5.5 Z" fill="#1a7f37"/></svg>
<div style="position:absolute;left:751.5px;width:400px;top:409.69px;font-size:8.4px;line-height:1;white-space:pre;color:#000;font-weight:normal;text-align:center;letter-spacing:-0.2px;-webkit-text-stroke:0.05px #000;">#VALUE!</div>
<svg style="position:absolute;left:920px;top:456px" width="6" height="6"><path d="M0 0 L5.5 0 L0 5.5 Z" fill="#1a7f37"/></svg>
<div style="position:absolute;left:751.5px;width:400px;top:457.69px;font-size:8.4px;line-height:1;white-space:pre;color:#000;font-weight:normal;text-align:center;letter-spacing:-0.2px;-webkit-text-stroke:0.05px #000;">#VALUE!</div>
<svg style="position:absolute;left:920px;top:468px" width="6" height="6"><path d="M0 0 L5.5 0 L0 5.5 Z" fill="#1a7f37"/></svg>
<div style="position:absolute;left:751.5px;width:400px;top:469.69px;font-size:8.4px;line-height:1;white-space:pre;color:#000;font-weight:normal;text-align:center;letter-spacing:-0.2px;-webkit-text-stroke:0.05px #000;">#VALUE!</div>
<svg style="position:absolute;left:920px;top:480px" width="6" height="6"><path d="M0 0 L5.5 0 L0 5.5 Z" fill="#1a7f37"/></svg>
<div style="position:absolute;left:751.5px;width:400px;top:481.69px;font-size:8.4px;line-height:1;white-space:pre;color:#000;font-weight:normal;text-align:center;letter-spacing:-0.2px;-webkit-text-stroke:0.05px #000;">#VALUE!</div>
<svg style="position:absolute;left:920px;top:492px" width="6" height="6"><path d="M0 0 L5.5 0 L0 5.5 Z" fill="#1a7f37"/></svg>
<div style="position:absolute;left:751.5px;width:400px;top:493.69px;font-size:8.4px;line-height:1;white-space:pre;color:#000;font-weight:normal;text-align:center;letter-spacing:-0.2px;-webkit-text-stroke:0.05px #000;">#VALUE!</div>
<svg style="position:absolute;left:920px;top:504px" width="6" height="6"><path d="M0 0 L5.5 0 L0 5.5 Z" fill="#1a7f37"/></svg>
<div style="position:absolute;left:751.5px;width:400px;top:505.69px;font-size:8.4px;line-height:1;white-space:pre;color:#000;font-weight:normal;text-align:center;letter-spacing:-0.2px;-webkit-text-stroke:0.05px #000;">#VALUE!</div>
<div style="position:absolute;right:313px;top:518.69px;font-size:8.4px;line-height:1;white-space:pre;color:#000;font-weight:normal;text-align:right;letter-spacing:-0.2px;-webkit-text-stroke:0.05px #000;">-</div>
<div style="position:absolute;right:313px;top:530.69px;font-size:8.4px;line-height:1;white-space:pre;color:#000;font-weight:normal;text-align:right;letter-spacing:-0.2px;-webkit-text-stroke:0.05px #000;">-</div>
<div style="position:absolute;right:313px;top:542.69px;font-size:8.4px;line-height:1;white-space:pre;color:#000;font-weight:normal;text-align:right;letter-spacing:-0.2px;-webkit-text-stroke:0.05px #000;">-</div>
<svg style="position:absolute;left:920px;top:553px" width="6" height="6"><path d="M0 0 L5.5 0 L0 5.5 Z" fill="#1a7f37"/></svg>
<div style="position:absolute;left:751.5px;width:400px;top:554.69px;font-size:8.4px;line-height:1;white-space:pre;color:#000;font-weight:normal;text-align:center;letter-spacing:-0.2px;-webkit-text-stroke:0.05px #000;">#VALUE!</div>
<svg style="position:absolute;left:920px;top:565px" width="6" height="6"><path d="M0 0 L5.5 0 L0 5.5 Z" fill="#1a7f37"/></svg>
<div style="position:absolute;left:751.5px;width:400px;top:566.69px;font-size:8.4px;line-height:1;white-space:pre;color:#000;font-weight:normal;text-align:center;letter-spacing:-0.2px;-webkit-text-stroke:0.05px #000;">#VALUE!</div>
<svg style="position:absolute;left:920px;top:577px" width="6" height="6"><path d="M0 0 L5.5 0 L0 5.5 Z" fill="#1a7f37"/></svg>
<div style="position:absolute;left:751.5px;width:400px;top:578.69px;font-size:8.4px;line-height:1;white-space:pre;color:#000;font-weight:normal;text-align:center;letter-spacing:-0.2px;-webkit-text-stroke:0.05px #000;">#VALUE!</div>
<div style="position:absolute;right:313px;top:590.69px;font-size:8.4px;line-height:1;white-space:pre;color:#000;font-weight:normal;text-align:right;letter-spacing:-0.2px;-webkit-text-stroke:0.05px #000;">-</div>
<div style="position:absolute;right:313px;top:602.69px;font-size:8.4px;line-height:1;white-space:pre;color:#000;font-weight:normal;text-align:right;letter-spacing:-0.2px;-webkit-text-stroke:0.05px #000;">-</div>
<div style="position:absolute;right:313px;top:614.69px;font-size:8.4px;line-height:1;white-space:pre;color:#000;font-weight:normal;text-align:right;letter-spacing:-0.2px;-webkit-text-stroke:0.05px #000;">-</div>
<svg style="position:absolute;left:920px;top:625px" width="6" height="6"><path d="M0 0 L5.5 0 L0 5.5 Z" fill="#1a7f37"/></svg>
<div style="position:absolute;left:751.5px;width:400px;top:626.69px;font-size:8.4px;line-height:1;white-space:pre;color:#000;font-weight:normal;text-align:center;letter-spacing:-0.2px;-webkit-text-stroke:0.05px #000;">#VALUE!</div>
<svg style="position:absolute;left:920px;top:637px" width="6" height="6"><path d="M0 0 L5.5 0 L0 5.5 Z" fill="#1a7f37"/></svg>
<div style="position:absolute;left:751.5px;width:400px;top:638.69px;font-size:8.4px;line-height:1;white-space:pre;color:#000;font-weight:normal;text-align:center;letter-spacing:-0.2px;-webkit-text-stroke:0.05px #000;">#VALUE!</div>
<svg style="position:absolute;left:920px;top:649px" width="6" height="6"><path d="M0 0 L5.5 0 L0 5.5 Z" fill="#1a7f37"/></svg>
<div style="position:absolute;left:751.5px;width:400px;top:650.69px;font-size:8.4px;line-height:1;white-space:pre;color:#000;font-weight:normal;text-align:center;letter-spacing:-0.2px;-webkit-text-stroke:0.05px #000;">#VALUE!</div>
<div style="position:absolute;right:313px;top:662.69px;font-size:8.4px;line-height:1;white-space:pre;color:#000;font-weight:normal;text-align:right;letter-spacing:-0.2px;-webkit-text-stroke:0.05px #000;">-</div>
<svg style="position:absolute;left:982px;top:214px" width="6" height="6"><path d="M0 0 L5.5 0 L0 5.5 Z" fill="#1a7f37"/></svg>
<div style="position:absolute;left:813.5px;width:400px;top:215.69px;font-size:8.4px;line-height:1;white-space:pre;color:#000;font-weight:normal;text-align:center;letter-spacing:-0.2px;-webkit-text-stroke:0.05px #000;">#VALUE!</div>
<div style="position:absolute;right:242px;top:227.69px;font-size:8.4px;line-height:1;white-space:pre;color:#000;font-weight:normal;text-align:right;letter-spacing:-0.2px;-webkit-text-stroke:0.05px #000;">42,690,920</div>
<div style="position:absolute;right:251px;top:239.69px;font-size:8.4px;line-height:1;white-space:pre;color:#000;font-weight:normal;text-align:right;letter-spacing:-0.2px;-webkit-text-stroke:0.05px #000;">-</div>
<div style="position:absolute;right:242px;top:251.69px;font-size:8.4px;line-height:1;white-space:pre;color:#000;font-weight:normal;text-align:right;letter-spacing:-0.2px;-webkit-text-stroke:0.05px #000;">1,462,265,911</div>
<div style="position:absolute;right:239px;top:263.69px;font-size:8.4px;line-height:1;white-space:pre;color:#000;font-weight:normal;text-align:right;letter-spacing:-0.2px;-webkit-text-stroke:0.05px #000;">(858,010,804)</div>
<svg style="position:absolute;left:982px;top:274px" width="6" height="6"><path d="M0 0 L5.5 0 L0 5.5 Z" fill="#1a7f37"/></svg>
<div style="position:absolute;left:813.5px;width:400px;top:275.69px;font-size:8.4px;line-height:1;white-space:pre;color:#000;font-weight:normal;text-align:center;letter-spacing:-0.2px;-webkit-text-stroke:0.05px #000;">#VALUE!</div>
<svg style="position:absolute;left:982px;top:286px" width="6" height="6"><path d="M0 0 L5.5 0 L0 5.5 Z" fill="#1a7f37"/></svg>
<div style="position:absolute;left:813.5px;width:400px;top:287.69px;font-size:8.4px;line-height:1;white-space:pre;color:#000;font-weight:normal;text-align:center;letter-spacing:-0.2px;-webkit-text-stroke:0.05px #000;">#VALUE!</div>
<svg style="position:absolute;left:982px;top:298px" width="6" height="6"><path d="M0 0 L5.5 0 L0 5.5 Z" fill="#1a7f37"/></svg>
<div style="position:absolute;left:813.5px;width:400px;top:299.69px;font-size:8.4px;line-height:1;white-space:pre;color:#000;font-weight:normal;text-align:center;letter-spacing:-0.2px;-webkit-text-stroke:0.05px #000;">#VALUE!</div>
<svg style="position:absolute;left:982px;top:310px" width="6" height="6"><path d="M0 0 L5.5 0 L0 5.5 Z" fill="#1a7f37"/></svg>
<div style="position:absolute;left:813.5px;width:400px;top:311.69px;font-size:8.4px;line-height:1;white-space:pre;color:#000;font-weight:normal;text-align:center;letter-spacing:-0.2px;-webkit-text-stroke:0.05px #000;">#VALUE!</div>
<svg style="position:absolute;left:982px;top:347px" width="6" height="6"><path d="M0 0 L5.5 0 L0 5.5 Z" fill="#1a7f37"/></svg>
<div style="position:absolute;left:813.5px;width:400px;top:348.69px;font-size:8.4px;line-height:1;white-space:pre;color:#000;font-weight:normal;text-align:center;letter-spacing:-0.2px;-webkit-text-stroke:0.05px #000;">#VALUE!</div>
<svg style="position:absolute;left:982px;top:359px" width="6" height="6"><path d="M0 0 L5.5 0 L0 5.5 Z" fill="#1a7f37"/></svg>
<div style="position:absolute;left:813.5px;width:400px;top:360.69px;font-size:8.4px;line-height:1;white-space:pre;color:#000;font-weight:normal;text-align:center;letter-spacing:-0.2px;-webkit-text-stroke:0.05px #000;">#VALUE!</div>
<svg style="position:absolute;left:982px;top:371px" width="6" height="6"><path d="M0 0 L5.5 0 L0 5.5 Z" fill="#1a7f37"/></svg>
<div style="position:absolute;left:813.5px;width:400px;top:372.69px;font-size:8.4px;line-height:1;white-space:pre;color:#000;font-weight:normal;text-align:center;letter-spacing:-0.2px;-webkit-text-stroke:0.05px #000;">#VALUE!</div>
<svg style="position:absolute;left:982px;top:383px" width="6" height="6"><path d="M0 0 L5.5 0 L0 5.5 Z" fill="#1a7f37"/></svg>
<div style="position:absolute;left:813.5px;width:400px;top:384.69px;font-size:8.4px;line-height:1;white-space:pre;color:#000;font-weight:normal;text-align:center;letter-spacing:-0.2px;-webkit-text-stroke:0.05px #000;">#VALUE!</div>
<svg style="position:absolute;left:982px;top:408px" width="6" height="6"><path d="M0 0 L5.5 0 L0 5.5 Z" fill="#1a7f37"/></svg>
<div style="position:absolute;left:813.5px;width:400px;top:409.69px;font-size:8.4px;line-height:1;white-space:pre;color:#000;font-weight:normal;text-align:center;letter-spacing:-0.2px;-webkit-text-stroke:0.05px #000;">#VALUE!</div>
<svg style="position:absolute;left:982px;top:456px" width="6" height="6"><path d="M0 0 L5.5 0 L0 5.5 Z" fill="#1a7f37"/></svg>
<div style="position:absolute;left:813.5px;width:400px;top:457.69px;font-size:8.4px;line-height:1;white-space:pre;color:#000;font-weight:normal;text-align:center;letter-spacing:-0.2px;-webkit-text-stroke:0.05px #000;">#VALUE!</div>
<svg style="position:absolute;left:982px;top:468px" width="6" height="6"><path d="M0 0 L5.5 0 L0 5.5 Z" fill="#1a7f37"/></svg>
<div style="position:absolute;left:813.5px;width:400px;top:469.69px;font-size:8.4px;line-height:1;white-space:pre;color:#000;font-weight:normal;text-align:center;letter-spacing:-0.2px;-webkit-text-stroke:0.05px #000;">#VALUE!</div>
<svg style="position:absolute;left:982px;top:480px" width="6" height="6"><path d="M0 0 L5.5 0 L0 5.5 Z" fill="#1a7f37"/></svg>
<div style="position:absolute;left:813.5px;width:400px;top:481.69px;font-size:8.4px;line-height:1;white-space:pre;color:#000;font-weight:normal;text-align:center;letter-spacing:-0.2px;-webkit-text-stroke:0.05px #000;">#VALUE!</div>
<svg style="position:absolute;left:982px;top:492px" width="6" height="6"><path d="M0 0 L5.5 0 L0 5.5 Z" fill="#1a7f37"/></svg>
<div style="position:absolute;left:813.5px;width:400px;top:493.69px;font-size:8.4px;line-height:1;white-space:pre;color:#000;font-weight:normal;text-align:center;letter-spacing:-0.2px;-webkit-text-stroke:0.05px #000;">#VALUE!</div>
<svg style="position:absolute;left:982px;top:504px" width="6" height="6"><path d="M0 0 L5.5 0 L0 5.5 Z" fill="#1a7f37"/></svg>
<div style="position:absolute;left:813.5px;width:400px;top:505.69px;font-size:8.4px;line-height:1;white-space:pre;color:#000;font-weight:normal;text-align:center;letter-spacing:-0.2px;-webkit-text-stroke:0.05px #000;">#VALUE!</div>
<div style="position:absolute;right:251px;top:518.69px;font-size:8.4px;line-height:1;white-space:pre;color:#000;font-weight:normal;text-align:right;letter-spacing:-0.2px;-webkit-text-stroke:0.05px #000;">-</div>
<div style="position:absolute;right:251px;top:530.69px;font-size:8.4px;line-height:1;white-space:pre;color:#000;font-weight:normal;text-align:right;letter-spacing:-0.2px;-webkit-text-stroke:0.05px #000;">-</div>
<div style="position:absolute;right:251px;top:542.69px;font-size:8.4px;line-height:1;white-space:pre;color:#000;font-weight:normal;text-align:right;letter-spacing:-0.2px;-webkit-text-stroke:0.05px #000;">-</div>
<svg style="position:absolute;left:982px;top:553px" width="6" height="6"><path d="M0 0 L5.5 0 L0 5.5 Z" fill="#1a7f37"/></svg>
<div style="position:absolute;left:813.5px;width:400px;top:554.69px;font-size:8.4px;line-height:1;white-space:pre;color:#000;font-weight:normal;text-align:center;letter-spacing:-0.2px;-webkit-text-stroke:0.05px #000;">#VALUE!</div>
<svg style="position:absolute;left:982px;top:565px" width="6" height="6"><path d="M0 0 L5.5 0 L0 5.5 Z" fill="#1a7f37"/></svg>
<div style="position:absolute;left:813.5px;width:400px;top:566.69px;font-size:8.4px;line-height:1;white-space:pre;color:#000;font-weight:normal;text-align:center;letter-spacing:-0.2px;-webkit-text-stroke:0.05px #000;">#VALUE!</div>
<svg style="position:absolute;left:982px;top:577px" width="6" height="6"><path d="M0 0 L5.5 0 L0 5.5 Z" fill="#1a7f37"/></svg>
<div style="position:absolute;left:813.5px;width:400px;top:578.69px;font-size:8.4px;line-height:1;white-space:pre;color:#000;font-weight:normal;text-align:center;letter-spacing:-0.2px;-webkit-text-stroke:0.05px #000;">#VALUE!</div>
<div style="position:absolute;right:251px;top:590.69px;font-size:8.4px;line-height:1;white-space:pre;color:#000;font-weight:normal;text-align:right;letter-spacing:-0.2px;-webkit-text-stroke:0.05px #000;">-</div>
<div style="position:absolute;right:251px;top:602.69px;font-size:8.4px;line-height:1;white-space:pre;color:#000;font-weight:normal;text-align:right;letter-spacing:-0.2px;-webkit-text-stroke:0.05px #000;">-</div>
<div style="position:absolute;right:251px;top:614.69px;font-size:8.4px;line-height:1;white-space:pre;color:#000;font-weight:normal;text-align:right;letter-spacing:-0.2px;-webkit-text-stroke:0.05px #000;">-</div>
<svg style="position:absolute;left:982px;top:625px" width="6" height="6"><path d="M0 0 L5.5 0 L0 5.5 Z" fill="#1a7f37"/></svg>
<div style="position:absolute;left:813.5px;width:400px;top:626.69px;font-size:8.4px;line-height:1;white-space:pre;color:#000;font-weight:normal;text-align:center;letter-spacing:-0.2px;-webkit-text-stroke:0.05px #000;">#VALUE!</div>
<svg style="position:absolute;left:982px;top:637px" width="6" height="6"><path d="M0 0 L5.5 0 L0 5.5 Z" fill="#1a7f37"/></svg>
<div style="position:absolute;left:813.5px;width:400px;top:638.69px;font-size:8.4px;line-height:1;white-space:pre;color:#000;font-weight:normal;text-align:center;letter-spacing:-0.2px;-webkit-text-stroke:0.05px #000;">#VALUE!</div>
<svg style="position:absolute;left:982px;top:649px" width="6" height="6"><path d="M0 0 L5.5 0 L0 5.5 Z" fill="#1a7f37"/></svg>
<div style="position:absolute;left:813.5px;width:400px;top:650.69px;font-size:8.4px;line-height:1;white-space:pre;color:#000;font-weight:normal;text-align:center;letter-spacing:-0.2px;-webkit-text-stroke:0.05px #000;">#VALUE!</div>
<div style="position:absolute;right:251px;top:662.69px;font-size:8.4px;line-height:1;white-space:pre;color:#000;font-weight:normal;text-align:right;letter-spacing:-0.2px;-webkit-text-stroke:0.05px #000;">-</div>
<svg style="position:absolute;left:1044px;top:214px" width="6" height="6"><path d="M0 0 L5.5 0 L0 5.5 Z" fill="#1a7f37"/></svg>
<div style="position:absolute;left:875.5px;width:400px;top:215.69px;font-size:8.4px;line-height:1;white-space:pre;color:#000;font-weight:normal;text-align:center;letter-spacing:-0.2px;-webkit-text-stroke:0.05px #000;">#VALUE!</div>
<div style="position:absolute;right:180px;top:227.69px;font-size:8.4px;line-height:1;white-space:pre;color:#000;font-weight:normal;text-align:right;letter-spacing:-0.2px;-webkit-text-stroke:0.05px #000;">43,331,284</div>
<div style="position:absolute;right:189px;top:239.69px;font-size:8.4px;line-height:1;white-space:pre;color:#000;font-weight:normal;text-align:right;letter-spacing:-0.2px;-webkit-text-stroke:0.05px #000;">-</div>
<div style="position:absolute;right:180px;top:251.69px;font-size:8.4px;line-height:1;white-space:pre;color:#000;font-weight:normal;text-align:right;letter-spacing:-0.2px;-webkit-text-stroke:0.05px #000;">1,462,265,911</div>
<div style="position:absolute;right:177px;top:263.69px;font-size:8.4px;line-height:1;white-space:pre;color:#000;font-weight:normal;text-align:right;letter-spacing:-0.2px;-webkit-text-stroke:0.05px #000;">(955,495,198)</div>
<svg style="position:absolute;left:1044px;top:274px" width="6" height="6"><path d="M0 0 L5.5 0 L0 5.5 Z" fill="#1a7f37"/></svg>
<div style="position:absolute;left:875.5px;width:400px;top:275.69px;font-size:8.4px;line-height:1;white-space:pre;color:#000;font-weight:normal;text-align:center;letter-spacing:-0.2px;-webkit-text-stroke:0.05px #000;">#VALUE!</div>
<svg style="position:absolute;left:1044px;top:286px" width="6" height="6"><path d="M0 0 L5.5 0 L0 5.5 Z" fill="#1a7f37"/></svg>
<div style="position:absolute;left:875.5px;width:400px;top:287.69px;font-size:8.4px;line-height:1;white-space:pre;color:#000;font-weight:normal;text-align:center;letter-spacing:-0.2px;-webkit-text-stroke:0.05px #000;">#VALUE!</div>
<svg style="position:absolute;left:1044px;top:298px" width="6" height="6"><path d="M0 0 L5.5 0 L0 5.5 Z" fill="#1a7f37"/></svg>
<div style="position:absolute;left:875.5px;width:400px;top:299.69px;font-size:8.4px;line-height:1;white-space:pre;color:#000;font-weight:normal;text-align:center;letter-spacing:-0.2px;-webkit-text-stroke:0.05px #000;">#VALUE!</div>
<svg style="position:absolute;left:1044px;top:310px" width="6" height="6"><path d="M0 0 L5.5 0 L0 5.5 Z" fill="#1a7f37"/></svg>
<div style="position:absolute;left:875.5px;width:400px;top:311.69px;font-size:8.4px;line-height:1;white-space:pre;color:#000;font-weight:normal;text-align:center;letter-spacing:-0.2px;-webkit-text-stroke:0.05px #000;">#VALUE!</div>
<svg style="position:absolute;left:1044px;top:347px" width="6" height="6"><path d="M0 0 L5.5 0 L0 5.5 Z" fill="#1a7f37"/></svg>
<div style="position:absolute;left:875.5px;width:400px;top:348.69px;font-size:8.4px;line-height:1;white-space:pre;color:#000;font-weight:normal;text-align:center;letter-spacing:-0.2px;-webkit-text-stroke:0.05px #000;">#VALUE!</div>
<svg style="position:absolute;left:1044px;top:359px" width="6" height="6"><path d="M0 0 L5.5 0 L0 5.5 Z" fill="#1a7f37"/></svg>
<div style="position:absolute;left:875.5px;width:400px;top:360.69px;font-size:8.4px;line-height:1;white-space:pre;color:#000;font-weight:normal;text-align:center;letter-spacing:-0.2px;-webkit-text-stroke:0.05px #000;">#VALUE!</div>
<svg style="position:absolute;left:1044px;top:371px" width="6" height="6"><path d="M0 0 L5.5 0 L0 5.5 Z" fill="#1a7f37"/></svg>
<div style="position:absolute;left:875.5px;width:400px;top:372.69px;font-size:8.4px;line-height:1;white-space:pre;color:#000;font-weight:normal;text-align:center;letter-spacing:-0.2px;-webkit-text-stroke:0.05px #000;">#VALUE!</div>
<svg style="position:absolute;left:1044px;top:383px" width="6" height="6"><path d="M0 0 L5.5 0 L0 5.5 Z" fill="#1a7f37"/></svg>
<div style="position:absolute;left:875.5px;width:400px;top:384.69px;font-size:8.4px;line-height:1;white-space:pre;color:#000;font-weight:normal;text-align:center;letter-spacing:-0.2px;-webkit-text-stroke:0.05px #000;">#VALUE!</div>
<svg style="position:absolute;left:1044px;top:408px" width="6" height="6"><path d="M0 0 L5.5 0 L0 5.5 Z" fill="#1a7f37"/></svg>
<div style="position:absolute;left:875.5px;width:400px;top:409.69px;font-size:8.4px;line-height:1;white-space:pre;color:#000;font-weight:normal;text-align:center;letter-spacing:-0.2px;-webkit-text-stroke:0.05px #000;">#VALUE!</div>
<svg style="position:absolute;left:1044px;top:456px" width="6" height="6"><path d="M0 0 L5.5 0 L0 5.5 Z" fill="#1a7f37"/></svg>
<div style="position:absolute;left:875.5px;width:400px;top:457.69px;font-size:8.4px;line-height:1;white-space:pre;color:#000;font-weight:normal;text-align:center;letter-spacing:-0.2px;-webkit-text-stroke:0.05px #000;">#VALUE!</div>
<svg style="position:absolute;left:1044px;top:468px" width="6" height="6"><path d="M0 0 L5.5 0 L0 5.5 Z" fill="#1a7f37"/></svg>
<div style="position:absolute;left:875.5px;width:400px;top:469.69px;font-size:8.4px;line-height:1;white-space:pre;color:#000;font-weight:normal;text-align:center;letter-spacing:-0.2px;-webkit-text-stroke:0.05px #000;">#VALUE!</div>
<svg style="position:absolute;left:1044px;top:480px" width="6" height="6"><path d="M0 0 L5.5 0 L0 5.5 Z" fill="#1a7f37"/></svg>
<div style="position:absolute;left:875.5px;width:400px;top:481.69px;font-size:8.4px;line-height:1;white-space:pre;color:#000;font-weight:normal;text-align:center;letter-spacing:-0.2px;-webkit-text-stroke:0.05px #000;">#VALUE!</div>
<svg style="position:absolute;left:1044px;top:492px" width="6" height="6"><path d="M0 0 L5.5 0 L0 5.5 Z" fill="#1a7f37"/></svg>
<div style="position:absolute;left:875.5px;width:400px;top:493.69px;font-size:8.4px;line-height:1;white-space:pre;color:#000;font-weight:normal;text-align:center;letter-spacing:-0.2px;-webkit-text-stroke:0.05px #000;">#VALUE!</div>
<svg style="position:absolute;left:1044px;top:504px" width="6" height="6"><path d="M0 0 L5.5 0 L0 5.5 Z" fill="#1a7f37"/></svg>
<div style="position:absolute;left:875.5px;width:400px;top:505.69px;font-size:8.4px;line-height:1;white-space:pre;color:#000;font-weight:normal;text-align:center;letter-spacing:-0.2px;-webkit-text-stroke:0.05px #000;">#VALUE!</div>
<div style="position:absolute;right:189px;top:518.69px;font-size:8.4px;line-height:1;white-space:pre;color:#000;font-weight:normal;text-align:right;letter-spacing:-0.2px;-webkit-text-stroke:0.05px #000;">-</div>
<div style="position:absolute;right:189px;top:530.69px;font-size:8.4px;line-height:1;white-space:pre;color:#000;font-weight:normal;text-align:right;letter-spacing:-0.2px;-webkit-text-stroke:0.05px #000;">-</div>
<div style="position:absolute;right:189px;top:542.69px;font-size:8.4px;line-height:1;white-space:pre;color:#000;font-weight:normal;text-align:right;letter-spacing:-0.2px;-webkit-text-stroke:0.05px #000;">-</div>
<svg style="position:absolute;left:1044px;top:553px" width="6" height="6"><path d="M0 0 L5.5 0 L0 5.5 Z" fill="#1a7f37"/></svg>
<div style="position:absolute;left:875.5px;width:400px;top:554.69px;font-size:8.4px;line-height:1;white-space:pre;color:#000;font-weight:normal;text-align:center;letter-spacing:-0.2px;-webkit-text-stroke:0.05px #000;">#VALUE!</div>
<svg style="position:absolute;left:1044px;top:565px" width="6" height="6"><path d="M0 0 L5.5 0 L0 5.5 Z" fill="#1a7f37"/></svg>
<div style="position:absolute;left:875.5px;width:400px;top:566.69px;font-size:8.4px;line-height:1;white-space:pre;color:#000;font-weight:normal;text-align:center;letter-spacing:-0.2px;-webkit-text-stroke:0.05px #000;">#VALUE!</div>
<svg style="position:absolute;left:1044px;top:577px" width="6" height="6"><path d="M0 0 L5.5 0 L0 5.5 Z" fill="#1a7f37"/></svg>
<div style="position:absolute;left:875.5px;width:400px;top:578.69px;font-size:8.4px;line-height:1;white-space:pre;color:#000;font-weight:normal;text-align:center;letter-spacing:-0.2px;-webkit-text-stroke:0.05px #000;">#VALUE!</div>
<div style="position:absolute;right:189px;top:590.69px;font-size:8.4px;line-height:1;white-space:pre;color:#000;font-weight:normal;text-align:right;letter-spacing:-0.2px;-webkit-text-stroke:0.05px #000;">-</div>
<div style="position:absolute;right:189px;top:602.69px;font-size:8.4px;line-height:1;white-space:pre;color:#000;font-weight:normal;text-align:right;letter-spacing:-0.2px;-webkit-text-stroke:0.05px #000;">-</div>
<div style="position:absolute;right:189px;top:614.69px;font-size:8.4px;line-height:1;white-space:pre;color:#000;font-weight:normal;text-align:right;letter-spacing:-0.2px;-webkit-text-stroke:0.05px #000;">-</div>
<svg style="position:absolute;left:1044px;top:625px" width="6" height="6"><path d="M0 0 L5.5 0 L0 5.5 Z" fill="#1a7f37"/></svg>
<div style="position:absolute;left:875.5px;width:400px;top:626.69px;font-size:8.4px;line-height:1;white-space:pre;color:#000;font-weight:normal;text-align:center;letter-spacing:-0.2px;-webkit-text-stroke:0.05px #000;">#VALUE!</div>
<svg style="position:absolute;left:1044px;top:637px" width="6" height="6"><path d="M0 0 L5.5 0 L0 5.5 Z" fill="#1a7f37"/></svg>
<div style="position:absolute;left:875.5px;width:400px;top:638.69px;font-size:8.4px;line-height:1;white-space:pre;color:#000;font-weight:normal;text-align:center;letter-spacing:-0.2px;-webkit-text-stroke:0.05px #000;">#VALUE!</div>
<svg style="position:absolute;left:1044px;top:649px" width="6" height="6"><path d="M0 0 L5.5 0 L0 5.5 Z" fill="#1a7f37"/></svg>
<div style="position:absolute;left:875.5px;width:400px;top:650.69px;font-size:8.4px;line-height:1;white-space:pre;color:#000;font-weight:normal;text-align:center;letter-spacing:-0.2px;-webkit-text-stroke:0.05px #000;">#VALUE!</div>
<div style="position:absolute;right:189px;top:662.69px;font-size:8.4px;line-height:1;white-space:pre;color:#000;font-weight:normal;text-align:right;letter-spacing:-0.2px;-webkit-text-stroke:0.05px #000;">-</div>
<svg style="position:absolute;left:1106px;top:214px" width="6" height="6"><path d="M0 0 L5.5 0 L0 5.5 Z" fill="#1a7f37"/></svg>
<div style="position:absolute;left:937.5px;width:400px;top:215.69px;font-size:8.4px;line-height:1;white-space:pre;color:#000;font-weight:normal;text-align:center;letter-spacing:-0.2px;-webkit-text-stroke:0.05px #000;">#VALUE!</div>
<div style="position:absolute;right:118px;top:227.69px;font-size:8.4px;line-height:1;white-space:pre;color:#000;font-weight:normal;text-align:right;letter-spacing:-0.2px;-webkit-text-stroke:0.05px #000;">43,981,253</div>
<div style="position:absolute;right:127px;top:239.69px;font-size:8.4px;line-height:1;white-space:pre;color:#000;font-weight:normal;text-align:right;letter-spacing:-0.2px;-webkit-text-stroke:0.05px #000;">-</div>
<div style="position:absolute;right:118px;top:251.69px;font-size:8.4px;line-height:1;white-space:pre;color:#000;font-weight:normal;text-align:right;letter-spacing:-0.2px;-webkit-text-stroke:0.05px #000;">1,462,265,911</div>
<div style="position:absolute;right:112.70000000000005px;top:263.69px;font-size:8.4px;line-height:1;white-space:pre;color:#000;font-weight:normal;text-align:right;letter-spacing:-0.2px;-webkit-text-stroke:0.05px #000;letter-spacing:-0.3px;">#############</div>
<svg style="position:absolute;left:1106px;top:274px" width="6" height="6"><path d="M0 0 L5.5 0 L0 5.5 Z" fill="#1a7f37"/></svg>
<div style="position:absolute;left:937.5px;width:400px;top:275.69px;font-size:8.4px;line-height:1;white-space:pre;color:#000;font-weight:normal;text-align:center;letter-spacing:-0.2px;-webkit-text-stroke:0.05px #000;">#VALUE!</div>
<svg style="position:absolute;left:1106px;top:286px" width="6" height="6"><path d="M0 0 L5.5 0 L0 5.5 Z" fill="#1a7f37"/></svg>
<div style="position:absolute;left:937.5px;width:400px;top:287.69px;font-size:8.4px;line-height:1;white-space:pre;color:#000;font-weight:normal;text-align:center;letter-spacing:-0.2px;-webkit-text-stroke:0.05px #000;">#VALUE!</div>
<svg style="position:absolute;left:1106px;top:298px" width="6" height="6"><path d="M0 0 L5.5 0 L0 5.5 Z" fill="#1a7f37"/></svg>
<div style="position:absolute;left:937.5px;width:400px;top:299.69px;font-size:8.4px;line-height:1;white-space:pre;color:#000;font-weight:normal;text-align:center;letter-spacing:-0.2px;-webkit-text-stroke:0.05px #000;">#VALUE!</div>
<svg style="position:absolute;left:1106px;top:310px" width="6" height="6"><path d="M0 0 L5.5 0 L0 5.5 Z" fill="#1a7f37"/></svg>
<div style="position:absolute;left:937.5px;width:400px;top:311.69px;font-size:8.4px;line-height:1;white-space:pre;color:#000;font-weight:normal;text-align:center;letter-spacing:-0.2px;-webkit-text-stroke:0.05px #000;">#VALUE!</div>
<svg style="position:absolute;left:1106px;top:347px" width="6" height="6"><path d="M0 0 L5.5 0 L0 5.5 Z" fill="#1a7f37"/></svg>
<div style="position:absolute;left:937.5px;width:400px;top:348.69px;font-size:8.4px;line-height:1;white-space:pre;color:#000;font-weight:normal;text-align:center;letter-spacing:-0.2px;-webkit-text-stroke:0.05px #000;">#VALUE!</div>
<svg style="position:absolute;left:1106px;top:359px" width="6" height="6"><path d="M0 0 L5.5 0 L0 5.5 Z" fill="#1a7f37"/></svg>
<div style="position:absolute;left:937.5px;width:400px;top:360.69px;font-size:8.4px;line-height:1;white-space:pre;color:#000;font-weight:normal;text-align:center;letter-spacing:-0.2px;-webkit-text-stroke:0.05px #000;">#VALUE!</div>
<svg style="position:absolute;left:1106px;top:371px" width="6" height="6"><path d="M0 0 L5.5 0 L0 5.5 Z" fill="#1a7f37"/></svg>
<div style="position:absolute;left:937.5px;width:400px;top:372.69px;font-size:8.4px;line-height:1;white-space:pre;color:#000;font-weight:normal;text-align:center;letter-spacing:-0.2px;-webkit-text-stroke:0.05px #000;">#VALUE!</div>
<svg style="position:absolute;left:1106px;top:383px" width="6" height="6"><path d="M0 0 L5.5 0 L0 5.5 Z" fill="#1a7f37"/></svg>
<div style="position:absolute;left:937.5px;width:400px;top:384.69px;font-size:8.4px;line-height:1;white-space:pre;color:#000;font-weight:normal;text-align:center;letter-spacing:-0.2px;-webkit-text-stroke:0.05px #000;">#VALUE!</div>
<svg style="position:absolute;left:1106px;top:408px" width="6" height="6"><path d="M0 0 L5.5 0 L0 5.5 Z" fill="#1a7f37"/></svg>
<div style="position:absolute;left:937.5px;width:400px;top:409.69px;font-size:8.4px;line-height:1;white-space:pre;color:#000;font-weight:normal;text-align:center;letter-spacing:-0.2px;-webkit-text-stroke:0.05px #000;">#VALUE!</div>
<svg style="position:absolute;left:1106px;top:456px" width="6" height="6"><path d="M0 0 L5.5 0 L0 5.5 Z" fill="#1a7f37"/></svg>
<div style="position:absolute;left:937.5px;width:400px;top:457.69px;font-size:8.4px;line-height:1;white-space:pre;color:#000;font-weight:normal;text-align:center;letter-spacing:-0.2px;-webkit-text-stroke:0.05px #000;">#VALUE!</div>
<svg style="position:absolute;left:1106px;top:468px" width="6" height="6"><path d="M0 0 L5.5 0 L0 5.5 Z" fill="#1a7f37"/></svg>
<div style="position:absolute;left:937.5px;width:400px;top:469.69px;font-size:8.4px;line-height:1;white-space:pre;color:#000;font-weight:normal;text-align:center;letter-spacing:-0.2px;-webkit-text-stroke:0.05px #000;">#VALUE!</div>
<svg style="position:absolute;left:1106px;top:480px" width="6" height="6"><path d="M0 0 L5.5 0 L0 5.5 Z" fill="#1a7f37"/></svg>
<div style="position:absolute;left:937.5px;width:400px;top:481.69px;font-size:8.4px;line-height:1;white-space:pre;color:#000;font-weight:normal;text-align:center;letter-spacing:-0.2px;-webkit-text-stroke:0.05px #000;">#VALUE!</div>
<svg style="position:absolute;left:1106px;top:492px" width="6" height="6"><path d="M0 0 L5.5 0 L0 5.5 Z" fill="#1a7f37"/></svg>
<div style="position:absolute;left:937.5px;width:400px;top:493.69px;font-size:8.4px;line-height:1;white-space:pre;color:#000;font-weight:normal;text-align:center;letter-spacing:-0.2px;-webkit-text-stroke:0.05px #000;">#VALUE!</div>
<svg style="position:absolute;left:1106px;top:504px" width="6" height="6"><path d="M0 0 L5.5 0 L0 5.5 Z" fill="#1a7f37"/></svg>
<div style="position:absolute;left:937.5px;width:400px;top:505.69px;font-size:8.4px;line-height:1;white-space:pre;color:#000;font-weight:normal;text-align:center;letter-spacing:-0.2px;-webkit-text-stroke:0.05px #000;">#VALUE!</div>
<div style="position:absolute;right:127px;top:518.69px;font-size:8.4px;line-height:1;white-space:pre;color:#000;font-weight:normal;text-align:right;letter-spacing:-0.2px;-webkit-text-stroke:0.05px #000;">-</div>
<div style="position:absolute;right:127px;top:530.69px;font-size:8.4px;line-height:1;white-space:pre;color:#000;font-weight:normal;text-align:right;letter-spacing:-0.2px;-webkit-text-stroke:0.05px #000;">-</div>
<div style="position:absolute;right:127px;top:542.69px;font-size:8.4px;line-height:1;white-space:pre;color:#000;font-weight:normal;text-align:right;letter-spacing:-0.2px;-webkit-text-stroke:0.05px #000;">-</div>
<svg style="position:absolute;left:1106px;top:553px" width="6" height="6"><path d="M0 0 L5.5 0 L0 5.5 Z" fill="#1a7f37"/></svg>
<div style="position:absolute;left:937.5px;width:400px;top:554.69px;font-size:8.4px;line-height:1;white-space:pre;color:#000;font-weight:normal;text-align:center;letter-spacing:-0.2px;-webkit-text-stroke:0.05px #000;">#VALUE!</div>
<svg style="position:absolute;left:1106px;top:565px" width="6" height="6"><path d="M0 0 L5.5 0 L0 5.5 Z" fill="#1a7f37"/></svg>
<div style="position:absolute;left:937.5px;width:400px;top:566.69px;font-size:8.4px;line-height:1;white-space:pre;color:#000;font-weight:normal;text-align:center;letter-spacing:-0.2px;-webkit-text-stroke:0.05px #000;">#VALUE!</div>
<svg style="position:absolute;left:1106px;top:577px" width="6" height="6"><path d="M0 0 L5.5 0 L0 5.5 Z" fill="#1a7f37"/></svg>
<div style="position:absolute;left:937.5px;width:400px;top:578.69px;font-size:8.4px;line-height:1;white-space:pre;color:#000;font-weight:normal;text-align:center;letter-spacing:-0.2px;-webkit-text-stroke:0.05px #000;">#VALUE!</div>
<div style="position:absolute;right:127px;top:590.69px;font-size:8.4px;line-height:1;white-space:pre;color:#000;font-weight:normal;text-align:right;letter-spacing:-0.2px;-webkit-text-stroke:0.05px #000;">-</div>
<div style="position:absolute;right:127px;top:602.69px;font-size:8.4px;line-height:1;white-space:pre;color:#000;font-weight:normal;text-align:right;letter-spacing:-0.2px;-webkit-text-stroke:0.05px #000;">-</div>
<div style="position:absolute;right:127px;top:614.69px;font-size:8.4px;line-height:1;white-space:pre;color:#000;font-weight:normal;text-align:right;letter-spacing:-0.2px;-webkit-text-stroke:0.05px #000;">-</div>
<svg style="position:absolute;left:1106px;top:625px" width="6" height="6"><path d="M0 0 L5.5 0 L0 5.5 Z" fill="#1a7f37"/></svg>
<div style="position:absolute;left:937.5px;width:400px;top:626.69px;font-size:8.4px;line-height:1;white-space:pre;color:#000;font-weight:normal;text-align:center;letter-spacing:-0.2px;-webkit-text-stroke:0.05px #000;">#VALUE!</div>
<svg style="position:absolute;left:1106px;top:637px" width="6" height="6"><path d="M0 0 L5.5 0 L0 5.5 Z" fill="#1a7f37"/></svg>
<div style="position:absolute;left:937.5px;width:400px;top:638.69px;font-size:8.4px;line-height:1;white-space:pre;color:#000;font-weight:normal;text-align:center;letter-spacing:-0.2px;-webkit-text-stroke:0.05px #000;">#VALUE!</div>
<svg style="position:absolute;left:1106px;top:649px" width="6" height="6"><path d="M0 0 L5.5 0 L0 5.5 Z" fill="#1a7f37"/></svg>
<div style="position:absolute;left:937.5px;width:400px;top:650.69px;font-size:8.4px;line-height:1;white-space:pre;color:#000;font-weight:normal;text-align:center;letter-spacing:-0.2px;-webkit-text-stroke:0.05px #000;">#VALUE!</div>
<div style="position:absolute;right:127px;top:662.69px;font-size:8.4px;line-height:1;white-space:pre;color:#000;font-weight:normal;text-align:right;letter-spacing:-0.2px;-webkit-text-stroke:0.05px #000;">-</div>
<svg style="position:absolute;left:1168px;top:214px" width="6" height="6"><path d="M0 0 L5.5 0 L0 5.5 Z" fill="#1a7f37"/></svg>
<div style="position:absolute;left:999.5px;width:400px;top:215.69px;font-size:8.4px;line-height:1;white-space:pre;color:#000;font-weight:normal;text-align:center;letter-spacing:-0.2px;-webkit-text-stroke:0.05px #000;">#VALUE!</div>
<div style="position:absolute;right:56px;top:227.69px;font-size:8.4px;line-height:1;white-space:pre;color:#000;font-weight:normal;text-align:right;letter-spacing:-0.2px;-webkit-text-stroke:0.05px #000;">44,640,972</div>
<div style="position:absolute;right:65px;top:239.69px;font-size:8.4px;line-height:1;white-space:pre;color:#000;font-weight:normal;text-align:right;letter-spacing:-0.2px;-webkit-text-stroke:0.05px #000;">-</div>
<div style="position:absolute;right:56px;top:251.69px;font-size:8.4px;line-height:1;white-space:pre;color:#000;font-weight:normal;text-align:right;letter-spacing:-0.2px;-webkit-text-stroke:0.05px #000;">1,462,265,911</div>
<div style="position:absolute;right:50.700000000000045px;top:263.69px;font-size:8.4px;line-height:1;white-space:pre;color:#000;font-weight:normal;text-align:right;letter-spacing:-0.2px;-webkit-text-stroke:0.05px #000;letter-spacing:-0.3px;">#############</div>
<svg style="position:absolute;left:1168px;top:274px" width="6" height="6"><path d="M0 0 L5.5 0 L0 5.5 Z" fill="#1a7f37"/></svg>
<div style="position:absolute;left:999.5px;width:400px;top:275.69px;font-size:8.4px;line-height:1;white-space:pre;color:#000;font-weight:normal;text-align:center;letter-spacing:-0.2px;-webkit-text-stroke:0.05px #000;">#VALUE!</div>
<svg style="position:absolute;left:1168px;top:286px" width="6" height="6"><path d="M0 0 L5.5 0 L0 5.5 Z" fill="#1a7f37"/></svg>
<div style="position:absolute;left:999.5px;width:400px;top:287.69px;font-size:8.4px;line-height:1;white-space:pre;color:#000;font-weight:normal;text-align:center;letter-spacing:-0.2px;-webkit-text-stroke:0.05px #000;">#VALUE!</div>
<svg style="position:absolute;left:1168px;top:298px" width="6" height="6"><path d="M0 0 L5.5 0 L0 5.5 Z" fill="#1a7f37"/></svg>
<div style="position:absolute;left:999.5px;width:400px;top:299.69px;font-size:8.4px;line-height:1;white-space:pre;color:#000;font-weight:normal;text-align:center;letter-spacing:-0.2px;-webkit-text-stroke:0.05px #000;">#VALUE!</div>
<svg style="position:absolute;left:1168px;top:310px" width="6" height="6"><path d="M0 0 L5.5 0 L0 5.5 Z" fill="#1a7f37"/></svg>
<div style="position:absolute;left:999.5px;width:400px;top:311.69px;font-size:8.4px;line-height:1;white-space:pre;color:#000;font-weight:normal;text-align:center;letter-spacing:-0.2px;-webkit-text-stroke:0.05px #000;">#VALUE!</div>
<svg style="position:absolute;left:1168px;top:347px" width="6" height="6"><path d="M0 0 L5.5 0 L0 5.5 Z" fill="#1a7f37"/></svg>
<div style="position:absolute;left:999.5px;width:400px;top:348.69px;font-size:8.4px;line-height:1;white-space:pre;color:#000;font-weight:normal;text-align:center;letter-spacing:-0.2px;-webkit-text-stroke:0.05px #000;">#VALUE!</div>
<svg style="position:absolute;left:1168px;top:359px" width="6" height="6"><path d="M0 0 L5.5 0 L0 5.5 Z" fill="#1a7f37"/></svg>
<div style="position:absolute;left:999.5px;width:400px;top:360.69px;font-size:8.4px;line-height:1;white-space:pre;color:#000;font-weight:normal;text-align:center;letter-spacing:-0.2px;-webkit-text-stroke:0.05px #000;">#VALUE!</div>
<svg style="position:absolute;left:1168px;top:371px" width="6" height="6"><path d="M0 0 L5.5 0 L0 5.5 Z" fill="#1a7f37"/></svg>
<div style="position:absolute;left:999.5px;width:400px;top:372.69px;font-size:8.4px;line-height:1;white-space:pre;color:#000;font-weight:normal;text-align:center;letter-spacing:-0.2px;-webkit-text-stroke:0.05px #000;">#VALUE!</div>
<svg style="position:absolute;left:1168px;top:383px" width="6" height="6"><path d="M0 0 L5.5 0 L0 5.5 Z" fill="#1a7f37"/></svg>
<div style="position:absolute;left:999.5px;width:400px;top:384.69px;font-size:8.4px;line-height:1;white-space:pre;color:#000;font-weight:normal;text-align:center;letter-spacing:-0.2px;-webkit-text-stroke:0.05px #000;">#VALUE!</div>
<svg style="position:absolute;left:1168px;top:408px" width="6" height="6"><path d="M0 0 L5.5 0 L0 5.5 Z" fill="#1a7f37"/></svg>
<div style="position:absolute;left:999.5px;width:400px;top:409.69px;font-size:8.4px;line-height:1;white-space:pre;color:#000;font-weight:normal;text-align:center;letter-spacing:-0.2px;-webkit-text-stroke:0.05px #000;">#VALUE!</div>
<svg style="position:absolute;left:1168px;top:456px" width="6" height="6"><path d="M0 0 L5.5 0 L0 5.5 Z" fill="#1a7f37"/></svg>
<div style="position:absolute;left:999.5px;width:400px;top:457.69px;font-size:8.4px;line-height:1;white-space:pre;color:#000;font-weight:normal;text-align:center;letter-spacing:-0.2px;-webkit-text-stroke:0.05px #000;">#VALUE!</div>
<svg style="position:absolute;left:1168px;top:468px" width="6" height="6"><path d="M0 0 L5.5 0 L0 5.5 Z" fill="#1a7f37"/></svg>
<div style="position:absolute;left:999.5px;width:400px;top:469.69px;font-size:8.4px;line-height:1;white-space:pre;color:#000;font-weight:normal;text-align:center;letter-spacing:-0.2px;-webkit-text-stroke:0.05px #000;">#VALUE!</div>
<svg style="position:absolute;left:1168px;top:480px" width="6" height="6"><path d="M0 0 L5.5 0 L0 5.5 Z" fill="#1a7f37"/></svg>
<div style="position:absolute;left:999.5px;width:400px;top:481.69px;font-size:8.4px;line-height:1;white-space:pre;color:#000;font-weight:normal;text-align:center;letter-spacing:-0.2px;-webkit-text-stroke:0.05px #000;">#VALUE!</div>
<svg style="position:absolute;left:1168px;top:492px" width="6" height="6"><path d="M0 0 L5.5 0 L0 5.5 Z" fill="#1a7f37"/></svg>
<div style="position:absolute;left:999.5px;width:400px;top:493.69px;font-size:8.4px;line-height:1;white-space:pre;color:#000;font-weight:normal;text-align:center;letter-spacing:-0.2px;-webkit-text-stroke:0.05px #000;">#VALUE!</div>
<svg style="position:absolute;left:1168px;top:504px" width="6" height="6"><path d="M0 0 L5.5 0 L0 5.5 Z" fill="#1a7f37"/></svg>
<div style="position:absolute;left:999.5px;width:400px;top:505.69px;font-size:8.4px;line-height:1;white-space:pre;color:#000;font-weight:normal;text-align:center;letter-spacing:-0.2px;-webkit-text-stroke:0.05px #000;">#VALUE!</div>
<div style="position:absolute;right:65px;top:518.69px;font-size:8.4px;line-height:1;white-space:pre;color:#000;font-weight:normal;text-align:right;letter-spacing:-0.2px;-webkit-text-stroke:0.05px #000;">-</div>
<div style="position:absolute;right:65px;top:530.69px;font-size:8.4px;line-height:1;white-space:pre;color:#000;font-weight:normal;text-align:right;letter-spacing:-0.2px;-webkit-text-stroke:0.05px #000;">-</div>
<div style="position:absolute;right:65px;top:542.69px;font-size:8.4px;line-height:1;white-space:pre;color:#000;font-weight:normal;text-align:right;letter-spacing:-0.2px;-webkit-text-stroke:0.05px #000;">-</div>
<svg style="position:absolute;left:1168px;top:553px" width="6" height="6"><path d="M0 0 L5.5 0 L0 5.5 Z" fill="#1a7f37"/></svg>
<div style="position:absolute;left:999.5px;width:400px;top:554.69px;font-size:8.4px;line-height:1;white-space:pre;color:#000;font-weight:normal;text-align:center;letter-spacing:-0.2px;-webkit-text-stroke:0.05px #000;">#VALUE!</div>
<svg style="position:absolute;left:1168px;top:565px" width="6" height="6"><path d="M0 0 L5.5 0 L0 5.5 Z" fill="#1a7f37"/></svg>
<div style="position:absolute;left:999.5px;width:400px;top:566.69px;font-size:8.4px;line-height:1;white-space:pre;color:#000;font-weight:normal;text-align:center;letter-spacing:-0.2px;-webkit-text-stroke:0.05px #000;">#VALUE!</div>
<svg style="position:absolute;left:1168px;top:577px" width="6" height="6"><path d="M0 0 L5.5 0 L0 5.5 Z" fill="#1a7f37"/></svg>
<div style="position:absolute;left:999.5px;width:400px;top:578.69px;font-size:8.4px;line-height:1;white-space:pre;color:#000;font-weight:normal;text-align:center;letter-spacing:-0.2px;-webkit-text-stroke:0.05px #000;">#VALUE!</div>
<div style="position:absolute;right:65px;top:590.69px;font-size:8.4px;line-height:1;white-space:pre;color:#000;font-weight:normal;text-align:right;letter-spacing:-0.2px;-webkit-text-stroke:0.05px #000;">-</div>
<div style="position:absolute;right:65px;top:602.69px;font-size:8.4px;line-height:1;white-space:pre;color:#000;font-weight:normal;text-align:right;letter-spacing:-0.2px;-webkit-text-stroke:0.05px #000;">-</div>
<div style="position:absolute;right:65px;top:614.69px;font-size:8.4px;line-height:1;white-space:pre;color:#000;font-weight:normal;text-align:right;letter-spacing:-0.2px;-webkit-text-stroke:0.05px #000;">-</div>
<svg style="position:absolute;left:1168px;top:625px" width="6" height="6"><path d="M0 0 L5.5 0 L0 5.5 Z" fill="#1a7f37"/></svg>
<div style="position:absolute;left:999.5px;width:400px;top:626.69px;font-size:8.4px;line-height:1;white-space:pre;color:#000;font-weight:normal;text-align:center;letter-spacing:-0.2px;-webkit-text-stroke:0.05px #000;">#VALUE!</div>
<svg style="position:absolute;left:1168px;top:637px" width="6" height="6"><path d="M0 0 L5.5 0 L0 5.5 Z" fill="#1a7f37"/></svg>
<div style="position:absolute;left:999.5px;width:400px;top:638.69px;font-size:8.4px;line-height:1;white-space:pre;color:#000;font-weight:normal;text-align:center;letter-spacing:-0.2px;-webkit-text-stroke:0.05px #000;">#VALUE!</div>
<svg style="position:absolute;left:1168px;top:649px" width="6" height="6"><path d="M0 0 L5.5 0 L0 5.5 Z" fill="#1a7f37"/></svg>
<div style="position:absolute;left:999.5px;width:400px;top:650.69px;font-size:8.4px;line-height:1;white-space:pre;color:#000;font-weight:normal;text-align:center;letter-spacing:-0.2px;-webkit-text-stroke:0.05px #000;">#VALUE!</div>
<div style="position:absolute;right:65px;top:662.69px;font-size:8.4px;line-height:1;white-space:pre;color:#000;font-weight:normal;text-align:right;letter-spacing:-0.2px;-webkit-text-stroke:0.05px #000;">-</div>
<svg style="position:absolute;left:1230px;top:214px" width="6" height="6"><path d="M0 0 L5.5 0 L0 5.5 Z" fill="#1a7f37"/></svg>
<div style="position:absolute;left:1061.5px;width:400px;top:215.69px;font-size:8.4px;line-height:1;white-space:pre;color:#000;font-weight:normal;text-align:center;letter-spacing:-0.2px;-webkit-text-stroke:0.05px #000;">#VALUE!</div>
<div style="position:absolute;right:-6px;top:227.69px;font-size:8.4px;line-height:1;white-space:pre;color:#000;font-weight:normal;text-align:right;letter-spacing:-0.2px;-webkit-text-stroke:0.05px #000;">45,310,587</div>
<div style="position:absolute;right:3px;top:239.69px;font-size:8.4px;line-height:1;white-space:pre;color:#000;font-weight:normal;text-align:right;letter-spacing:-0.2px;-webkit-text-stroke:0.05px #000;">-</div>
<div style="position:absolute;right:-6px;top:251.69px;font-size:8.4px;line-height:1;white-space:pre;color:#000;font-weight:normal;text-align:right;letter-spacing:-0.2px;-webkit-text-stroke:0.05px #000;">1,462,265,911</div>
<div style="position:absolute;right:-11.299999999999955px;top:263.69px;font-size:8.4px;line-height:1;white-space:pre;color:#000;font-weight:normal;text-align:right;letter-spacing:-0.2px;-webkit-text-stroke:0.05px #000;letter-spacing:-0.3px;">#############</div>
<svg style="position:absolute;left:1230px;top:274px" width="6" height="6"><path d="M0 0 L5.5 0 L0 5.5 Z" fill="#1a7f37"/></svg>
<div style="position:absolute;left:1061.5px;width:400px;top:275.69px;font-size:8.4px;line-height:1;white-space:pre;color:#000;font-weight:normal;text-align:center;letter-spacing:-0.2px;-webkit-text-stroke:0.05px #000;">#VALUE!</div>
<svg style="position:absolute;left:1230px;top:286px" width="6" height="6"><path d="M0 0 L5.5 0 L0 5.5 Z" fill="#1a7f37"/></svg>
<div style="position:absolute;left:1061.5px;width:400px;top:287.69px;font-size:8.4px;line-height:1;white-space:pre;color:#000;font-weight:normal;text-align:center;letter-spacing:-0.2px;-webkit-text-stroke:0.05px #000;">#VALUE!</div>
<svg style="position:absolute;left:1230px;top:298px" width="6" height="6"><path d="M0 0 L5.5 0 L0 5.5 Z" fill="#1a7f37"/></svg>
<div style="position:absolute;left:1061.5px;width:400px;top:299.69px;font-size:8.4px;line-height:1;white-space:pre;color:#000;font-weight:normal;text-align:center;letter-spacing:-0.2px;-webkit-text-stroke:0.05px #000;">#VALUE!</div>
<svg style="position:absolute;left:1230px;top:310px" width="6" height="6"><path d="M0 0 L5.5 0 L0 5.5 Z" fill="#1a7f37"/></svg>
<div style="position:absolute;left:1061.5px;width:400px;top:311.69px;font-size:8.4px;line-height:1;white-space:pre;color:#000;font-weight:normal;text-align:center;letter-spacing:-0.2px;-webkit-text-stroke:0.05px #000;">#VALUE!</div>
<svg style="position:absolute;left:1230px;top:347px" width="6" height="6"><path d="M0 0 L5.5 0 L0 5.5 Z" fill="#1a7f37"/></svg>
<div style="position:absolute;left:1061.5px;width:400px;top:348.69px;font-size:8.4px;line-height:1;white-space:pre;color:#000;font-weight:normal;text-align:center;letter-spacing:-0.2px;-webkit-text-stroke:0.05px #000;">#VALUE!</div>
<svg style="position:absolute;left:1230px;top:359px" width="6" height="6"><path d="M0 0 L5.5 0 L0 5.5 Z" fill="#1a7f37"/></svg>
<div style="position:absolute;left:1061.5px;width:400px;top:360.69px;font-size:8.4px;line-height:1;white-space:pre;color:#000;font-weight:normal;text-align:center;letter-spacing:-0.2px;-webkit-text-stroke:0.05px #000;">#VALUE!</div>
<svg style="position:absolute;left:1230px;top:371px" width="6" height="6"><path d="M0 0 L5.5 0 L0 5.5 Z" fill="#1a7f37"/></svg>
<div style="position:absolute;left:1061.5px;width:400px;top:372.69px;font-size:8.4px;line-height:1;white-space:pre;color:#000;font-weight:normal;text-align:center;letter-spacing:-0.2px;-webkit-text-stroke:0.05px #000;">#VALUE!</div>
<svg style="position:absolute;left:1230px;top:383px" width="6" height="6"><path d="M0 0 L5.5 0 L0 5.5 Z" fill="#1a7f37"/></svg>
<div style="position:absolute;left:1061.5px;width:400px;top:384.69px;font-size:8.4px;line-height:1;white-space:pre;color:#000;font-weight:normal;text-align:center;letter-spacing:-0.2px;-webkit-text-stroke:0.05px #000;">#VALUE!</div>
<svg style="position:absolute;left:1230px;top:408px" width="6" height="6"><path d="M0 0 L5.5 0 L0 5.5 Z" fill="#1a7f37"/></svg>
<div style="position:absolute;left:1061.5px;width:400px;top:409.69px;font-size:8.4px;line-height:1;white-space:pre;color:#000;font-weight:normal;text-align:center;letter-spacing:-0.2px;-webkit-text-stroke:0.05px #000;">#VALUE!</div>
<svg style="position:absolute;left:1230px;top:456px" width="6" height="6"><path d="M0 0 L5.5 0 L0 5.5 Z" fill="#1a7f37"/></svg>
<div style="position:absolute;left:1061.5px;width:400px;top:457.69px;font-size:8.4px;line-height:1;white-space:pre;color:#000;font-weight:normal;text-align:center;letter-spacing:-0.2px;-webkit-text-stroke:0.05px #000;">#VALUE!</div>
<svg style="position:absolute;left:1230px;top:468px" width="6" height="6"><path d="M0 0 L5.5 0 L0 5.5 Z" fill="#1a7f37"/></svg>
<div style="position:absolute;left:1061.5px;width:400px;top:469.69px;font-size:8.4px;line-height:1;white-space:pre;color:#000;font-weight:normal;text-align:center;letter-spacing:-0.2px;-webkit-text-stroke:0.05px #000;">#VALUE!</div>
<svg style="position:absolute;left:1230px;top:480px" width="6" height="6"><path d="M0 0 L5.5 0 L0 5.5 Z" fill="#1a7f37"/></svg>
<div style="position:absolute;left:1061.5px;width:400px;top:481.69px;font-size:8.4px;line-height:1;white-space:pre;color:#000;font-weight:normal;text-align:center;letter-spacing:-0.2px;-webkit-text-stroke:0.05px #000;">#VALUE!</div>
<svg style="position:absolute;left:1230px;top:492px" width="6" height="6"><path d="M0 0 L5.5 0 L0 5.5 Z" fill="#1a7f37"/></svg>
<div style="position:absolute;left:1061.5px;width:400px;top:493.69px;font-size:8.4px;line-height:1;white-space:pre;color:#000;font-weight:normal;text-align:center;letter-spacing:-0.2px;-webkit-text-stroke:0.05px #000;">#VALUE!</div>
<svg style="position:absolute;left:1230px;top:504px" width="6" height="6"><path d="M0 0 L5.5 0 L0 5.5 Z" fill="#1a7f37"/></svg>
<div style="position:absolute;left:1061.5px;width:400px;top:505.69px;font-size:8.4px;line-height:1;white-space:pre;color:#000;font-weight:normal;text-align:center;letter-spacing:-0.2px;-webkit-text-stroke:0.05px #000;">#VALUE!</div>
<div style="position:absolute;right:3px;top:518.69px;font-size:8.4px;line-height:1;white-space:pre;color:#000;font-weight:normal;text-align:right;letter-spacing:-0.2px;-webkit-text-stroke:0.05px #000;">-</div>
<div style="position:absolute;right:3px;top:530.69px;font-size:8.4px;line-height:1;white-space:pre;color:#000;font-weight:normal;text-align:right;letter-spacing:-0.2px;-webkit-text-stroke:0.05px #000;">-</div>
<div style="position:absolute;right:3px;top:542.69px;font-size:8.4px;line-height:1;white-space:pre;color:#000;font-weight:normal;text-align:right;letter-spacing:-0.2px;-webkit-text-stroke:0.05px #000;">-</div>
<svg style="position:absolute;left:1230px;top:553px" width="6" height="6"><path d="M0 0 L5.5 0 L0 5.5 Z" fill="#1a7f37"/></svg>
<div style="position:absolute;left:1061.5px;width:400px;top:554.69px;font-size:8.4px;line-height:1;white-space:pre;color:#000;font-weight:normal;text-align:center;letter-spacing:-0.2px;-webkit-text-stroke:0.05px #000;">#VALUE!</div>
<svg style="position:absolute;left:1230px;top:565px" width="6" height="6"><path d="M0 0 L5.5 0 L0 5.5 Z" fill="#1a7f37"/></svg>
<div style="position:absolute;left:1061.5px;width:400px;top:566.69px;font-size:8.4px;line-height:1;white-space:pre;color:#000;font-weight:normal;text-align:center;letter-spacing:-0.2px;-webkit-text-stroke:0.05px #000;">#VALUE!</div>
<svg style="position:absolute;left:1230px;top:577px" width="6" height="6"><path d="M0 0 L5.5 0 L0 5.5 Z" fill="#1a7f37"/></svg>
<div style="position:absolute;left:1061.5px;width:400px;top:578.69px;font-size:8.4px;line-height:1;white-space:pre;color:#000;font-weight:normal;text-align:center;letter-spacing:-0.2px;-webkit-text-stroke:0.05px #000;">#VALUE!</div>
<div style="position:absolute;right:3px;top:590.69px;font-size:8.4px;line-height:1;white-space:pre;color:#000;font-weight:normal;text-align:right;letter-spacing:-0.2px;-webkit-text-stroke:0.05px #000;">-</div>
<div style="position:absolute;right:3px;top:602.69px;font-size:8.4px;line-height:1;white-space:pre;color:#000;font-weight:normal;text-align:right;letter-spacing:-0.2px;-webkit-text-stroke:0.05px #000;">-</div>
<div style="position:absolute;right:3px;top:614.69px;font-size:8.4px;line-height:1;white-space:pre;color:#000;font-weight:normal;text-align:right;letter-spacing:-0.2px;-webkit-text-stroke:0.05px #000;">-</div>
<svg style="position:absolute;left:1230px;top:625px" width="6" height="6"><path d="M0 0 L5.5 0 L0 5.5 Z" fill="#1a7f37"/></svg>
<div style="position:absolute;left:1061.5px;width:400px;top:626.69px;font-size:8.4px;line-height:1;white-space:pre;color:#000;font-weight:normal;text-align:center;letter-spacing:-0.2px;-webkit-text-stroke:0.05px #000;">#VALUE!</div>
<svg style="position:absolute;left:1230px;top:637px" width="6" height="6"><path d="M0 0 L5.5 0 L0 5.5 Z" fill="#1a7f37"/></svg>
<div style="position:absolute;left:1061.5px;width:400px;top:638.69px;font-size:8.4px;line-height:1;white-space:pre;color:#000;font-weight:normal;text-align:center;letter-spacing:-0.2px;-webkit-text-stroke:0.05px #000;">#VALUE!</div>
<svg style="position:absolute;left:1230px;top:649px" width="6" height="6"><path d="M0 0 L5.5 0 L0 5.5 Z" fill="#1a7f37"/></svg>
<div style="position:absolute;left:1061.5px;width:400px;top:650.69px;font-size:8.4px;line-height:1;white-space:pre;color:#000;font-weight:normal;text-align:center;letter-spacing:-0.2px;-webkit-text-stroke:0.05px #000;">#VALUE!</div>
<div style="position:absolute;right:3px;top:662.69px;font-size:8.4px;line-height:1;white-space:pre;color:#000;font-weight:normal;text-align:right;letter-spacing:-0.2px;-webkit-text-stroke:0.05px #000;">-</div>
<div style="position:absolute;left:0px;top:676px;width:1280px;height:26px;background:#ededed;"></div>
<div style="position:absolute;left:0px;top:702px;width:1280px;height:22px;background:linear-gradient(#e8e8e8,#d3d3d3);border-top:1px solid #b5b5b5;"></div>
<div style="position:absolute;left:60px;top:680px;width:1px;height:17px;background:#d2d2d2;"></div>
<div style="position:absolute;left:133px;top:680px;width:1px;height:17px;background:#d2d2d2;"></div>
<div style="position:absolute;left:229px;top:680px;width:1px;height:17px;background:#d2d2d2;"></div>
<div style="position:absolute;left:333px;top:680px;width:1px;height:17px;background:#d2d2d2;"></div>
<div style="position:absolute;left:467px;top:680px;width:1px;height:17px;background:#d2d2d2;"></div>
<div style="position:absolute;left:599px;top:680px;width:1px;height:17px;background:#d2d2d2;"></div>
<div style="position:absolute;left:782px;top:680px;width:1px;height:17px;background:#d2d2d2;"></div>
<div style="position:absolute;left:963px;top:680px;width:1px;height:17px;background:#d2d2d2;"></div>
<div style="position:absolute;left:1106px;top:680px;width:1px;height:17px;background:#d2d2d2;"></div>
<div style="position:absolute;left:1191px;top:680px;width:1px;height:17px;background:#d2d2d2;"></div>
<div style="position:absolute;left:1211px;top:680px;width:1px;height:17px;background:#d2d2d2;"></div>
<div style="position:absolute;left:1249px;top:680px;width:1px;height:17px;background:#d2d2d2;"></div>
<div style="position:absolute;left:782px;top:676px;width:181px;height:22px;background:#fff;box-shadow:0 1px 1px rgba(0,0,0,0.25);border-radius:0 0 3px 3px;"></div>
<div style="position:absolute;left:81px;top:682.50px;font-size:12.4px;line-height:1;white-space:pre;color:#5a5a5a;font-weight:normal;-webkit-text-stroke:0.3px #5a5a5a;">Notes</div>
<div style="position:absolute;left:145px;top:682.50px;font-size:12.4px;line-height:1;white-space:pre;color:#5a5a5a;font-weight:normal;-webkit-text-stroke:0.3px #5a5a5a;">Assumptions</div>
<div style="position:absolute;left:241.2px;top:682.50px;font-size:12.4px;line-height:1;white-space:pre;color:#5a5a5a;font-weight:normal;-webkit-text-stroke:0.3px #5a5a5a;">Scenario Page</div>
<div style="position:absolute;left:345.7px;top:682.50px;font-size:12.4px;line-height:1;white-space:pre;color:#5a5a5a;font-weight:normal;-webkit-text-stroke:0.3px #5a5a5a;">Cash Balance Chart</div>
<div style="position:absolute;left:479px;top:682.50px;font-size:12.4px;line-height:1;white-space:pre;color:#5a5a5a;font-weight:normal;-webkit-text-stroke:0.3px #5a5a5a;">Debt Balance Chart</div>
<div style="position:absolute;left:611px;top:682.50px;font-size:12.4px;line-height:1;white-space:pre;color:#5a5a5a;font-weight:normal;-webkit-text-stroke:0.3px #5a5a5a;">Monthly Consolidated Model</div>
<div style="position:absolute;left:794.3px;top:682.84px;font-size:12px;line-height:1;white-space:pre;color:#1f7d4c;font-weight:bold;">Annual Consolidated Model</div>
<div style="position:absolute;left:975.5px;top:682.50px;font-size:12.4px;line-height:1;white-space:pre;color:#5a5a5a;font-weight:normal;-webkit-text-stroke:0.3px #5a5a5a;">Degradation Example</div>
<div style="position:absolute;left:1118.75px;top:682.50px;font-size:12.4px;line-height:1;white-space:pre;color:#5a5a5a;font-weight:normal;-webkit-text-stroke:0.3px #5a5a5a;">Data Sheet</div>
<div style="position:absolute;left:134px;top:676px;width:95px;height:4px;background:#f06a7a;"></div>
<div style="position:absolute;left:230px;top:676px;width:103px;height:4px;background:#a98bc9;"></div>
<svg style="position:absolute;left:14px;top:684px" width="32" height="11"><path d="M8 0 L8 10 L1 5 Z" fill="#888"/><path d="M24 0 L24 10 L31 5 Z" fill="#444"/></svg>
<div style="position:absolute;left:1225px;top:688px;width:11px;height:2px;background:#4a4a4a;"></div>
<div style="position:absolute;left:1229.5px;top:683.5px;width:2px;height:11px;background:#4a4a4a;"></div>
<div style="position:absolute;left:1203px;top:682.84px;font-size:12px;line-height:1;white-space:pre;color:#ddd;font-weight:normal;">S</div>
<div style="position:absolute;left:24.6px;top:707.76px;font-size:12.1px;line-height:1;white-space:pre;color:#5a5a5a;font-weight:normal;-webkit-text-stroke:0.25px #5a5a5a;">Ready</div>
<div style="position:absolute;left:81px;top:707.50px;font-size:12.4px;line-height:1;white-space:pre;color:#5a5a5a;font-weight:normal;-webkit-text-stroke:0.25px #5a5a5a;">Calculate</div>
<div style="position:absolute;left:995px;top:703px;width:37px;height:21px;background:#a5a5a5;"></div>
<div style="position:absolute;left:1225.5px;top:707.33px;font-size:12.6px;line-height:1;white-space:pre;color:#5a5a5a;font-weight:normal;-webkit-text-stroke:0.25px #5a5a5a;">80%</div>
<svg style="position:absolute;left:1007px;top:707px;overflow:visible" width="13" height="13" viewBox="0 0 13 13"><rect x="0" y="0" width="13" height="13" fill="#fff"/><rect x="1.2" y="1.2" width="2.9" height="2.9" fill="#a9a9a9"/><rect x="5.05" y="1.2" width="2.9" height="2.9" fill="#a9a9a9"/><rect x="8.9" y="1.2" width="2.9" height="2.9" fill="#a9a9a9"/><rect x="1.2" y="5.05" width="2.9" height="2.9" fill="#a9a9a9"/><rect x="5.05" y="5.05" width="2.9" height="2.9" fill="#a9a9a9"/><rect x="8.9" y="5.05" width="2.9" height="2.9" fill="#a9a9a9"/><rect x="1.2" y="8.9" width="2.9" height="2.9" fill="#a9a9a9"/><rect x="5.05" y="8.9" width="2.9" height="2.9" fill="#a9a9a9"/><rect x="8.9" y="8.9" width="2.9" height="2.9" fill="#a9a9a9"/></svg>
<svg style="position:absolute;left:1042px;top:707px;overflow:visible" width="14" height="13" viewBox="0 0 14 13"><rect x="0.6" y="0.6" width="12.8" height="11.8" fill="none" stroke="#555" stroke-width="1.2"/><rect x="3" y="2.5" width="8" height="8" fill="none" stroke="#555" stroke-width="1"/><path d="M4.5 4.5 H9.5 M4.5 6.5 H9.5 M4.5 8.5 H9.5" stroke="#555" stroke-width="1"/></svg>
<div style="position:absolute;left:1075px;top:713px;width:8px;height:2px;background:#555;"></div>
<div style="position:absolute;left:1090px;top:712px;width:100px;height:4px;background:#8e8e8e;border-radius:2px;"></div>
<div style="position:absolute;left:1137px;top:713px;width:2px;height:2px;background:#ddd;"></div>
<div style="position:absolute;left:1124.5px;top:708px;width:12px;height:12px;border-radius:50%;background:#fbfbfb;border:0.5px solid #bbb;box-shadow:0 0.5px 1px rgba(0,0,0,0.3);"></div>
<div style="position:absolute;left:1197px;top:713px;width:9px;height:2px;background:#555;"></div>
<div style="position:absolute;left:1200.5px;top:709.5px;width:2px;height:9px;background:#555;"></div>
</body></html>
